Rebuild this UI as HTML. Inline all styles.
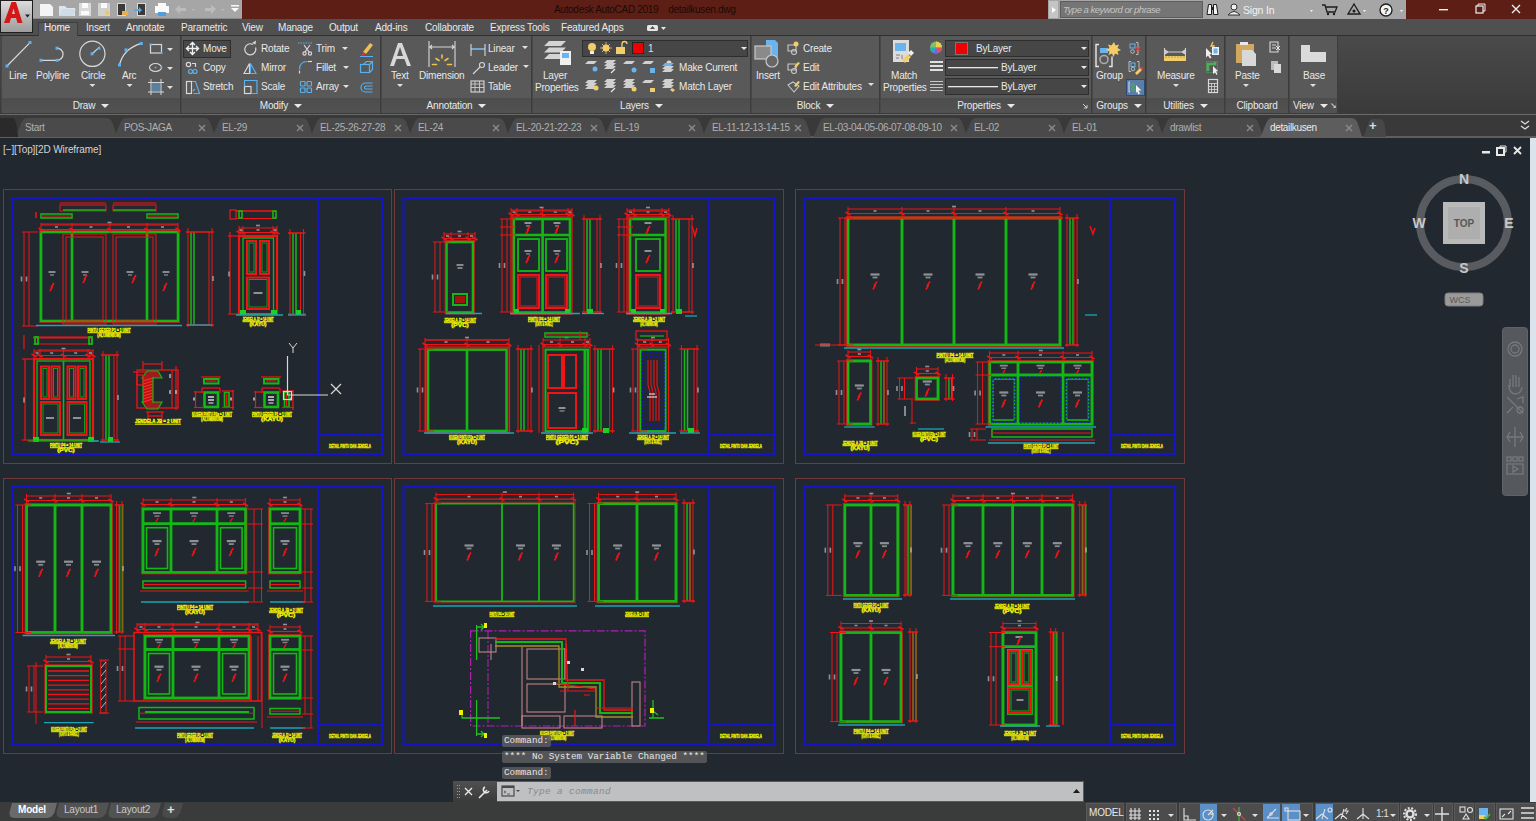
<!DOCTYPE html>
<html><head><meta charset="utf-8">
<style>
*{margin:0;padding:0;box-sizing:border-box}
html,body{width:1536px;height:821px;overflow:hidden;background:#212830;font-family:"Liberation Sans",sans-serif;position:relative}
.a{position:absolute}
.t{position:absolute;white-space:nowrap;color:#e8e8e8;font-size:10px;line-height:12px;letter-spacing:-0.2px}
svg{overflow:visible}
#title{left:0;top:0;width:1536px;height:19px;background:#5d1f15}
#qat{left:33px;top:0;width:209px;height:19px;background:#a6a6a6;border-bottom:1px solid #8a8a8a}
#logo{left:0;top:0;width:33px;height:33px;background:linear-gradient(#dcdcdc,#b4b4b4 60%,#9c9c9c);border:1px solid #1e1e1e}
#tabrow{left:0;top:19px;width:1536px;height:17px;background:#505050;border-bottom:1px solid #2f2f2f}
#ribbon{left:0;top:36px;width:1536px;height:78px;background:linear-gradient(#4a4a4a,#3a3a3a)}
.panel{position:absolute;top:0;height:77px;background:#595959;border-left:1px solid #474747;border-right:1px solid #3d3d3d}
.ptitle{position:absolute;left:0;top:62px;width:100%;height:15px;background:linear-gradient(#4d4d4d,#525252);text-align:center;font-size:10px;line-height:15px;color:#e8e8e8;letter-spacing:-0.2px}
.ptitle i{display:inline-block;width:0;height:0;border-left:4px solid transparent;border-right:4px solid transparent;border-top:4px solid #e8e8e8;margin-left:6px;vertical-align:1px}
.dd{position:absolute;width:0;height:0;border-left:3px solid transparent;border-right:3px solid transparent;border-top:3px solid #e0e0e0}
#filetabs{left:0;top:114px;width:1536px;height:24px;background:#393939;border-top:1px solid #6a6a6a;border-bottom:2px solid #5e5e5e}
.ftab{position:absolute;top:3px;height:19px;background:#4a4a4a;border-radius:7px 7px 0 0;color:#ababab;font-size:9.5px;line-height:18px;padding-left:8px;letter-spacing:-0.35px}
.ftab b{position:absolute;right:8px;top:0;color:#8a8a8a;font-weight:normal;font-size:12px}
#status{left:0;top:802px;width:1536px;height:19px;background:#3a3b3b}
.sb{position:absolute;top:803px;height:18px;background:#4c4c4c;border:1px solid #5a5a5a;border-bottom:none}
.hl{position:absolute;top:804px;height:17px;background:#5b8fc7}
.cmdh{position:absolute;left:502px;height:12px;background:rgba(92,92,92,0.85);border-radius:2px;font-family:"Liberation Mono",monospace;font-size:9.3px;line-height:12px;color:#e6e6e6;padding:0 2px}
</style></head><body>
<svg class="a" style="left:0;top:0" width="1536" height="821" viewBox="0 0 1536 821">
<g id="sheets" fill="none">
<rect x="3.5" y="189.5" width="388.0" height="274.0" stroke="#6e3a3a" stroke-width="1" fill="none" />
<rect x="12.5" y="198.0" width="369.5" height="256.0" stroke="#1414c8" stroke-width="2" fill="none"/>
<line x1="318.0" y1="198.0" x2="318.0" y2="454.0" stroke="#1414c8" stroke-width="2" />
<line x1="318.0" y1="435.0" x2="382.0" y2="435.0" stroke="#1414c8" stroke-width="2" />
<text x="329.0" y="447.5" font-size="5.4" fill="#f0f000" stroke="#f0f000" stroke-width="0.4" font-family="Liberation Sans" font-weight="bold" textLength="42" lengthAdjust="spacingAndGlyphs">DETAIL PINTU DAN JENDELA</text>
<rect x="41.0" y="232.0" width="137.0" height="89.0" stroke="#14b814" stroke-width="2.6" fill="none"/>
<rect x="39.5" y="230.5" width="140.0" height="92.0" stroke="#f01414" stroke-width="0.8" fill="none" opacity="0.8"/>
<line x1="72.0" y1="232.0" x2="72.0" y2="321.0" stroke="#14b814" stroke-width="2.6" />
<line x1="147.0" y1="232.0" x2="147.0" y2="321.0" stroke="#14b814" stroke-width="2.6" />
<line x1="41.0" y1="225.0" x2="178.0" y2="225.0" stroke="#f01414" stroke-width="1" />
<line x1="41.0" y1="229.5" x2="178.0" y2="229.5" stroke="#f01414" stroke-width="1.2" />
<line x1="41.0" y1="223.0" x2="41.0" y2="233.0" stroke="#f01414" stroke-width="1" />
<path d="M38.5 228.0 L43.5 231.0" stroke="#f01414" stroke-width="1.5"/>
<line x1="72.0" y1="223.0" x2="72.0" y2="233.0" stroke="#f01414" stroke-width="1" />
<path d="M69.5 228.0 L74.5 231.0" stroke="#f01414" stroke-width="1.5"/>
<line x1="110.0" y1="223.0" x2="110.0" y2="233.0" stroke="#f01414" stroke-width="1" />
<path d="M107.5 228.0 L112.5 231.0" stroke="#f01414" stroke-width="1.5"/>
<line x1="147.0" y1="223.0" x2="147.0" y2="233.0" stroke="#f01414" stroke-width="1" />
<path d="M144.5 228.0 L149.5 231.0" stroke="#f01414" stroke-width="1.5"/>
<line x1="178.0" y1="223.0" x2="178.0" y2="233.0" stroke="#f01414" stroke-width="1" />
<path d="M175.5 228.0 L180.5 231.0" stroke="#f01414" stroke-width="1.5"/>
<rect x="55.0" y="226.2" width="3.0" height="1.6" fill="#d8d8d8" opacity="0.6"/>
<rect x="89.5" y="226.2" width="3.0" height="1.6" fill="#d8d8d8" opacity="0.6"/>
<rect x="127.0" y="226.2" width="3.0" height="1.6" fill="#d8d8d8" opacity="0.6"/>
<rect x="161.0" y="226.2" width="3.0" height="1.6" fill="#d8d8d8" opacity="0.6"/>
<rect x="107.5" y="221.7" width="4.0" height="1.6" fill="#d8d8d8" opacity="0.6"/>
<line x1="41.0" y1="224.0" x2="178.0" y2="224.0" stroke="#f01414" stroke-width="1" />
<line x1="24.0" y1="232.0" x2="24.0" y2="326.0" stroke="#f01414" stroke-width="1" />
<line x1="29.0" y1="232.0" x2="29.0" y2="326.0" stroke="#f01414" stroke-width="1" />
<line x1="22.0" y1="232.0" x2="38.0" y2="232.0" stroke="#f01414" stroke-width="1" />
<line x1="22.0" y1="326.0" x2="38.0" y2="326.0" stroke="#f01414" stroke-width="1" />
<rect x="20.7" y="276.5" width="1.6" height="5.0" fill="#d8d8d8" opacity="0.6"/>
<rect x="25.7" y="276.5" width="1.6" height="5.0" fill="#d8d8d8" opacity="0.6"/>
<rect x="63.0" y="234.0" width="43.0" height="90.0" stroke="#f01414" stroke-width="1" fill="none" />
<rect x="66.0" y="237.0" width="37.0" height="84.0" stroke="#f01414" stroke-width="1" fill="none" />
<rect x="113.0" y="234.0" width="43.0" height="90.0" stroke="#f01414" stroke-width="1" fill="none" />
<rect x="116.0" y="237.0" width="37.0" height="84.0" stroke="#f01414" stroke-width="1" fill="none" />
<line x1="36.0" y1="325.5" x2="182.0" y2="325.5" stroke="#1aa6b4" stroke-width="1.3" />
<rect x="48.5" y="271.0" width="7.0" height="2.0" fill="#d8d8d8" opacity="0.55"/>
<rect x="50.0" y="274.2" width="4.0" height="1.5" fill="#d8d8d8" opacity="0.5"/>
<rect x="81.5" y="271.0" width="7.0" height="2.0" fill="#d8d8d8" opacity="0.55"/>
<rect x="83.0" y="274.2" width="4.0" height="1.5" fill="#d8d8d8" opacity="0.5"/>
<rect x="126.5" y="271.0" width="7.0" height="2.0" fill="#d8d8d8" opacity="0.55"/>
<rect x="128.0" y="274.2" width="4.0" height="1.5" fill="#d8d8d8" opacity="0.5"/>
<rect x="162.5" y="271.0" width="7.0" height="2.0" fill="#d8d8d8" opacity="0.55"/>
<rect x="164.0" y="274.2" width="4.0" height="1.5" fill="#d8d8d8" opacity="0.5"/>
<path d="M50.0 291.0 L52.5 286.5 L51.0 287.5 L54.0 283.0" stroke="#f01414" stroke-width="1.6" fill="none"/>
<path d="M83.0 283.0 L85.5 278.5 L84.0 279.5 L87.0 275.0" stroke="#f01414" stroke-width="1.6" fill="none"/>
<path d="M132.0 283.0 L134.5 278.5 L133.0 279.5 L136.0 275.0" stroke="#f01414" stroke-width="1.6" fill="none"/>
<path d="M163.0 291.0 L165.5 286.5 L164.0 287.5 L167.0 283.0" stroke="#f01414" stroke-width="1.6" fill="none"/>
<rect x="41.0" y="214.0" width="31.0" height="4.0" stroke="#14b814" stroke-width="1.5" fill="none" />
<rect x="147.0" y="214.0" width="31.0" height="4.0" stroke="#14b814" stroke-width="1.5" fill="none" />
<line x1="41.0" y1="216.0" x2="72.0" y2="216.0" stroke="#f01414" stroke-width="1" />
<line x1="147.0" y1="216.0" x2="178.0" y2="216.0" stroke="#f01414" stroke-width="1" />
<rect x="60.0" y="205.0" width="46.0" height="6.0" stroke="#f01414" stroke-width="1" fill="none" />
<rect x="113.0" y="205.0" width="43.0" height="6.0" stroke="#f01414" stroke-width="1" fill="none" />
<line x1="60.0" y1="203.0" x2="106.0" y2="203.0" stroke="#f01414" stroke-width="1" />
<line x1="113.0" y1="203.0" x2="156.0" y2="203.0" stroke="#f01414" stroke-width="1" />
<line x1="63.0" y1="210.0" x2="106.0" y2="210.0" stroke="#14b814" stroke-width="1.5" />
<line x1="113.0" y1="210.0" x2="156.0" y2="210.0" stroke="#14b814" stroke-width="1.5" />
<line x1="36.0" y1="212.0" x2="36.0" y2="218.0" stroke="#f01414" stroke-width="1.5" />
<line x1="191.0" y1="232.0" x2="191.0" y2="325.0" stroke="#14b814" stroke-width="1.5" />
<line x1="194.0" y1="232.0" x2="194.0" y2="325.0" stroke="#14b814" stroke-width="1.5" />
<line x1="188.0" y1="228.0" x2="188.0" y2="327.0" stroke="#f01414" stroke-width="1" />
<line x1="212.0" y1="228.0" x2="212.0" y2="327.0" stroke="#f01414" stroke-width="1" />
<line x1="209.0" y1="232.0" x2="209.0" y2="325.0" stroke="#f01414" stroke-width="1" />
<line x1="186.0" y1="232.0" x2="214.0" y2="232.0" stroke="#f01414" stroke-width="1.5" />
<line x1="186.0" y1="325.0" x2="214.0" y2="325.0" stroke="#f01414" stroke-width="1.5" />
<rect x="212.2" y="276.0" width="1.6" height="5.0" fill="#d8d8d8" opacity="0.6"/>
<line x1="187.0" y1="325.0" x2="212.0" y2="325.0" stroke="#1aa6b4" stroke-width="1.3" />
<rect x="239.0" y="236.0" width="38.0" height="78.0" stroke="#f01414" stroke-width="2.2" fill="none" />
<rect x="243.0" y="238.0" width="30.5" height="76.0" stroke="#14b814" stroke-width="1.3" fill="none" />
<rect x="247.0" y="241.0" width="9.0" height="33.0" stroke="#f01414" stroke-width="2" fill="none" />
<rect x="249.0" y="243.0" width="5.0" height="29.0" stroke="#14b814" stroke-width="0.8" fill="none" />
<rect x="260.0" y="241.0" width="9.0" height="33.0" stroke="#f01414" stroke-width="2" fill="none" />
<rect x="262.0" y="243.0" width="5.0" height="29.0" stroke="#14b814" stroke-width="0.8" fill="none" />
<rect x="247.0" y="277.5" width="22.0" height="31.5" stroke="#f01414" stroke-width="2" fill="none" />
<rect x="249.0" y="279.5" width="18.0" height="27.5" stroke="#14b814" stroke-width="0.8" fill="none" />
<rect x="253.5" y="292.0" width="9.0" height="2.0" fill="#d8d8d8" opacity="0.6"/>
<line x1="239.0" y1="228.0" x2="277.0" y2="228.0" stroke="#f01414" stroke-width="1" />
<line x1="239.0" y1="232.5" x2="277.0" y2="232.5" stroke="#f01414" stroke-width="1.2" />
<line x1="239.0" y1="226.0" x2="239.0" y2="236.0" stroke="#f01414" stroke-width="1" />
<path d="M236.5 231.0 L241.5 234.0" stroke="#f01414" stroke-width="1.5"/>
<line x1="243.0" y1="226.0" x2="243.0" y2="236.0" stroke="#f01414" stroke-width="1" />
<path d="M240.5 231.0 L245.5 234.0" stroke="#f01414" stroke-width="1.5"/>
<line x1="273.0" y1="226.0" x2="273.0" y2="236.0" stroke="#f01414" stroke-width="1" />
<path d="M270.5 231.0 L275.5 234.0" stroke="#f01414" stroke-width="1.5"/>
<line x1="277.0" y1="226.0" x2="277.0" y2="236.0" stroke="#f01414" stroke-width="1" />
<path d="M274.5 231.0 L279.5 234.0" stroke="#f01414" stroke-width="1.5"/>
<rect x="239.5" y="229.2" width="3.0" height="1.6" fill="#d8d8d8" opacity="0.6"/>
<rect x="256.5" y="229.2" width="3.0" height="1.6" fill="#d8d8d8" opacity="0.6"/>
<rect x="273.5" y="229.2" width="3.0" height="1.6" fill="#d8d8d8" opacity="0.6"/>
<rect x="256.0" y="224.7" width="4.0" height="1.6" fill="#d8d8d8" opacity="0.6"/>
<line x1="230.0" y1="232.0" x2="230.0" y2="314.0" stroke="#f01414" stroke-width="1.2" />
<line x1="228.0" y1="236.0" x2="239.0" y2="236.0" stroke="#f01414" stroke-width="1.2" />
<line x1="228.0" y1="314.0" x2="239.0" y2="314.0" stroke="#f01414" stroke-width="1.2" />
<rect x="228.2" y="271.5" width="1.6" height="5.0" fill="#d8d8d8" opacity="0.6"/>
<line x1="236.0" y1="211.0" x2="276.0" y2="211.0" stroke="#f01414" stroke-width="1.6" />
<line x1="236.0" y1="218.5" x2="276.0" y2="218.5" stroke="#f01414" stroke-width="1.2" />
<rect x="239.0" y="211.0" width="3.0" height="7.0" stroke="#14b814" stroke-width="1.6" fill="none" />
<rect x="273.0" y="211.0" width="3.0" height="7.0" stroke="#14b814" stroke-width="1.6" fill="none" />
<rect x="230.0" y="210.0" width="6.0" height="9.0" stroke="#f01414" stroke-width="1.2" fill="none" />
<rect x="240.0" y="310.0" width="6.0" height="5.0" fill="#20d020"/>
<rect x="271.0" y="310.0" width="6.0" height="5.0" fill="#20d020"/>
<line x1="236.0" y1="315.0" x2="283.0" y2="315.0" stroke="#1aa6b4" stroke-width="1.3" />
<line x1="293.0" y1="233.0" x2="293.0" y2="314.0" stroke="#14b814" stroke-width="1.5" />
<line x1="296.0" y1="233.0" x2="296.0" y2="314.0" stroke="#14b814" stroke-width="1.5" />
<line x1="290.0" y1="229.0" x2="290.0" y2="316.0" stroke="#f01414" stroke-width="1" />
<line x1="303.5" y1="229.0" x2="303.5" y2="316.0" stroke="#f01414" stroke-width="1" />
<line x1="300.5" y1="233.0" x2="300.5" y2="314.0" stroke="#f01414" stroke-width="1" />
<line x1="288.0" y1="233.0" x2="305.5" y2="233.0" stroke="#f01414" stroke-width="1.5" />
<line x1="288.0" y1="314.0" x2="305.5" y2="314.0" stroke="#f01414" stroke-width="1.5" />
<rect x="303.7" y="271.0" width="1.6" height="5.0" fill="#d8d8d8" opacity="0.6"/>
<rect x="296.0" y="310.0" width="5.0" height="5.0" fill="#20d020"/>
<line x1="288.0" y1="315.0" x2="306.0" y2="315.0" stroke="#1aa6b4" stroke-width="1.3" />
<text x="109.0" y="331.6" font-size="5.60" fill="#f0f000" stroke="#f0f000" stroke-width="0.45" text-anchor="middle" font-family="Liberation Sans" font-weight="bold" textLength="43.0" lengthAdjust="spacingAndGlyphs">PINTU GESER P1 = 1 UNIT</text>
<rect x="87.5" y="332.2" width="43.0" height="1.0" fill="#f0f000"/>
<text x="109.0" y="336.6" font-size="4.8" fill="#f0f000" stroke="#f0f000" stroke-width="0.35" text-anchor="middle" font-family="Liberation Sans" font-weight="bold" textLength="23.7" lengthAdjust="spacingAndGlyphs">(ALUMINIUM)</text>
<text x="258.0" y="320.6" font-size="5.60" fill="#f0f000" stroke="#f0f000" stroke-width="0.45" text-anchor="middle" font-family="Liberation Sans" font-weight="bold" textLength="31.0" lengthAdjust="spacingAndGlyphs">JENDELA J2 = 14 UNIT</text>
<rect x="242.5" y="321.2" width="31.0" height="1.0" fill="#f0f000"/>
<text x="258.0" y="325.6" font-size="4.8" fill="#f0f000" stroke="#f0f000" stroke-width="0.35" text-anchor="middle" font-family="Liberation Sans" font-weight="bold" textLength="17.1" lengthAdjust="spacingAndGlyphs">(KAYU)</text>
<rect x="34.0" y="359.0" width="59.0" height="81.0" stroke="#f01414" stroke-width="2.2" fill="none" />
<rect x="37.0" y="361.0" width="53.0" height="79.0" stroke="#14b814" stroke-width="1.3" fill="none" />
<line x1="63.5" y1="361.0" x2="63.5" y2="440.0" stroke="#14b814" stroke-width="1.6" />
<rect x="41.0" y="366.5" width="8.0" height="32.5" stroke="#f01414" stroke-width="2" fill="none" />
<rect x="43.0" y="368.5" width="4.0" height="28.5" stroke="#14b814" stroke-width="0.8" fill="none" />
<rect x="51.5" y="366.5" width="8.0" height="32.5" stroke="#f01414" stroke-width="2" fill="none" />
<rect x="53.5" y="368.5" width="4.0" height="28.5" stroke="#14b814" stroke-width="0.8" fill="none" />
<rect x="67.5" y="366.5" width="8.0" height="32.5" stroke="#f01414" stroke-width="2" fill="none" />
<rect x="69.5" y="368.5" width="4.0" height="28.5" stroke="#14b814" stroke-width="0.8" fill="none" />
<rect x="78.0" y="366.5" width="8.0" height="32.5" stroke="#f01414" stroke-width="2" fill="none" />
<rect x="80.0" y="368.5" width="4.0" height="28.5" stroke="#14b814" stroke-width="0.8" fill="none" />
<rect x="41.0" y="402.0" width="19.0" height="33.0" stroke="#f01414" stroke-width="2" fill="none" />
<rect x="43.0" y="404.0" width="15.0" height="29.0" stroke="#14b814" stroke-width="0.8" fill="none" />
<rect x="67.5" y="402.0" width="19.0" height="33.0" stroke="#f01414" stroke-width="2" fill="none" />
<rect x="69.5" y="404.0" width="15.0" height="29.0" stroke="#14b814" stroke-width="0.8" fill="none" />
<rect x="46.0" y="417.0" width="8.0" height="2.0" fill="#d8d8d8" opacity="0.6"/>
<rect x="73.0" y="417.0" width="8.0" height="2.0" fill="#d8d8d8" opacity="0.6"/>
<line x1="34.0" y1="351.0" x2="93.0" y2="351.0" stroke="#f01414" stroke-width="1" />
<line x1="34.0" y1="355.5" x2="93.0" y2="355.5" stroke="#f01414" stroke-width="1.2" />
<line x1="34.0" y1="349.0" x2="34.0" y2="359.0" stroke="#f01414" stroke-width="1" />
<path d="M31.5 354.0 L36.5 357.0" stroke="#f01414" stroke-width="1.5"/>
<line x1="40.0" y1="349.0" x2="40.0" y2="359.0" stroke="#f01414" stroke-width="1" />
<path d="M37.5 354.0 L42.5 357.0" stroke="#f01414" stroke-width="1.5"/>
<line x1="63.5" y1="349.0" x2="63.5" y2="359.0" stroke="#f01414" stroke-width="1" />
<path d="M61.0 354.0 L66.0 357.0" stroke="#f01414" stroke-width="1.5"/>
<line x1="88.0" y1="349.0" x2="88.0" y2="359.0" stroke="#f01414" stroke-width="1" />
<path d="M85.5 354.0 L90.5 357.0" stroke="#f01414" stroke-width="1.5"/>
<line x1="93.0" y1="349.0" x2="93.0" y2="359.0" stroke="#f01414" stroke-width="1" />
<path d="M90.5 354.0 L95.5 357.0" stroke="#f01414" stroke-width="1.5"/>
<rect x="35.5" y="352.2" width="3.0" height="1.6" fill="#d8d8d8" opacity="0.6"/>
<rect x="50.2" y="352.2" width="3.0" height="1.6" fill="#d8d8d8" opacity="0.6"/>
<rect x="74.2" y="352.2" width="3.0" height="1.6" fill="#d8d8d8" opacity="0.6"/>
<rect x="89.0" y="352.2" width="3.0" height="1.6" fill="#d8d8d8" opacity="0.6"/>
<rect x="61.5" y="347.7" width="4.0" height="1.6" fill="#d8d8d8" opacity="0.6"/>
<line x1="25.0" y1="359.0" x2="25.0" y2="440.0" stroke="#f01414" stroke-width="1.2" />
<line x1="22.0" y1="359.0" x2="34.0" y2="359.0" stroke="#f01414" stroke-width="1.2" />
<line x1="22.0" y1="440.0" x2="34.0" y2="440.0" stroke="#f01414" stroke-width="1.2" />
<rect x="23.2" y="397.5" width="1.6" height="5.0" fill="#d8d8d8" opacity="0.6"/>
<line x1="33.0" y1="337.5" x2="92.0" y2="337.5" stroke="#f01414" stroke-width="1.8" />
<line x1="33.0" y1="344.0" x2="92.0" y2="344.0" stroke="#f01414" stroke-width="1.2" />
<line x1="38.0" y1="350.0" x2="91.0" y2="350.0" stroke="#f01414" stroke-width="1.2" />
<rect x="35.0" y="337.0" width="3.0" height="7.0" stroke="#14b814" stroke-width="1.8" fill="none" />
<rect x="89.0" y="337.0" width="3.0" height="7.0" stroke="#14b814" stroke-width="1.8" fill="none" />
<line x1="24.0" y1="335.0" x2="24.0" y2="349.0" stroke="#f01414" stroke-width="1.2" />
<rect x="33.0" y="437.0" width="6.0" height="5.0" fill="#20d020"/>
<rect x="88.0" y="437.0" width="6.0" height="5.0" fill="#20d020"/>
<line x1="28.0" y1="441.0" x2="98.0" y2="441.0" stroke="#14b814" stroke-width="1.2" />
<line x1="92.0" y1="441.0" x2="99.0" y2="441.0" stroke="#1aa6b4" stroke-width="1.3" />
<line x1="106.0" y1="355.0" x2="106.0" y2="440.0" stroke="#14b814" stroke-width="1.5" />
<line x1="109.0" y1="355.0" x2="109.0" y2="440.0" stroke="#14b814" stroke-width="1.5" />
<line x1="103.0" y1="351.0" x2="103.0" y2="442.0" stroke="#f01414" stroke-width="1" />
<line x1="117.0" y1="351.0" x2="117.0" y2="442.0" stroke="#f01414" stroke-width="1" />
<line x1="114.0" y1="355.0" x2="114.0" y2="440.0" stroke="#f01414" stroke-width="1" />
<line x1="101.0" y1="355.0" x2="119.0" y2="355.0" stroke="#f01414" stroke-width="1.5" />
<line x1="101.0" y1="440.0" x2="119.0" y2="440.0" stroke="#f01414" stroke-width="1.5" />
<rect x="117.2" y="395.0" width="1.6" height="5.0" fill="#d8d8d8" opacity="0.6"/>
<rect x="108.0" y="437.0" width="5.0" height="5.0" fill="#20d020"/>
<line x1="100.0" y1="442.0" x2="120.0" y2="442.0" stroke="#1aa6b4" stroke-width="1.3" />
<text x="66.0" y="446.6" font-size="5.60" fill="#f0f000" stroke="#f0f000" stroke-width="0.45" text-anchor="middle" font-family="Liberation Sans" font-weight="bold" textLength="32.0" lengthAdjust="spacingAndGlyphs">PINTU P4 = 14 UNIT</text>
<rect x="50.0" y="447.2" width="32.0" height="1.0" fill="#f0f000"/>
<text x="66.0" y="451.6" font-size="4.8" fill="#f0f000" stroke="#f0f000" stroke-width="0.35" text-anchor="middle" font-family="Liberation Sans" font-weight="bold" textLength="17.6" lengthAdjust="spacingAndGlyphs">(PVC)</text>
<rect x="137.0" y="370.0" width="41.0" height="38.0" stroke="#f01414" stroke-width="1.3" fill="none" />
<path d="M142 378 L147 371 L158 371 L162 378 Z M142 402 L147 409 L158 409 L162 402 Z" stroke="#14b814" stroke-width="1.2" fill="#f01414" fill-opacity="0.6"/>
<rect x="143.0" y="377.0" width="10.0" height="26.0" fill="#c01010"/>
<line x1="143.0" y1="381.0" x2="153.0" y2="378.0" stroke="#ff4040" stroke-width="0.8" />
<line x1="143.0" y1="384.0" x2="153.0" y2="381.0" stroke="#ff4040" stroke-width="0.8" />
<line x1="143.0" y1="387.0" x2="153.0" y2="384.0" stroke="#ff4040" stroke-width="0.8" />
<line x1="143.0" y1="390.0" x2="153.0" y2="387.0" stroke="#ff4040" stroke-width="0.8" />
<line x1="143.0" y1="393.0" x2="153.0" y2="390.0" stroke="#ff4040" stroke-width="0.8" />
<line x1="143.0" y1="396.0" x2="153.0" y2="393.0" stroke="#ff4040" stroke-width="0.8" />
<line x1="143.0" y1="399.0" x2="153.0" y2="396.0" stroke="#ff4040" stroke-width="0.8" />
<line x1="143.0" y1="402.0" x2="153.0" y2="399.0" stroke="#ff4040" stroke-width="0.8" />
<line x1="143.0" y1="377.0" x2="143.0" y2="403.0" stroke="#14b814" stroke-width="1.2" />
<line x1="153.0" y1="377.0" x2="153.0" y2="403.0" stroke="#14b814" stroke-width="1.2" />
<line x1="133.0" y1="372.0" x2="146.0" y2="372.0" stroke="#f01414" stroke-width="1.2" />
<line x1="143.0" y1="364.0" x2="162.0" y2="364.0" stroke="#f01414" stroke-width="1.2" />
<line x1="143.0" y1="361.0" x2="143.0" y2="370.0" stroke="#f01414" stroke-width="1.2" />
<line x1="162.0" y1="361.0" x2="162.0" y2="370.0" stroke="#f01414" stroke-width="1.2" />
<line x1="172.0" y1="370.0" x2="172.0" y2="408.0" stroke="#f01414" stroke-width="1.2" />
<line x1="176.0" y1="366.0" x2="176.0" y2="410.0" stroke="#f01414" stroke-width="1.2" />
<line x1="146.0" y1="412.0" x2="164.0" y2="412.0" stroke="#f01414" stroke-width="1.2" />
<line x1="148.0" y1="416.0" x2="162.0" y2="416.0" stroke="#f01414" stroke-width="1.2" />
<line x1="148.0" y1="412.0" x2="148.0" y2="419.0" stroke="#f01414" stroke-width="1.2" />
<line x1="162.0" y1="412.0" x2="162.0" y2="419.0" stroke="#f01414" stroke-width="1.2" />
<rect x="137.0" y="375.0" width="6.0" height="10.0" stroke="#f01414" stroke-width="1.2" fill="none" />
<rect x="169.0" y="374.0" width="2.0" height="4.0" fill="#d8d8d8" opacity="0.6"/>
<rect x="169.0" y="390.0" width="2.0" height="4.0" fill="#d8d8d8" opacity="0.6"/>
<rect x="175.0" y="390.0" width="2.0" height="4.0" fill="#d8d8d8" opacity="0.6"/>
<text x="158.0" y="423.1" font-size="5.60" fill="#f0f000" stroke="#f0f000" stroke-width="0.45" text-anchor="middle" font-family="Liberation Sans" font-weight="bold" textLength="46.0" lengthAdjust="spacingAndGlyphs">JENDELA JB = 2 UNIT</text>
<rect x="135.0" y="423.7" width="46.0" height="1.0" fill="#f0f000"/>
<rect x="204.0" y="379.0" width="14.5" height="4.5" stroke="#14b814" stroke-width="2" fill="none" />
<line x1="206.0" y1="381.0" x2="216.5" y2="381.0" stroke="#f01414" stroke-width="1.2" />
<line x1="201.0" y1="377.0" x2="221.0" y2="377.0" stroke="#f01414" stroke-width="1.3" />
<rect x="204.5" y="392.5" width="13.5" height="14.5" stroke="#14b814" stroke-width="2.6" fill="none" />
<rect x="208.0" y="396.0" width="6.0" height="2.0" fill="#d8d8d8" opacity="0.75"/>
<rect x="208.0" y="399.0" width="6.0" height="2.0" fill="#d8d8d8" opacity="0.75"/>
<rect x="208.5" y="402.2" width="5.0" height="1.6" fill="#d8d8d8" opacity="0.7"/>
<line x1="202.0" y1="388.0" x2="220.0" y2="388.0" stroke="#f01414" stroke-width="1.3" />
<line x1="202.0" y1="388.0" x2="202.0" y2="393.0" stroke="#f01414" stroke-width="1.2" />
<line x1="220.0" y1="388.0" x2="220.0" y2="393.0" stroke="#f01414" stroke-width="1.2" />
<line x1="195.5" y1="391.0" x2="195.5" y2="408.0" stroke="#f01414" stroke-width="1.2" />
<line x1="194.0" y1="392.0" x2="204.0" y2="392.0" stroke="#f01414" stroke-width="1.2" />
<line x1="194.0" y1="407.5" x2="204.0" y2="407.5" stroke="#f01414" stroke-width="1.2" />
<rect x="224.5" y="392.5" width="4.5" height="14.5" stroke="#14b814" stroke-width="1.6" fill="none" />
<line x1="226.7" y1="394.0" x2="226.7" y2="406.0" stroke="#f01414" stroke-width="1.3" />
<line x1="233.0" y1="390.0" x2="233.0" y2="410.0" stroke="#f01414" stroke-width="1.3" />
<line x1="222.0" y1="391.0" x2="234.0" y2="391.0" stroke="#f01414" stroke-width="1.2" />
<line x1="222.0" y1="407.5" x2="234.0" y2="407.5" stroke="#f01414" stroke-width="1.2" />
<rect x="193.0" y="397.5" width="2.0" height="3.0" fill="#d8d8d8" opacity="0.7"/>
<rect x="230.0" y="397.5" width="2.0" height="3.0" fill="#d8d8d8" opacity="0.7"/>
<text x="212.0" y="415.6" font-size="5.60" fill="#f0f000" stroke="#f0f000" stroke-width="0.45" text-anchor="middle" font-family="Liberation Sans" font-weight="bold" textLength="40.0" lengthAdjust="spacingAndGlyphs">KUSEN PINTU P2a = 2 UNIT</text>
<rect x="192.0" y="416.2" width="40.0" height="1.0" fill="#f0f000"/>
<text x="212.0" y="420.6" font-size="4.8" fill="#f0f000" stroke="#f0f000" stroke-width="0.35" text-anchor="middle" font-family="Liberation Sans" font-weight="bold" textLength="22.0" lengthAdjust="spacingAndGlyphs">(ALUMINIUM)</text>
<rect x="264.0" y="379.0" width="14.5" height="4.5" stroke="#14b814" stroke-width="2" fill="none" />
<line x1="266.0" y1="381.0" x2="276.5" y2="381.0" stroke="#f01414" stroke-width="1.2" />
<line x1="261.0" y1="377.0" x2="281.0" y2="377.0" stroke="#f01414" stroke-width="1.3" />
<rect x="264.5" y="392.5" width="13.5" height="14.5" stroke="#14b814" stroke-width="2.6" fill="none" />
<rect x="268.0" y="396.0" width="6.0" height="2.0" fill="#d8d8d8" opacity="0.75"/>
<rect x="268.0" y="399.0" width="6.0" height="2.0" fill="#d8d8d8" opacity="0.75"/>
<rect x="268.5" y="402.2" width="5.0" height="1.6" fill="#d8d8d8" opacity="0.7"/>
<line x1="262.0" y1="388.0" x2="280.0" y2="388.0" stroke="#f01414" stroke-width="1.3" />
<line x1="262.0" y1="388.0" x2="262.0" y2="393.0" stroke="#f01414" stroke-width="1.2" />
<line x1="280.0" y1="388.0" x2="280.0" y2="393.0" stroke="#f01414" stroke-width="1.2" />
<line x1="255.5" y1="391.0" x2="255.5" y2="408.0" stroke="#f01414" stroke-width="1.2" />
<line x1="254.0" y1="392.0" x2="264.0" y2="392.0" stroke="#f01414" stroke-width="1.2" />
<line x1="254.0" y1="407.5" x2="264.0" y2="407.5" stroke="#f01414" stroke-width="1.2" />
<rect x="284.5" y="392.5" width="4.5" height="14.5" stroke="#14b814" stroke-width="1.6" fill="none" />
<line x1="286.7" y1="394.0" x2="286.7" y2="406.0" stroke="#f01414" stroke-width="1.3" />
<line x1="293.0" y1="390.0" x2="293.0" y2="410.0" stroke="#f01414" stroke-width="1.3" />
<line x1="282.0" y1="391.0" x2="294.0" y2="391.0" stroke="#f01414" stroke-width="1.2" />
<line x1="282.0" y1="407.5" x2="294.0" y2="407.5" stroke="#f01414" stroke-width="1.2" />
<rect x="253.0" y="397.5" width="2.0" height="3.0" fill="#d8d8d8" opacity="0.7"/>
<rect x="290.0" y="397.5" width="2.0" height="3.0" fill="#d8d8d8" opacity="0.7"/>
<text x="272.0" y="415.6" font-size="5.60" fill="#f0f000" stroke="#f0f000" stroke-width="0.45" text-anchor="middle" font-family="Liberation Sans" font-weight="bold" textLength="40.0" lengthAdjust="spacingAndGlyphs">PINTU GESER P1 = 1 UNIT</text>
<rect x="252.0" y="416.2" width="40.0" height="1.0" fill="#f0f000"/>
<text x="272.0" y="420.6" font-size="4.8" fill="#f0f000" stroke="#f0f000" stroke-width="0.35" text-anchor="middle" font-family="Liberation Sans" font-weight="bold" textLength="22.0" lengthAdjust="spacingAndGlyphs">(KAYU)</text>
<line x1="287.5" y1="356.0" x2="287.5" y2="395.0" stroke="#d8d8d8" stroke-width="1.2" />
<line x1="287.0" y1="395.0" x2="328.0" y2="395.0" stroke="#d8d8d8" stroke-width="1.2" />
<rect x="283.5" y="391.5" width="8.0" height="8.0" stroke="#d8d8d8" stroke-width="1.2" fill="none" />
<path d="M289 343 L293 348 L297 343 M293 348 L293 353" stroke="#d8d8d8" stroke-width="1" fill="none"/>
<path d="M331 384 L341 394 M341 384 L331 394" stroke="#d8d8d8" stroke-width="1.2" fill="none"/>
<rect x="394.5" y="189.5" width="389.0" height="274.0" stroke="#6e3a3a" stroke-width="1" fill="none" />
<rect x="403.5" y="198.0" width="370.5" height="256.0" stroke="#1414c8" stroke-width="2" fill="none"/>
<line x1="709.0" y1="198.0" x2="709.0" y2="454.0" stroke="#1414c8" stroke-width="2" />
<line x1="709.0" y1="435.0" x2="774.0" y2="435.0" stroke="#1414c8" stroke-width="2" />
<text x="720.0" y="447.5" font-size="5.4" fill="#f0f000" stroke="#f0f000" stroke-width="0.4" font-family="Liberation Sans" font-weight="bold" textLength="42" lengthAdjust="spacingAndGlyphs">DETAIL PINTU DAN JENDELA</text>
<rect x="446.5" y="242.0" width="26.5" height="70.5" stroke="#14b814" stroke-width="2.6" fill="none"/>
<rect x="445.0" y="240.5" width="29.5" height="73.5" stroke="#f01414" stroke-width="0.8" fill="none" opacity="0.8"/>
<line x1="444.0" y1="234.0" x2="475.0" y2="234.0" stroke="#f01414" stroke-width="1" />
<line x1="444.0" y1="238.5" x2="475.0" y2="238.5" stroke="#f01414" stroke-width="1.2" />
<line x1="444.0" y1="232.0" x2="444.0" y2="242.0" stroke="#f01414" stroke-width="1" />
<path d="M441.5 237.0 L446.5 240.0" stroke="#f01414" stroke-width="1.5"/>
<line x1="451.0" y1="232.0" x2="451.0" y2="242.0" stroke="#f01414" stroke-width="1" />
<path d="M448.5 237.0 L453.5 240.0" stroke="#f01414" stroke-width="1.5"/>
<line x1="468.0" y1="232.0" x2="468.0" y2="242.0" stroke="#f01414" stroke-width="1" />
<path d="M465.5 237.0 L470.5 240.0" stroke="#f01414" stroke-width="1.5"/>
<line x1="475.0" y1="232.0" x2="475.0" y2="242.0" stroke="#f01414" stroke-width="1" />
<path d="M472.5 237.0 L477.5 240.0" stroke="#f01414" stroke-width="1.5"/>
<rect x="446.0" y="235.2" width="3.0" height="1.6" fill="#d8d8d8" opacity="0.6"/>
<rect x="458.0" y="235.2" width="3.0" height="1.6" fill="#d8d8d8" opacity="0.6"/>
<rect x="470.0" y="235.2" width="3.0" height="1.6" fill="#d8d8d8" opacity="0.6"/>
<rect x="457.5" y="230.7" width="4.0" height="1.6" fill="#d8d8d8" opacity="0.6"/>
<line x1="435.0" y1="242.0" x2="435.0" y2="312.0" stroke="#f01414" stroke-width="1" />
<line x1="440.0" y1="242.0" x2="440.0" y2="312.0" stroke="#f01414" stroke-width="1" />
<line x1="433.0" y1="242.0" x2="449.0" y2="242.0" stroke="#f01414" stroke-width="1" />
<line x1="433.0" y1="312.0" x2="449.0" y2="312.0" stroke="#f01414" stroke-width="1" />
<rect x="431.7" y="274.5" width="1.6" height="5.0" fill="#d8d8d8" opacity="0.6"/>
<rect x="436.7" y="274.5" width="1.6" height="5.0" fill="#d8d8d8" opacity="0.6"/>
<rect x="453.0" y="294.0" width="14.0" height="11.0" stroke="#14b814" stroke-width="2" fill="none" />
<rect x="455.0" y="296.0" width="10.0" height="7.0" fill="#a01414"/>
<rect x="456.5" y="264.0" width="7.0" height="2.0" fill="#d8d8d8" opacity="0.55"/>
<rect x="457.5" y="267.0" width="5.0" height="2.0" fill="#d8d8d8" opacity="0.5"/>
<line x1="446.0" y1="313.5" x2="482.0" y2="313.5" stroke="#1aa6b4" stroke-width="1.3" />
<text x="460.0" y="321.6" font-size="5.60" fill="#f0f000" stroke="#f0f000" stroke-width="0.45" text-anchor="middle" font-family="Liberation Sans" font-weight="bold" textLength="32.0" lengthAdjust="spacingAndGlyphs">JENDELA J2 = 14 UNIT</text>
<rect x="444.0" y="322.2" width="32.0" height="1.0" fill="#f0f000"/>
<text x="460.0" y="326.6" font-size="4.8" fill="#f0f000" stroke="#f0f000" stroke-width="0.35" text-anchor="middle" font-family="Liberation Sans" font-weight="bold" textLength="17.6" lengthAdjust="spacingAndGlyphs">(PVC)</text>
<rect x="513.7" y="219.0" width="56.3" height="93.5" stroke="#14b814" stroke-width="2.6" fill="none"/>
<rect x="512.2" y="217.5" width="59.3" height="96.5" stroke="#f01414" stroke-width="0.8" fill="none" opacity="0.8"/>
<line x1="542.6" y1="219.0" x2="542.6" y2="312.5" stroke="#14b814" stroke-width="2.6" />
<line x1="513.7" y1="235.0" x2="570.0" y2="235.0" stroke="#14b814" stroke-width="2.6" />
<rect x="511.0" y="217.0" width="61.0" height="97.0" stroke="#f01414" stroke-width="1.2" fill="none" />
<line x1="511.0" y1="210.0" x2="572.0" y2="210.0" stroke="#f01414" stroke-width="1" />
<line x1="511.0" y1="214.5" x2="572.0" y2="214.5" stroke="#f01414" stroke-width="1.2" />
<line x1="511.0" y1="208.0" x2="511.0" y2="218.0" stroke="#f01414" stroke-width="1" />
<path d="M508.5 213.0 L513.5 216.0" stroke="#f01414" stroke-width="1.5"/>
<line x1="517.0" y1="208.0" x2="517.0" y2="218.0" stroke="#f01414" stroke-width="1" />
<path d="M514.5 213.0 L519.5 216.0" stroke="#f01414" stroke-width="1.5"/>
<line x1="542.6" y1="208.0" x2="542.6" y2="218.0" stroke="#f01414" stroke-width="1" />
<path d="M540.1 213.0 L545.1 216.0" stroke="#f01414" stroke-width="1.5"/>
<line x1="568.0" y1="208.0" x2="568.0" y2="218.0" stroke="#f01414" stroke-width="1" />
<path d="M565.5 213.0 L570.5 216.0" stroke="#f01414" stroke-width="1.5"/>
<line x1="572.0" y1="208.0" x2="572.0" y2="218.0" stroke="#f01414" stroke-width="1" />
<path d="M569.5 213.0 L574.5 216.0" stroke="#f01414" stroke-width="1.5"/>
<rect x="512.5" y="211.2" width="3.0" height="1.6" fill="#d8d8d8" opacity="0.6"/>
<rect x="528.3" y="211.2" width="3.0" height="1.6" fill="#d8d8d8" opacity="0.6"/>
<rect x="553.8" y="211.2" width="3.0" height="1.6" fill="#d8d8d8" opacity="0.6"/>
<rect x="568.5" y="211.2" width="3.0" height="1.6" fill="#d8d8d8" opacity="0.6"/>
<rect x="539.5" y="206.7" width="4.0" height="1.6" fill="#d8d8d8" opacity="0.6"/>
<line x1="511.0" y1="211.0" x2="572.0" y2="211.0" stroke="#f01414" stroke-width="1" />
<line x1="502.0" y1="219.0" x2="502.0" y2="312.0" stroke="#f01414" stroke-width="1" />
<line x1="507.0" y1="219.0" x2="507.0" y2="312.0" stroke="#f01414" stroke-width="1" />
<line x1="500.0" y1="219.0" x2="516.0" y2="219.0" stroke="#f01414" stroke-width="1" />
<line x1="500.0" y1="227.0" x2="516.0" y2="227.0" stroke="#f01414" stroke-width="1" />
<line x1="500.0" y1="235.0" x2="516.0" y2="235.0" stroke="#f01414" stroke-width="1" />
<line x1="500.0" y1="312.0" x2="516.0" y2="312.0" stroke="#f01414" stroke-width="1" />
<rect x="498.7" y="263.0" width="1.6" height="5.0" fill="#d8d8d8" opacity="0.6"/>
<rect x="503.7" y="263.0" width="1.6" height="5.0" fill="#d8d8d8" opacity="0.6"/>
<rect x="518.0" y="239.0" width="21.0" height="32.0" stroke="#14b814" stroke-width="1.8" fill="none" />
<rect x="546.0" y="239.0" width="21.0" height="32.0" stroke="#14b814" stroke-width="1.8" fill="none" />
<rect x="518.0" y="275.0" width="21.0" height="33.0" stroke="#f01414" stroke-width="2" fill="none" />
<rect x="546.0" y="275.0" width="21.0" height="33.0" stroke="#f01414" stroke-width="2" fill="none" />
<rect x="520.0" y="277.0" width="17.0" height="29.0" stroke="#f01414" stroke-width="1" fill="none" />
<rect x="548.0" y="277.0" width="17.0" height="29.0" stroke="#f01414" stroke-width="1" fill="none" />
<rect x="524.5" y="222.0" width="7.0" height="2.0" fill="#d8d8d8" opacity="0.6"/>
<rect x="526.0" y="225.2" width="4.0" height="1.5" fill="#d8d8d8" opacity="0.5"/>
<path d="M526.0 234.0 L528.5 229.5 L527.0 230.5 L530.0 226.0" stroke="#f01414" stroke-width="1.6" fill="none"/>
<rect x="524.5" y="250.0" width="7.0" height="2.0" fill="#d8d8d8" opacity="0.6"/>
<rect x="526.0" y="253.2" width="4.0" height="1.5" fill="#d8d8d8" opacity="0.5"/>
<path d="M526.0 263.0 L528.5 258.5 L527.0 259.5 L530.0 255.0" stroke="#f01414" stroke-width="1.6" fill="none"/>
<rect x="553.5" y="222.0" width="7.0" height="2.0" fill="#d8d8d8" opacity="0.6"/>
<rect x="555.0" y="225.2" width="4.0" height="1.5" fill="#d8d8d8" opacity="0.5"/>
<path d="M555.0 234.0 L557.5 229.5 L556.0 230.5 L559.0 226.0" stroke="#f01414" stroke-width="1.6" fill="none"/>
<rect x="553.5" y="250.0" width="7.0" height="2.0" fill="#d8d8d8" opacity="0.6"/>
<rect x="555.0" y="253.2" width="4.0" height="1.5" fill="#d8d8d8" opacity="0.5"/>
<path d="M555.0 263.0 L557.5 258.5 L556.0 259.5 L559.0 255.0" stroke="#f01414" stroke-width="1.6" fill="none"/>
<rect x="514.0" y="309.0" width="5.0" height="4.0" fill="#20d020"/>
<rect x="565.0" y="309.0" width="5.0" height="4.0" fill="#20d020"/>
<line x1="510.0" y1="313.5" x2="580.0" y2="313.5" stroke="#1aa6b4" stroke-width="1.3" />
<line x1="587.0" y1="219.0" x2="587.0" y2="312.0" stroke="#14b814" stroke-width="1.5" />
<line x1="590.0" y1="219.0" x2="590.0" y2="312.0" stroke="#14b814" stroke-width="1.5" />
<line x1="584.0" y1="215.0" x2="584.0" y2="314.0" stroke="#f01414" stroke-width="1" />
<line x1="600.0" y1="215.0" x2="600.0" y2="314.0" stroke="#f01414" stroke-width="1" />
<line x1="597.0" y1="219.0" x2="597.0" y2="312.0" stroke="#f01414" stroke-width="1" />
<line x1="582.0" y1="219.0" x2="602.0" y2="219.0" stroke="#f01414" stroke-width="1.5" />
<line x1="582.0" y1="312.0" x2="602.0" y2="312.0" stroke="#f01414" stroke-width="1.5" />
<rect x="600.2" y="263.0" width="1.6" height="5.0" fill="#d8d8d8" opacity="0.6"/>
<rect x="587.0" y="309.0" width="6.0" height="5.0" fill="#20d020"/>
<line x1="582.0" y1="313.5" x2="604.0" y2="313.5" stroke="#1aa6b4" stroke-width="1.3" />
<text x="544.0" y="320.6" font-size="5.60" fill="#f0f000" stroke="#f0f000" stroke-width="0.45" text-anchor="middle" font-family="Liberation Sans" font-weight="bold" textLength="32.0" lengthAdjust="spacingAndGlyphs">PINTU P4 = 14 UNIT</text>
<rect x="528.0" y="321.2" width="32.0" height="1.0" fill="#f0f000"/>
<text x="544.0" y="325.6" font-size="4.8" fill="#f0f000" stroke="#f0f000" stroke-width="0.35" text-anchor="middle" font-family="Liberation Sans" font-weight="bold" textLength="17.6" lengthAdjust="spacingAndGlyphs">(KAYU & PANEL)</text>
<rect x="630.0" y="219.0" width="35.6" height="93.5" stroke="#14b814" stroke-width="2.6" fill="none"/>
<rect x="628.5" y="217.5" width="38.6" height="96.5" stroke="#f01414" stroke-width="0.8" fill="none" opacity="0.8"/>
<line x1="630.0" y1="235.0" x2="665.6" y2="235.0" stroke="#14b814" stroke-width="2.6" />
<rect x="627.0" y="217.0" width="42.0" height="97.0" stroke="#f01414" stroke-width="1.2" fill="none" />
<line x1="627.0" y1="210.0" x2="669.0" y2="210.0" stroke="#f01414" stroke-width="1" />
<line x1="627.0" y1="214.5" x2="669.0" y2="214.5" stroke="#f01414" stroke-width="1.2" />
<line x1="627.0" y1="208.0" x2="627.0" y2="218.0" stroke="#f01414" stroke-width="1" />
<path d="M624.5 213.0 L629.5 216.0" stroke="#f01414" stroke-width="1.5"/>
<line x1="634.0" y1="208.0" x2="634.0" y2="218.0" stroke="#f01414" stroke-width="1" />
<path d="M631.5 213.0 L636.5 216.0" stroke="#f01414" stroke-width="1.5"/>
<line x1="662.0" y1="208.0" x2="662.0" y2="218.0" stroke="#f01414" stroke-width="1" />
<path d="M659.5 213.0 L664.5 216.0" stroke="#f01414" stroke-width="1.5"/>
<line x1="669.0" y1="208.0" x2="669.0" y2="218.0" stroke="#f01414" stroke-width="1" />
<path d="M666.5 213.0 L671.5 216.0" stroke="#f01414" stroke-width="1.5"/>
<rect x="629.0" y="211.2" width="3.0" height="1.6" fill="#d8d8d8" opacity="0.6"/>
<rect x="646.5" y="211.2" width="3.0" height="1.6" fill="#d8d8d8" opacity="0.6"/>
<rect x="664.0" y="211.2" width="3.0" height="1.6" fill="#d8d8d8" opacity="0.6"/>
<rect x="646.0" y="206.7" width="4.0" height="1.6" fill="#d8d8d8" opacity="0.6"/>
<line x1="627.0" y1="211.0" x2="669.0" y2="211.0" stroke="#f01414" stroke-width="1" />
<line x1="619.0" y1="219.0" x2="619.0" y2="312.0" stroke="#f01414" stroke-width="1" />
<line x1="624.0" y1="219.0" x2="624.0" y2="312.0" stroke="#f01414" stroke-width="1" />
<line x1="617.0" y1="219.0" x2="633.0" y2="219.0" stroke="#f01414" stroke-width="1" />
<line x1="617.0" y1="227.0" x2="633.0" y2="227.0" stroke="#f01414" stroke-width="1" />
<line x1="617.0" y1="235.0" x2="633.0" y2="235.0" stroke="#f01414" stroke-width="1" />
<line x1="617.0" y1="312.0" x2="633.0" y2="312.0" stroke="#f01414" stroke-width="1" />
<rect x="615.7" y="263.0" width="1.6" height="5.0" fill="#d8d8d8" opacity="0.6"/>
<rect x="620.7" y="263.0" width="1.6" height="5.0" fill="#d8d8d8" opacity="0.6"/>
<rect x="636.0" y="239.0" width="24.0" height="32.0" stroke="#14b814" stroke-width="1.8" fill="none" />
<rect x="636.0" y="275.0" width="24.0" height="33.0" stroke="#f01414" stroke-width="2" fill="none" />
<rect x="638.0" y="277.0" width="20.0" height="29.0" stroke="#f01414" stroke-width="1" fill="none" />
<rect x="644.5" y="222.0" width="7.0" height="2.0" fill="#d8d8d8" opacity="0.6"/>
<path d="M646.0 234.0 L648.5 229.5 L647.0 230.5 L650.0 226.0" stroke="#f01414" stroke-width="1.6" fill="none"/>
<rect x="644.5" y="250.0" width="7.0" height="2.0" fill="#d8d8d8" opacity="0.6"/>
<path d="M646.0 263.0 L648.5 258.5 L647.0 259.5 L650.0 255.0" stroke="#f01414" stroke-width="1.6" fill="none"/>
<rect x="631.0" y="309.0" width="5.0" height="4.0" fill="#20d020"/>
<rect x="660.0" y="309.0" width="5.0" height="4.0" fill="#20d020"/>
<line x1="626.0" y1="313.5" x2="672.0" y2="313.5" stroke="#1aa6b4" stroke-width="1.3" />
<line x1="676.0" y1="219.0" x2="676.0" y2="312.0" stroke="#14b814" stroke-width="1.5" />
<line x1="679.0" y1="219.0" x2="679.0" y2="312.0" stroke="#14b814" stroke-width="1.5" />
<line x1="673.0" y1="215.0" x2="673.0" y2="314.0" stroke="#f01414" stroke-width="1" />
<line x1="692.0" y1="215.0" x2="692.0" y2="314.0" stroke="#f01414" stroke-width="1" />
<line x1="689.0" y1="219.0" x2="689.0" y2="312.0" stroke="#f01414" stroke-width="1" />
<line x1="671.0" y1="219.0" x2="694.0" y2="219.0" stroke="#f01414" stroke-width="1.5" />
<line x1="671.0" y1="312.0" x2="694.0" y2="312.0" stroke="#f01414" stroke-width="1.5" />
<rect x="692.2" y="263.0" width="1.6" height="5.0" fill="#d8d8d8" opacity="0.6"/>
<rect x="676.0" y="309.0" width="6.0" height="5.0" fill="#20d020"/>
<line x1="685.0" y1="316.0" x2="697.0" y2="316.0" stroke="#1aa6b4" stroke-width="1.3" />
<path d="M692 226 L695 236 L697 228" stroke="#f01414" stroke-width="1.5" fill="none"/>
<text x="649.0" y="320.6" font-size="5.60" fill="#f0f000" stroke="#f0f000" stroke-width="0.45" text-anchor="middle" font-family="Liberation Sans" font-weight="bold" textLength="32.0" lengthAdjust="spacingAndGlyphs">JENDELA JB = 2 UNIT</text>
<rect x="633.0" y="321.2" width="32.0" height="1.0" fill="#f0f000"/>
<text x="649.0" y="325.6" font-size="4.8" fill="#f0f000" stroke="#f0f000" stroke-width="0.35" text-anchor="middle" font-family="Liberation Sans" font-weight="bold" textLength="17.6" lengthAdjust="spacingAndGlyphs">(ALUMINIUM)</text>
<rect x="428.0" y="349.6" width="78.6" height="81.4" stroke="#14b814" stroke-width="2.6" fill="none"/>
<rect x="426.5" y="348.1" width="81.6" height="84.4" stroke="#f01414" stroke-width="0.8" fill="none" opacity="0.8"/>
<line x1="467.0" y1="349.6" x2="467.0" y2="431.0" stroke="#14b814" stroke-width="2.6" />
<rect x="425.5" y="347.0" width="84.0" height="86.0" stroke="#f01414" stroke-width="1.2" fill="none" />
<line x1="425.0" y1="340.0" x2="509.0" y2="340.0" stroke="#f01414" stroke-width="1" />
<line x1="425.0" y1="344.5" x2="509.0" y2="344.5" stroke="#f01414" stroke-width="1.2" />
<line x1="425.0" y1="338.0" x2="425.0" y2="348.0" stroke="#f01414" stroke-width="1" />
<path d="M422.5 343.0 L427.5 346.0" stroke="#f01414" stroke-width="1.5"/>
<line x1="467.0" y1="338.0" x2="467.0" y2="348.0" stroke="#f01414" stroke-width="1" />
<path d="M464.5 343.0 L469.5 346.0" stroke="#f01414" stroke-width="1.5"/>
<line x1="509.0" y1="338.0" x2="509.0" y2="348.0" stroke="#f01414" stroke-width="1" />
<path d="M506.5 343.0 L511.5 346.0" stroke="#f01414" stroke-width="1.5"/>
<rect x="444.5" y="341.2" width="3.0" height="1.6" fill="#d8d8d8" opacity="0.6"/>
<rect x="486.5" y="341.2" width="3.0" height="1.6" fill="#d8d8d8" opacity="0.6"/>
<rect x="465.0" y="336.7" width="4.0" height="1.6" fill="#d8d8d8" opacity="0.6"/>
<line x1="425.0" y1="340.0" x2="509.0" y2="340.0" stroke="#f01414" stroke-width="1" />
<line x1="420.0" y1="349.0" x2="420.0" y2="431.0" stroke="#f01414" stroke-width="1" />
<line x1="425.0" y1="349.0" x2="425.0" y2="431.0" stroke="#f01414" stroke-width="1" />
<line x1="418.0" y1="349.0" x2="434.0" y2="349.0" stroke="#f01414" stroke-width="1" />
<line x1="418.0" y1="431.0" x2="434.0" y2="431.0" stroke="#f01414" stroke-width="1" />
<rect x="416.7" y="387.5" width="1.6" height="5.0" fill="#d8d8d8" opacity="0.6"/>
<rect x="421.7" y="387.5" width="1.6" height="5.0" fill="#d8d8d8" opacity="0.6"/>
<line x1="424.0" y1="433.0" x2="514.0" y2="433.0" stroke="#1aa6b4" stroke-width="1.3" />
<text x="467.0" y="438.6" font-size="5.60" fill="#f0f000" stroke="#f0f000" stroke-width="0.45" text-anchor="middle" font-family="Liberation Sans" font-weight="bold" textLength="36.0" lengthAdjust="spacingAndGlyphs">KUSEN PINTU P2a = 2 UNIT</text>
<rect x="449.0" y="439.2" width="36.0" height="1.0" fill="#f0f000"/>
<text x="467.0" y="443.6" font-size="4.8" fill="#f0f000" stroke="#f0f000" stroke-width="0.35" text-anchor="middle" font-family="Liberation Sans" font-weight="bold" textLength="19.8" lengthAdjust="spacingAndGlyphs">(KAYU)</text>
<line x1="521.0" y1="349.0" x2="521.0" y2="431.0" stroke="#14b814" stroke-width="1.5" />
<line x1="524.0" y1="349.0" x2="524.0" y2="431.0" stroke="#14b814" stroke-width="1.5" />
<line x1="518.0" y1="345.0" x2="518.0" y2="433.0" stroke="#f01414" stroke-width="1" />
<line x1="531.0" y1="345.0" x2="531.0" y2="433.0" stroke="#f01414" stroke-width="1" />
<line x1="528.0" y1="349.0" x2="528.0" y2="431.0" stroke="#f01414" stroke-width="1" />
<line x1="516.0" y1="349.0" x2="533.0" y2="349.0" stroke="#f01414" stroke-width="1.5" />
<line x1="516.0" y1="431.0" x2="533.0" y2="431.0" stroke="#f01414" stroke-width="1.5" />
<rect x="531.2" y="387.5" width="1.6" height="5.0" fill="#d8d8d8" opacity="0.6"/>
<rect x="545.5" y="349.6" width="42.5" height="81.5" stroke="#14b814" stroke-width="2" fill="none" />
<rect x="543.0" y="347.0" width="47.0" height="86.0" stroke="#f01414" stroke-width="1.2" fill="none" />
<line x1="585.0" y1="349.0" x2="585.0" y2="431.0" stroke="#14b814" stroke-width="3" />
<rect x="548.0" y="355.0" width="14.0" height="33.0" stroke="#f01414" stroke-width="2" fill="none" />
<rect x="564.0" y="355.0" width="12.0" height="33.0" stroke="#f01414" stroke-width="2" fill="none" />
<rect x="548.0" y="393.0" width="28.0" height="35.0" stroke="#f01414" stroke-width="2" fill="none" />
<rect x="558.5" y="407.0" width="7.0" height="2.0" fill="#d8d8d8" opacity="0.6"/>
<rect x="559.5" y="410.2" width="5.0" height="1.5" fill="#d8d8d8" opacity="0.5"/>
<line x1="543.0" y1="340.0" x2="590.0" y2="340.0" stroke="#f01414" stroke-width="1" />
<line x1="543.0" y1="344.5" x2="590.0" y2="344.5" stroke="#f01414" stroke-width="1.2" />
<line x1="543.0" y1="338.0" x2="543.0" y2="348.0" stroke="#f01414" stroke-width="1" />
<path d="M540.5 343.0 L545.5 346.0" stroke="#f01414" stroke-width="1.5"/>
<line x1="560.0" y1="338.0" x2="560.0" y2="348.0" stroke="#f01414" stroke-width="1" />
<path d="M557.5 343.0 L562.5 346.0" stroke="#f01414" stroke-width="1.5"/>
<line x1="585.0" y1="338.0" x2="585.0" y2="348.0" stroke="#f01414" stroke-width="1" />
<path d="M582.5 343.0 L587.5 346.0" stroke="#f01414" stroke-width="1.5"/>
<line x1="590.0" y1="338.0" x2="590.0" y2="348.0" stroke="#f01414" stroke-width="1" />
<path d="M587.5 343.0 L592.5 346.0" stroke="#f01414" stroke-width="1.5"/>
<rect x="550.0" y="341.2" width="3.0" height="1.6" fill="#d8d8d8" opacity="0.6"/>
<rect x="571.0" y="341.2" width="3.0" height="1.6" fill="#d8d8d8" opacity="0.6"/>
<rect x="586.0" y="341.2" width="3.0" height="1.6" fill="#d8d8d8" opacity="0.6"/>
<rect x="564.5" y="336.7" width="4.0" height="1.6" fill="#d8d8d8" opacity="0.6"/>
<rect x="545.0" y="333.0" width="42.0" height="4.0" stroke="#14b814" stroke-width="1.5" fill="none" />
<line x1="545.0" y1="335.0" x2="590.0" y2="335.0" stroke="#f01414" stroke-width="1" />
<line x1="580.0" y1="331.0" x2="580.0" y2="340.0" stroke="#f01414" stroke-width="1" />
<line x1="539.0" y1="345.0" x2="539.0" y2="433.0" stroke="#f01414" stroke-width="1" />
<rect x="582.0" y="428.0" width="6.0" height="5.0" fill="#20d020"/>
<line x1="541.0" y1="433.0" x2="593.0" y2="433.0" stroke="#1aa6b4" stroke-width="1.3" />
<text x="567.0" y="438.6" font-size="5.60" fill="#f0f000" stroke="#f0f000" stroke-width="0.45" text-anchor="middle" font-family="Liberation Sans" font-weight="bold" textLength="42.0" lengthAdjust="spacingAndGlyphs">PINTU GESER P1 = 1 UNIT</text>
<rect x="546.0" y="439.2" width="42.0" height="1.0" fill="#f0f000"/>
<text x="567.0" y="443.6" font-size="4.8" fill="#f0f000" stroke="#f0f000" stroke-width="0.35" text-anchor="middle" font-family="Liberation Sans" font-weight="bold" textLength="23.1" lengthAdjust="spacingAndGlyphs">(PVC)</text>
<line x1="598.0" y1="349.0" x2="598.0" y2="431.0" stroke="#14b814" stroke-width="1.5" />
<line x1="601.0" y1="349.0" x2="601.0" y2="431.0" stroke="#14b814" stroke-width="1.5" />
<line x1="595.0" y1="345.0" x2="595.0" y2="433.0" stroke="#f01414" stroke-width="1" />
<line x1="612.6" y1="345.0" x2="612.6" y2="433.0" stroke="#f01414" stroke-width="1" />
<line x1="609.6" y1="349.0" x2="609.6" y2="431.0" stroke="#f01414" stroke-width="1" />
<line x1="593.0" y1="349.0" x2="614.6" y2="349.0" stroke="#f01414" stroke-width="1.5" />
<line x1="593.0" y1="431.0" x2="614.6" y2="431.0" stroke="#f01414" stroke-width="1.5" />
<rect x="612.8" y="387.5" width="1.6" height="5.0" fill="#d8d8d8" opacity="0.6"/>
<rect x="603.0" y="428.0" width="6.0" height="5.0" fill="#20d020"/>
<rect x="640.4" y="349.6" width="25.2" height="81.5" stroke="#14b814" stroke-width="2" fill="none" />
<rect x="637.5" y="347.0" width="31.0" height="86.0" stroke="#f01414" stroke-width="1.2" fill="none" />
<rect x="642.0" y="352.0" width="22.0" height="76.0" stroke="#1414c8" stroke-width="1.5" fill="none" stroke-dasharray="2 1.5"/>
<rect x="645.5" y="356.0" width="16.0" height="68.0" stroke="#1414c8" stroke-width="1.3" fill="none" stroke-dasharray="2 1.5"/>
<path d="M648 360 L648 385 L650 392 L650 421" stroke="#f01414" stroke-width="1.1" fill="none"/>
<path d="M651 360 L651 385 L653 392 L653 421" stroke="#f01414" stroke-width="1.1" fill="none"/>
<path d="M654 360 L654 385 L656 392 L656 421" stroke="#f01414" stroke-width="1.1" fill="none"/>
<path d="M657 360 L657 385 L659 392 L659 421" stroke="#f01414" stroke-width="1.1" fill="none"/>
<rect x="649.0" y="393.0" width="6.0" height="2.0" fill="#d8d8d8" opacity="0.6"/>
<rect x="647.0" y="396.0" width="10.0" height="2.0" fill="#d8d8d8" opacity="0.6"/>
<line x1="637.5" y1="340.0" x2="668.5" y2="340.0" stroke="#f01414" stroke-width="1" />
<line x1="637.5" y1="344.5" x2="668.5" y2="344.5" stroke="#f01414" stroke-width="1.2" />
<line x1="637.5" y1="338.0" x2="637.5" y2="348.0" stroke="#f01414" stroke-width="1" />
<path d="M635.0 343.0 L640.0 346.0" stroke="#f01414" stroke-width="1.5"/>
<line x1="652.0" y1="338.0" x2="652.0" y2="348.0" stroke="#f01414" stroke-width="1" />
<path d="M649.5 343.0 L654.5 346.0" stroke="#f01414" stroke-width="1.5"/>
<line x1="668.5" y1="338.0" x2="668.5" y2="348.0" stroke="#f01414" stroke-width="1" />
<path d="M666.0 343.0 L671.0 346.0" stroke="#f01414" stroke-width="1.5"/>
<rect x="643.2" y="341.2" width="3.0" height="1.6" fill="#d8d8d8" opacity="0.6"/>
<rect x="658.8" y="341.2" width="3.0" height="1.6" fill="#d8d8d8" opacity="0.6"/>
<rect x="651.0" y="336.7" width="4.0" height="1.6" fill="#d8d8d8" opacity="0.6"/>
<rect x="636.0" y="331.0" width="31.0" height="9.0" stroke="#f01414" stroke-width="1.2" fill="none" />
<line x1="640.0" y1="336.0" x2="664.0" y2="336.0" stroke="#14b814" stroke-width="1.2" />
<line x1="633.0" y1="349.0" x2="633.0" y2="431.0" stroke="#f01414" stroke-width="1" />
<line x1="638.0" y1="349.0" x2="638.0" y2="431.0" stroke="#f01414" stroke-width="1" />
<line x1="631.0" y1="349.0" x2="647.0" y2="349.0" stroke="#f01414" stroke-width="1" />
<line x1="631.0" y1="431.0" x2="647.0" y2="431.0" stroke="#f01414" stroke-width="1" />
<rect x="629.7" y="387.5" width="1.6" height="5.0" fill="#d8d8d8" opacity="0.6"/>
<rect x="634.7" y="387.5" width="1.6" height="5.0" fill="#d8d8d8" opacity="0.6"/>
<line x1="629.0" y1="433.0" x2="676.0" y2="433.0" stroke="#1aa6b4" stroke-width="1.3" />
<text x="653.0" y="438.6" font-size="5.60" fill="#f0f000" stroke="#f0f000" stroke-width="0.45" text-anchor="middle" font-family="Liberation Sans" font-weight="bold" textLength="32.0" lengthAdjust="spacingAndGlyphs">JENDELA J2 = 14 UNIT</text>
<rect x="637.0" y="439.2" width="32.0" height="1.0" fill="#f0f000"/>
<text x="653.0" y="443.6" font-size="4.8" fill="#f0f000" stroke="#f0f000" stroke-width="0.35" text-anchor="middle" font-family="Liberation Sans" font-weight="bold" textLength="17.6" lengthAdjust="spacingAndGlyphs">(KAYU & PANEL)</text>
<line x1="684.5" y1="349.0" x2="684.5" y2="431.0" stroke="#14b814" stroke-width="1.5" />
<line x1="687.5" y1="349.0" x2="687.5" y2="431.0" stroke="#14b814" stroke-width="1.5" />
<line x1="681.5" y1="345.0" x2="681.5" y2="433.0" stroke="#f01414" stroke-width="1" />
<line x1="697.0" y1="345.0" x2="697.0" y2="433.0" stroke="#f01414" stroke-width="1" />
<line x1="694.0" y1="349.0" x2="694.0" y2="431.0" stroke="#f01414" stroke-width="1" />
<line x1="679.5" y1="349.0" x2="699.0" y2="349.0" stroke="#f01414" stroke-width="1.5" />
<line x1="679.5" y1="431.0" x2="699.0" y2="431.0" stroke="#f01414" stroke-width="1.5" />
<rect x="697.2" y="387.5" width="1.6" height="5.0" fill="#d8d8d8" opacity="0.6"/>
<rect x="688.0" y="428.0" width="6.0" height="5.0" fill="#20d020"/>
<line x1="680.0" y1="433.0" x2="700.0" y2="433.0" stroke="#1aa6b4" stroke-width="1.3" />
<rect x="795.5" y="189.5" width="389.0" height="274.0" stroke="#6e3a3a" stroke-width="1" fill="none" />
<rect x="804.5" y="198.0" width="370.5" height="256.0" stroke="#1414c8" stroke-width="2" fill="none"/>
<line x1="1110.0" y1="198.0" x2="1110.0" y2="454.0" stroke="#1414c8" stroke-width="2" />
<line x1="1110.0" y1="435.0" x2="1175.0" y2="435.0" stroke="#1414c8" stroke-width="2" />
<text x="1121.0" y="447.5" font-size="5.4" fill="#f0f000" stroke="#f0f000" stroke-width="0.4" font-family="Liberation Sans" font-weight="bold" textLength="42" lengthAdjust="spacingAndGlyphs">DETAIL PINTU DAN JENDELA</text>
<rect x="848.0" y="218.0" width="212.0" height="127.0" stroke="#14b814" stroke-width="2.9" fill="none"/>
<rect x="846.5" y="216.5" width="215.0" height="130.0" stroke="#f01414" stroke-width="0.8" fill="none" opacity="0.8"/>
<line x1="902.0" y1="218.0" x2="902.0" y2="345.0" stroke="#14b814" stroke-width="2.9" />
<line x1="954.0" y1="218.0" x2="954.0" y2="345.0" stroke="#14b814" stroke-width="2.9" />
<line x1="1006.0" y1="218.0" x2="1006.0" y2="345.0" stroke="#14b814" stroke-width="2.9" />
<line x1="848.0" y1="209.0" x2="1060.0" y2="209.0" stroke="#f01414" stroke-width="1" />
<line x1="848.0" y1="213.5" x2="1060.0" y2="213.5" stroke="#f01414" stroke-width="1.2" />
<line x1="848.0" y1="207.0" x2="848.0" y2="217.0" stroke="#f01414" stroke-width="1" />
<path d="M845.5 212.0 L850.5 215.0" stroke="#f01414" stroke-width="1.5"/>
<line x1="902.0" y1="207.0" x2="902.0" y2="217.0" stroke="#f01414" stroke-width="1" />
<path d="M899.5 212.0 L904.5 215.0" stroke="#f01414" stroke-width="1.5"/>
<line x1="954.0" y1="207.0" x2="954.0" y2="217.0" stroke="#f01414" stroke-width="1" />
<path d="M951.5 212.0 L956.5 215.0" stroke="#f01414" stroke-width="1.5"/>
<line x1="1006.0" y1="207.0" x2="1006.0" y2="217.0" stroke="#f01414" stroke-width="1" />
<path d="M1003.5 212.0 L1008.5 215.0" stroke="#f01414" stroke-width="1.5"/>
<line x1="1060.0" y1="207.0" x2="1060.0" y2="217.0" stroke="#f01414" stroke-width="1" />
<path d="M1057.5 212.0 L1062.5 215.0" stroke="#f01414" stroke-width="1.5"/>
<rect x="873.5" y="210.2" width="3.0" height="1.6" fill="#d8d8d8" opacity="0.6"/>
<rect x="926.5" y="210.2" width="3.0" height="1.6" fill="#d8d8d8" opacity="0.6"/>
<rect x="978.5" y="210.2" width="3.0" height="1.6" fill="#d8d8d8" opacity="0.6"/>
<rect x="1031.5" y="210.2" width="3.0" height="1.6" fill="#d8d8d8" opacity="0.6"/>
<rect x="952.0" y="205.7" width="4.0" height="1.6" fill="#d8d8d8" opacity="0.6"/>
<line x1="840.0" y1="218.0" x2="840.0" y2="345.0" stroke="#f01414" stroke-width="1" />
<line x1="845.0" y1="218.0" x2="845.0" y2="345.0" stroke="#f01414" stroke-width="1" />
<line x1="838.0" y1="218.0" x2="854.0" y2="218.0" stroke="#f01414" stroke-width="1" />
<line x1="838.0" y1="345.0" x2="854.0" y2="345.0" stroke="#f01414" stroke-width="1" />
<rect x="836.7" y="279.0" width="1.6" height="5.0" fill="#d8d8d8" opacity="0.6"/>
<rect x="841.7" y="279.0" width="1.6" height="5.0" fill="#d8d8d8" opacity="0.6"/>
<line x1="844.0" y1="348.0" x2="1064.0" y2="348.0" stroke="#1aa6b4" stroke-width="1.3" />
<rect x="870.5" y="273.4" width="9.0" height="2.2" fill="#d8d8d8" opacity="0.6"/>
<rect x="872.5" y="276.6" width="5.0" height="1.8" fill="#d8d8d8" opacity="0.55"/>
<path d="M873.0 289.5 L875.5 285.0 L874.0 286.0 L877.0 281.5" stroke="#f01414" stroke-width="1.6" fill="none"/>
<rect x="923.5" y="273.4" width="9.0" height="2.2" fill="#d8d8d8" opacity="0.6"/>
<rect x="925.5" y="276.6" width="5.0" height="1.8" fill="#d8d8d8" opacity="0.55"/>
<path d="M926.0 289.5 L928.5 285.0 L927.0 286.0 L930.0 281.5" stroke="#f01414" stroke-width="1.6" fill="none"/>
<rect x="975.5" y="273.4" width="9.0" height="2.2" fill="#d8d8d8" opacity="0.6"/>
<rect x="977.5" y="276.6" width="5.0" height="1.8" fill="#d8d8d8" opacity="0.55"/>
<path d="M978.0 289.5 L980.5 285.0 L979.0 286.0 L982.0 281.5" stroke="#f01414" stroke-width="1.6" fill="none"/>
<rect x="1028.5" y="273.4" width="9.0" height="2.2" fill="#d8d8d8" opacity="0.6"/>
<rect x="1030.5" y="276.6" width="5.0" height="1.8" fill="#d8d8d8" opacity="0.55"/>
<path d="M1031.0 289.5 L1033.5 285.0 L1032.0 286.0 L1035.0 281.5" stroke="#f01414" stroke-width="1.6" fill="none"/>
<line x1="845.0" y1="218.0" x2="1063.0" y2="218.0" stroke="#f01414" stroke-width="1.5" />
<rect x="804.5" y="442.5" width="1.0" height="1.0" fill="#d8d8d8" opacity="0"/>
<line x1="1070.0" y1="218.0" x2="1070.0" y2="345.0" stroke="#14b814" stroke-width="1.5" />
<line x1="1073.0" y1="218.0" x2="1073.0" y2="345.0" stroke="#14b814" stroke-width="1.5" />
<line x1="1067.0" y1="214.0" x2="1067.0" y2="347.0" stroke="#f01414" stroke-width="1" />
<line x1="1077.0" y1="214.0" x2="1077.0" y2="347.0" stroke="#f01414" stroke-width="1" />
<line x1="1074.0" y1="218.0" x2="1074.0" y2="345.0" stroke="#f01414" stroke-width="1" />
<line x1="1065.0" y1="218.0" x2="1079.0" y2="218.0" stroke="#f01414" stroke-width="1.5" />
<line x1="1065.0" y1="345.0" x2="1079.0" y2="345.0" stroke="#f01414" stroke-width="1.5" />
<rect x="1077.2" y="279.0" width="1.6" height="5.0" fill="#d8d8d8" opacity="0.6"/>
<path d="M1090 226 L1093 234 L1095 228" stroke="#f01414" stroke-width="1.5" fill="none"/>
<line x1="1085.0" y1="315.0" x2="1097.0" y2="315.0" stroke="#1aa6b4" stroke-width="1.3" />
<rect x="820.0" y="343.5" width="10.0" height="3.0" fill="#d8d8d8" opacity="0.5"/>
<line x1="815.0" y1="345.0" x2="848.0" y2="345.0" stroke="#f01414" stroke-width="1" />
<text x="955.0" y="356.6" font-size="5.60" fill="#f0f000" stroke="#f0f000" stroke-width="0.45" text-anchor="middle" font-family="Liberation Sans" font-weight="bold" textLength="37.0" lengthAdjust="spacingAndGlyphs">PINTU P4 = 14 UNIT</text>
<rect x="936.5" y="357.2" width="37.0" height="1.0" fill="#f0f000"/>
<text x="955.0" y="361.6" font-size="4.8" fill="#f0f000" stroke="#f0f000" stroke-width="0.35" text-anchor="middle" font-family="Liberation Sans" font-weight="bold" textLength="20.4" lengthAdjust="spacingAndGlyphs">(ALUMINIUM)</text>
<rect x="848.0" y="361.0" width="22.6" height="63.0" stroke="#14b814" stroke-width="2.8" fill="none"/>
<rect x="846.5" y="359.5" width="25.6" height="66.0" stroke="#f01414" stroke-width="0.8" fill="none" opacity="0.8"/>
<line x1="848.0" y1="352.0" x2="870.6" y2="352.0" stroke="#f01414" stroke-width="1" />
<line x1="848.0" y1="356.5" x2="870.6" y2="356.5" stroke="#f01414" stroke-width="1.2" />
<line x1="848.0" y1="350.0" x2="848.0" y2="360.0" stroke="#f01414" stroke-width="1" />
<path d="M845.5 355.0 L850.5 358.0" stroke="#f01414" stroke-width="1.5"/>
<line x1="870.6" y1="350.0" x2="870.6" y2="360.0" stroke="#f01414" stroke-width="1" />
<path d="M868.1 355.0 L873.1 358.0" stroke="#f01414" stroke-width="1.5"/>
<rect x="857.8" y="353.2" width="3.0" height="1.6" fill="#d8d8d8" opacity="0.6"/>
<rect x="857.3" y="348.7" width="4.0" height="1.6" fill="#d8d8d8" opacity="0.6"/>
<line x1="839.0" y1="361.0" x2="839.0" y2="424.0" stroke="#f01414" stroke-width="1" />
<line x1="844.0" y1="361.0" x2="844.0" y2="424.0" stroke="#f01414" stroke-width="1" />
<line x1="837.0" y1="361.0" x2="853.0" y2="361.0" stroke="#f01414" stroke-width="1" />
<line x1="837.0" y1="424.0" x2="853.0" y2="424.0" stroke="#f01414" stroke-width="1" />
<rect x="835.7" y="390.0" width="1.6" height="5.0" fill="#d8d8d8" opacity="0.6"/>
<rect x="840.7" y="390.0" width="1.6" height="5.0" fill="#d8d8d8" opacity="0.6"/>
<line x1="844.0" y1="427.0" x2="874.6" y2="427.0" stroke="#1aa6b4" stroke-width="1.3" />
<rect x="854.8" y="384.4" width="9.0" height="2.2" fill="#d8d8d8" opacity="0.6"/>
<rect x="856.8" y="387.6" width="5.0" height="1.8" fill="#d8d8d8" opacity="0.55"/>
<path d="M857.3 400.5 L859.8 396.0 L858.3 397.0 L861.3 392.5" stroke="#f01414" stroke-width="1.6" fill="none"/>
<line x1="881.0" y1="361.0" x2="881.0" y2="424.0" stroke="#14b814" stroke-width="1.5" />
<line x1="884.0" y1="361.0" x2="884.0" y2="424.0" stroke="#14b814" stroke-width="1.5" />
<line x1="878.0" y1="357.0" x2="878.0" y2="426.0" stroke="#f01414" stroke-width="1" />
<line x1="887.0" y1="357.0" x2="887.0" y2="426.0" stroke="#f01414" stroke-width="1" />
<line x1="884.0" y1="361.0" x2="884.0" y2="424.0" stroke="#f01414" stroke-width="1" />
<line x1="876.0" y1="361.0" x2="889.0" y2="361.0" stroke="#f01414" stroke-width="1.5" />
<line x1="876.0" y1="424.0" x2="889.0" y2="424.0" stroke="#f01414" stroke-width="1.5" />
<rect x="887.2" y="390.0" width="1.6" height="5.0" fill="#d8d8d8" opacity="0.6"/>
<text x="860.0" y="444.6" font-size="5.60" fill="#f0f000" stroke="#f0f000" stroke-width="0.45" text-anchor="middle" font-family="Liberation Sans" font-weight="bold" textLength="35.0" lengthAdjust="spacingAndGlyphs">JENDELA JB = 2 UNIT</text>
<rect x="842.5" y="445.2" width="35.0" height="1.0" fill="#f0f000"/>
<text x="860.0" y="449.6" font-size="4.8" fill="#f0f000" stroke="#f0f000" stroke-width="0.35" text-anchor="middle" font-family="Liberation Sans" font-weight="bold" textLength="19.2" lengthAdjust="spacingAndGlyphs">(KAYU)</text>
<rect x="916.5" y="378.0" width="21.5" height="21.0" stroke="#14b814" stroke-width="2.8" fill="none"/>
<rect x="915.0" y="376.5" width="24.5" height="24.0" stroke="#f01414" stroke-width="0.8" fill="none" opacity="0.8"/>
<line x1="916.5" y1="369.0" x2="938.0" y2="369.0" stroke="#f01414" stroke-width="1" />
<line x1="916.5" y1="373.5" x2="938.0" y2="373.5" stroke="#f01414" stroke-width="1.2" />
<line x1="916.5" y1="367.0" x2="916.5" y2="377.0" stroke="#f01414" stroke-width="1" />
<path d="M914.0 372.0 L919.0 375.0" stroke="#f01414" stroke-width="1.5"/>
<line x1="938.0" y1="367.0" x2="938.0" y2="377.0" stroke="#f01414" stroke-width="1" />
<path d="M935.5 372.0 L940.5 375.0" stroke="#f01414" stroke-width="1.5"/>
<rect x="925.8" y="370.2" width="3.0" height="1.6" fill="#d8d8d8" opacity="0.6"/>
<rect x="925.2" y="365.7" width="4.0" height="1.6" fill="#d8d8d8" opacity="0.6"/>
<line x1="899.5" y1="378.0" x2="899.5" y2="399.0" stroke="#f01414" stroke-width="1" />
<line x1="904.5" y1="378.0" x2="904.5" y2="399.0" stroke="#f01414" stroke-width="1" />
<line x1="897.5" y1="378.0" x2="913.5" y2="378.0" stroke="#f01414" stroke-width="1" />
<line x1="897.5" y1="399.0" x2="913.5" y2="399.0" stroke="#f01414" stroke-width="1" />
<rect x="896.2" y="386.0" width="1.6" height="5.0" fill="#d8d8d8" opacity="0.6"/>
<rect x="901.2" y="386.0" width="1.6" height="5.0" fill="#d8d8d8" opacity="0.6"/>
<rect x="922.8" y="380.4" width="9.0" height="2.2" fill="#d8d8d8" opacity="0.6"/>
<rect x="924.8" y="383.6" width="5.0" height="1.8" fill="#d8d8d8" opacity="0.55"/>
<path d="M925.2 396.5 L927.8 392.0 L926.2 393.0 L929.2 388.5" stroke="#f01414" stroke-width="1.6" fill="none"/>
<line x1="949.0" y1="378.0" x2="949.0" y2="399.0" stroke="#14b814" stroke-width="1.5" />
<line x1="952.0" y1="378.0" x2="952.0" y2="399.0" stroke="#14b814" stroke-width="1.5" />
<line x1="946.0" y1="374.0" x2="946.0" y2="401.0" stroke="#f01414" stroke-width="1" />
<line x1="952.5" y1="374.0" x2="952.5" y2="401.0" stroke="#f01414" stroke-width="1" />
<line x1="949.5" y1="378.0" x2="949.5" y2="399.0" stroke="#f01414" stroke-width="1" />
<line x1="944.0" y1="378.0" x2="954.5" y2="378.0" stroke="#f01414" stroke-width="1.5" />
<line x1="944.0" y1="399.0" x2="954.5" y2="399.0" stroke="#f01414" stroke-width="1.5" />
<rect x="952.7" y="386.0" width="1.6" height="5.0" fill="#d8d8d8" opacity="0.6"/>
<line x1="912.0" y1="400.0" x2="912.0" y2="424.0" stroke="#f01414" stroke-width="1" />
<line x1="910.0" y1="423.0" x2="916.0" y2="423.0" stroke="#f01414" stroke-width="1" />
<rect x="904.0" y="406.0" width="2.0" height="10.0" fill="#d8d8d8" opacity="0.55"/>
<line x1="918.0" y1="429.0" x2="944.0" y2="429.0" stroke="#1aa6b4" stroke-width="1.3" />
<text x="929.0" y="435.6" font-size="5.60" fill="#f0f000" stroke="#f0f000" stroke-width="0.45" text-anchor="middle" font-family="Liberation Sans" font-weight="bold" textLength="33.0" lengthAdjust="spacingAndGlyphs">KUSEN PINTU P2a = 2 UNIT</text>
<rect x="912.5" y="436.2" width="33.0" height="1.0" fill="#f0f000"/>
<text x="929.0" y="440.6" font-size="4.8" fill="#f0f000" stroke="#f0f000" stroke-width="0.35" text-anchor="middle" font-family="Liberation Sans" font-weight="bold" textLength="18.2" lengthAdjust="spacingAndGlyphs">(PVC)</text>
<rect x="989.6" y="362.0" width="102.4" height="62.0" stroke="#14b814" stroke-width="2.8" fill="none"/>
<rect x="988.1" y="360.5" width="105.4" height="65.0" stroke="#f01414" stroke-width="0.8" fill="none" opacity="0.8"/>
<line x1="1018.0" y1="362.0" x2="1018.0" y2="424.0" stroke="#14b814" stroke-width="2.8" />
<line x1="1063.0" y1="362.0" x2="1063.0" y2="424.0" stroke="#14b814" stroke-width="2.8" />
<line x1="989.6" y1="375.0" x2="1092.0" y2="375.0" stroke="#14b814" stroke-width="2.8" />
<line x1="989.6" y1="353.0" x2="1092.0" y2="353.0" stroke="#f01414" stroke-width="1" />
<line x1="989.6" y1="357.5" x2="1092.0" y2="357.5" stroke="#f01414" stroke-width="1.2" />
<line x1="989.6" y1="351.0" x2="989.6" y2="361.0" stroke="#f01414" stroke-width="1" />
<path d="M987.1 356.0 L992.1 359.0" stroke="#f01414" stroke-width="1.5"/>
<line x1="1018.0" y1="351.0" x2="1018.0" y2="361.0" stroke="#f01414" stroke-width="1" />
<path d="M1015.5 356.0 L1020.5 359.0" stroke="#f01414" stroke-width="1.5"/>
<line x1="1063.0" y1="351.0" x2="1063.0" y2="361.0" stroke="#f01414" stroke-width="1" />
<path d="M1060.5 356.0 L1065.5 359.0" stroke="#f01414" stroke-width="1.5"/>
<line x1="1092.0" y1="351.0" x2="1092.0" y2="361.0" stroke="#f01414" stroke-width="1" />
<path d="M1089.5 356.0 L1094.5 359.0" stroke="#f01414" stroke-width="1.5"/>
<rect x="1002.3" y="354.2" width="3.0" height="1.6" fill="#d8d8d8" opacity="0.6"/>
<rect x="1039.0" y="354.2" width="3.0" height="1.6" fill="#d8d8d8" opacity="0.6"/>
<rect x="1076.0" y="354.2" width="3.0" height="1.6" fill="#d8d8d8" opacity="0.6"/>
<rect x="1038.8" y="349.7" width="4.0" height="1.6" fill="#d8d8d8" opacity="0.6"/>
<line x1="977.6" y1="362.0" x2="977.6" y2="424.0" stroke="#f01414" stroke-width="1" />
<line x1="982.6" y1="362.0" x2="982.6" y2="424.0" stroke="#f01414" stroke-width="1" />
<line x1="975.6" y1="362.0" x2="991.6" y2="362.0" stroke="#f01414" stroke-width="1" />
<line x1="975.6" y1="375.0" x2="991.6" y2="375.0" stroke="#f01414" stroke-width="1" />
<line x1="975.6" y1="424.0" x2="991.6" y2="424.0" stroke="#f01414" stroke-width="1" />
<rect x="974.3" y="390.5" width="1.6" height="5.0" fill="#d8d8d8" opacity="0.6"/>
<rect x="979.3" y="390.5" width="1.6" height="5.0" fill="#d8d8d8" opacity="0.6"/>
<line x1="985.6" y1="427.0" x2="1096.0" y2="427.0" stroke="#1aa6b4" stroke-width="1.3" />
<rect x="999.8" y="364.7" width="8.0" height="1.8" fill="#d8d8d8" opacity="0.55"/>
<rect x="1001.3" y="367.5" width="5.0" height="1.5" fill="#d8d8d8" opacity="0.5"/>
<path d="M1002.6 373.8 L1005.0 369.8" stroke="#f01414" stroke-width="1.4"/>
<rect x="1036.5" y="364.7" width="8.0" height="1.8" fill="#d8d8d8" opacity="0.55"/>
<rect x="1038.0" y="367.5" width="5.0" height="1.5" fill="#d8d8d8" opacity="0.5"/>
<path d="M1039.3 373.8 L1041.7 369.8" stroke="#f01414" stroke-width="1.4"/>
<rect x="1073.5" y="364.7" width="8.0" height="1.8" fill="#d8d8d8" opacity="0.55"/>
<rect x="1075.0" y="367.5" width="5.0" height="1.5" fill="#d8d8d8" opacity="0.5"/>
<path d="M1076.3 373.8 L1078.7 369.8" stroke="#f01414" stroke-width="1.4"/>
<rect x="993.1" y="379.0" width="21.4" height="41.0" stroke="#14b814" stroke-width="1.6" fill="none" />
<rect x="1066.5" y="379.0" width="22.0" height="41.0" stroke="#14b814" stroke-width="1.6" fill="none" />
<rect x="999.3" y="391.4" width="9.0" height="2.2" fill="#d8d8d8" opacity="0.6"/>
<rect x="1001.3" y="394.6" width="5.0" height="1.8" fill="#d8d8d8" opacity="0.55"/>
<path d="M1001.8 407.5 L1004.3 403.0 L1002.8 404.0 L1005.8 399.5" stroke="#f01414" stroke-width="1.6" fill="none"/>
<rect x="1036.0" y="391.4" width="9.0" height="2.2" fill="#d8d8d8" opacity="0.6"/>
<rect x="1038.0" y="394.6" width="5.0" height="1.8" fill="#d8d8d8" opacity="0.55"/>
<path d="M1038.5 407.5 L1041.0 403.0 L1039.5 404.0 L1042.5 399.5" stroke="#f01414" stroke-width="1.6" fill="none"/>
<rect x="1073.0" y="391.4" width="9.0" height="2.2" fill="#d8d8d8" opacity="0.6"/>
<rect x="1075.0" y="394.6" width="5.0" height="1.8" fill="#d8d8d8" opacity="0.55"/>
<path d="M1075.5 407.5 L1078.0 403.0 L1076.5 404.0 L1079.5 399.5" stroke="#f01414" stroke-width="1.6" fill="none"/>
<rect x="993.0" y="378.0" width="22.0" height="44.0" stroke="#1414c8" stroke-width="1.5" fill="none" stroke-dasharray="2 1.5"/>
<rect x="1066.0" y="378.0" width="23.0" height="44.0" stroke="#1414c8" stroke-width="1.5" fill="none" stroke-dasharray="2 1.5"/>
<rect x="1020.0" y="377.0" width="41.0" height="46.0" stroke="#1414c8" stroke-width="1.2" fill="none" stroke-dasharray="2 1.5"/>
<rect x="992.0" y="429.0" width="100.0" height="8.0" stroke="#14b814" stroke-width="1.5" fill="none" />
<line x1="992.0" y1="433.0" x2="1092.0" y2="433.0" stroke="#f01414" stroke-width="1" />
<line x1="989.0" y1="440.0" x2="1095.0" y2="440.0" stroke="#f01414" stroke-width="1" />
<line x1="972.0" y1="429.0" x2="972.0" y2="440.0" stroke="#f01414" stroke-width="1" />
<line x1="977.0" y1="429.0" x2="977.0" y2="440.0" stroke="#f01414" stroke-width="1" />
<line x1="970.0" y1="429.0" x2="986.0" y2="429.0" stroke="#f01414" stroke-width="1" />
<line x1="970.0" y1="440.0" x2="986.0" y2="440.0" stroke="#f01414" stroke-width="1" />
<rect x="968.7" y="432.0" width="1.6" height="5.0" fill="#d8d8d8" opacity="0.6"/>
<rect x="973.7" y="432.0" width="1.6" height="5.0" fill="#d8d8d8" opacity="0.6"/>
<line x1="988.0" y1="443.0" x2="1095.0" y2="443.0" stroke="#1aa6b4" stroke-width="1.3" />
<text x="1041.0" y="447.6" font-size="5.60" fill="#f0f000" stroke="#f0f000" stroke-width="0.45" text-anchor="middle" font-family="Liberation Sans" font-weight="bold" textLength="35.0" lengthAdjust="spacingAndGlyphs">PINTU GESER P1 = 1 UNIT</text>
<rect x="1023.5" y="448.2" width="35.0" height="1.0" fill="#f0f000"/>
<text x="1041.0" y="452.6" font-size="4.8" fill="#f0f000" stroke="#f0f000" stroke-width="0.35" text-anchor="middle" font-family="Liberation Sans" font-weight="bold" textLength="19.2" lengthAdjust="spacingAndGlyphs">(KAYU & PANEL)</text>
<rect x="3.5" y="478.5" width="388.0" height="275.0" stroke="#6e3a3a" stroke-width="1" fill="none" />
<rect x="12.5" y="487.0" width="369.5" height="257.0" stroke="#1414c8" stroke-width="2" fill="none"/>
<line x1="318.0" y1="487.0" x2="318.0" y2="744.0" stroke="#1414c8" stroke-width="2" />
<line x1="318.0" y1="725.0" x2="382.0" y2="725.0" stroke="#1414c8" stroke-width="2" />
<text x="329.0" y="737.5" font-size="5.4" fill="#f0f000" stroke="#f0f000" stroke-width="0.4" font-family="Liberation Sans" font-weight="bold" textLength="42" lengthAdjust="spacingAndGlyphs">DETAIL PINTU DAN JENDELA</text>
<rect x="26.5" y="505.0" width="84.5" height="127.5" stroke="#14b814" stroke-width="2.9" fill="none"/>
<rect x="25.0" y="503.5" width="87.5" height="130.5" stroke="#f01414" stroke-width="0.8" fill="none" opacity="0.8"/>
<line x1="55.0" y1="505.0" x2="55.0" y2="632.5" stroke="#14b814" stroke-width="2.9" />
<line x1="82.0" y1="505.0" x2="82.0" y2="632.5" stroke="#14b814" stroke-width="2.9" />
<line x1="26.5" y1="496.0" x2="111.0" y2="496.0" stroke="#f01414" stroke-width="1" />
<line x1="26.5" y1="500.5" x2="111.0" y2="500.5" stroke="#f01414" stroke-width="1.2" />
<line x1="26.5" y1="494.0" x2="26.5" y2="504.0" stroke="#f01414" stroke-width="1" />
<path d="M24.0 499.0 L29.0 502.0" stroke="#f01414" stroke-width="1.5"/>
<line x1="55.0" y1="494.0" x2="55.0" y2="504.0" stroke="#f01414" stroke-width="1" />
<path d="M52.5 499.0 L57.5 502.0" stroke="#f01414" stroke-width="1.5"/>
<line x1="82.0" y1="494.0" x2="82.0" y2="504.0" stroke="#f01414" stroke-width="1" />
<path d="M79.5 499.0 L84.5 502.0" stroke="#f01414" stroke-width="1.5"/>
<line x1="111.0" y1="494.0" x2="111.0" y2="504.0" stroke="#f01414" stroke-width="1" />
<path d="M108.5 499.0 L113.5 502.0" stroke="#f01414" stroke-width="1.5"/>
<rect x="39.2" y="497.2" width="3.0" height="1.6" fill="#d8d8d8" opacity="0.6"/>
<rect x="67.0" y="497.2" width="3.0" height="1.6" fill="#d8d8d8" opacity="0.6"/>
<rect x="95.0" y="497.2" width="3.0" height="1.6" fill="#d8d8d8" opacity="0.6"/>
<rect x="66.8" y="492.7" width="4.0" height="1.6" fill="#d8d8d8" opacity="0.6"/>
<line x1="17.5" y1="505.0" x2="17.5" y2="632.5" stroke="#f01414" stroke-width="1" />
<line x1="22.5" y1="505.0" x2="22.5" y2="632.5" stroke="#f01414" stroke-width="1" />
<line x1="15.5" y1="505.0" x2="31.5" y2="505.0" stroke="#f01414" stroke-width="1" />
<line x1="15.5" y1="632.5" x2="31.5" y2="632.5" stroke="#f01414" stroke-width="1" />
<rect x="14.2" y="566.2" width="1.6" height="5.0" fill="#d8d8d8" opacity="0.6"/>
<rect x="19.2" y="566.2" width="1.6" height="5.0" fill="#d8d8d8" opacity="0.6"/>
<line x1="22.5" y1="635.5" x2="115.0" y2="635.5" stroke="#1aa6b4" stroke-width="1.3" />
<rect x="36.2" y="560.6" width="9.0" height="2.2" fill="#d8d8d8" opacity="0.6"/>
<rect x="38.2" y="563.9" width="5.0" height="1.8" fill="#d8d8d8" opacity="0.55"/>
<path d="M38.8 576.8 L41.2 572.2 L39.8 573.2 L42.8 568.8" stroke="#f01414" stroke-width="1.6" fill="none"/>
<rect x="64.0" y="560.6" width="9.0" height="2.2" fill="#d8d8d8" opacity="0.6"/>
<rect x="66.0" y="563.9" width="5.0" height="1.8" fill="#d8d8d8" opacity="0.55"/>
<path d="M66.5 576.8 L69.0 572.2 L67.5 573.2 L70.5 568.8" stroke="#f01414" stroke-width="1.6" fill="none"/>
<rect x="92.0" y="560.6" width="9.0" height="2.2" fill="#d8d8d8" opacity="0.6"/>
<rect x="94.0" y="563.9" width="5.0" height="1.8" fill="#d8d8d8" opacity="0.55"/>
<path d="M94.5 576.8 L97.0 572.2 L95.5 573.2 L98.5 568.8" stroke="#f01414" stroke-width="1.6" fill="none"/>
<line x1="119.6" y1="505.0" x2="119.6" y2="632.0" stroke="#14b814" stroke-width="1.5" />
<line x1="122.6" y1="505.0" x2="122.6" y2="632.0" stroke="#14b814" stroke-width="1.5" />
<line x1="116.6" y1="501.0" x2="116.6" y2="634.0" stroke="#f01414" stroke-width="1" />
<line x1="122.0" y1="501.0" x2="122.0" y2="634.0" stroke="#f01414" stroke-width="1" />
<line x1="119.0" y1="505.0" x2="119.0" y2="632.0" stroke="#f01414" stroke-width="1" />
<line x1="114.6" y1="505.0" x2="124.0" y2="505.0" stroke="#f01414" stroke-width="1.5" />
<line x1="114.6" y1="632.0" x2="124.0" y2="632.0" stroke="#f01414" stroke-width="1.5" />
<rect x="122.2" y="566.0" width="1.6" height="5.0" fill="#d8d8d8" opacity="0.6"/>
<text x="68.0" y="642.6" font-size="5.60" fill="#f0f000" stroke="#f0f000" stroke-width="0.45" text-anchor="middle" font-family="Liberation Sans" font-weight="bold" textLength="36.0" lengthAdjust="spacingAndGlyphs">JENDELA J2 = 14 UNIT</text>
<rect x="50.0" y="643.2" width="36.0" height="1.0" fill="#f0f000"/>
<text x="68.0" y="647.6" font-size="4.8" fill="#f0f000" stroke="#f0f000" stroke-width="0.35" text-anchor="middle" font-family="Liberation Sans" font-weight="bold" textLength="19.8" lengthAdjust="spacingAndGlyphs">(ALUMINIUM)</text>
<rect x="143.0" y="509.0" width="102.6" height="63.5" stroke="#14b814" stroke-width="2.8" fill="none"/>
<rect x="141.5" y="507.5" width="105.6" height="66.5" stroke="#f01414" stroke-width="0.8" fill="none" opacity="0.8"/>
<line x1="171.0" y1="509.0" x2="171.0" y2="572.5" stroke="#14b814" stroke-width="2.8" />
<line x1="217.0" y1="509.0" x2="217.0" y2="572.5" stroke="#14b814" stroke-width="2.8" />
<line x1="143.0" y1="523.7" x2="245.6" y2="523.7" stroke="#14b814" stroke-width="2.8" />
<rect x="153.0" y="512.2" width="8.0" height="1.8" fill="#d8d8d8" opacity="0.55"/>
<rect x="154.5" y="515.3" width="5.0" height="1.5" fill="#d8d8d8" opacity="0.5"/>
<path d="M155.8 522.0 L158.2 518.0" stroke="#f01414" stroke-width="1.4"/>
<rect x="190.0" y="512.2" width="8.0" height="1.8" fill="#d8d8d8" opacity="0.55"/>
<rect x="191.5" y="515.3" width="5.0" height="1.5" fill="#d8d8d8" opacity="0.5"/>
<path d="M192.8 522.0 L195.2 518.0" stroke="#f01414" stroke-width="1.4"/>
<rect x="227.3" y="512.2" width="8.0" height="1.8" fill="#d8d8d8" opacity="0.55"/>
<rect x="228.8" y="515.3" width="5.0" height="1.5" fill="#d8d8d8" opacity="0.5"/>
<path d="M230.1 522.0 L232.5 518.0" stroke="#f01414" stroke-width="1.4"/>
<rect x="146.5" y="527.7" width="21.0" height="40.8" stroke="#14b814" stroke-width="1.6" fill="none" />
<rect x="220.5" y="527.7" width="21.6" height="40.8" stroke="#14b814" stroke-width="1.6" fill="none" />
<rect x="152.5" y="540.0" width="9.0" height="2.2" fill="#d8d8d8" opacity="0.6"/>
<rect x="154.5" y="543.2" width="5.0" height="1.8" fill="#d8d8d8" opacity="0.55"/>
<path d="M155.0 556.1 L157.5 551.6 L156.0 552.6 L159.0 548.1" stroke="#f01414" stroke-width="1.6" fill="none"/>
<rect x="189.5" y="540.0" width="9.0" height="2.2" fill="#d8d8d8" opacity="0.6"/>
<rect x="191.5" y="543.2" width="5.0" height="1.8" fill="#d8d8d8" opacity="0.55"/>
<path d="M192.0 556.1 L194.5 551.6 L193.0 552.6 L196.0 548.1" stroke="#f01414" stroke-width="1.6" fill="none"/>
<rect x="226.8" y="540.0" width="9.0" height="2.2" fill="#d8d8d8" opacity="0.6"/>
<rect x="228.8" y="543.2" width="5.0" height="1.8" fill="#d8d8d8" opacity="0.55"/>
<path d="M229.3 556.1 L231.8 551.6 L230.3 552.6 L233.3 548.1" stroke="#f01414" stroke-width="1.6" fill="none"/>
<line x1="143.0" y1="500.0" x2="245.6" y2="500.0" stroke="#f01414" stroke-width="1" />
<line x1="143.0" y1="504.5" x2="245.6" y2="504.5" stroke="#f01414" stroke-width="1.2" />
<line x1="143.0" y1="498.0" x2="143.0" y2="508.0" stroke="#f01414" stroke-width="1" />
<path d="M140.5 503.0 L145.5 506.0" stroke="#f01414" stroke-width="1.5"/>
<line x1="171.0" y1="498.0" x2="171.0" y2="508.0" stroke="#f01414" stroke-width="1" />
<path d="M168.5 503.0 L173.5 506.0" stroke="#f01414" stroke-width="1.5"/>
<line x1="217.0" y1="498.0" x2="217.0" y2="508.0" stroke="#f01414" stroke-width="1" />
<path d="M214.5 503.0 L219.5 506.0" stroke="#f01414" stroke-width="1.5"/>
<line x1="245.6" y1="498.0" x2="245.6" y2="508.0" stroke="#f01414" stroke-width="1" />
<path d="M243.1 503.0 L248.1 506.0" stroke="#f01414" stroke-width="1.5"/>
<rect x="155.5" y="501.2" width="3.0" height="1.6" fill="#d8d8d8" opacity="0.6"/>
<rect x="192.5" y="501.2" width="3.0" height="1.6" fill="#d8d8d8" opacity="0.6"/>
<rect x="229.8" y="501.2" width="3.0" height="1.6" fill="#d8d8d8" opacity="0.6"/>
<rect x="192.3" y="496.7" width="4.0" height="1.6" fill="#d8d8d8" opacity="0.6"/>
<rect x="143.0" y="581.0" width="102.6" height="7.0" stroke="#14b814" stroke-width="1.5" fill="none" />
<line x1="143.0" y1="584.5" x2="245.6" y2="584.5" stroke="#f01414" stroke-width="1" />
<line x1="140.0" y1="591.0" x2="248.6" y2="591.0" stroke="#f01414" stroke-width="1" />
<line x1="141.0" y1="602.0" x2="249.0" y2="602.0" stroke="#1aa6b4" stroke-width="1.3" />
<line x1="254.0" y1="509.0" x2="254.0" y2="602.0" stroke="#f01414" stroke-width="1" />
<line x1="261.5" y1="509.0" x2="261.5" y2="602.0" stroke="#f01414" stroke-width="1" />
<line x1="248.0" y1="509.0" x2="263.0" y2="509.0" stroke="#f01414" stroke-width="1" />
<line x1="248.0" y1="524.0" x2="263.0" y2="524.0" stroke="#f01414" stroke-width="1" />
<line x1="248.0" y1="572.0" x2="263.0" y2="572.0" stroke="#f01414" stroke-width="1" />
<line x1="248.0" y1="588.0" x2="263.0" y2="588.0" stroke="#f01414" stroke-width="1" />
<line x1="248.0" y1="602.0" x2="263.0" y2="602.0" stroke="#f01414" stroke-width="1" />
<text x="195.0" y="608.6" font-size="5.60" fill="#f0f000" stroke="#f0f000" stroke-width="0.45" text-anchor="middle" font-family="Liberation Sans" font-weight="bold" textLength="36.0" lengthAdjust="spacingAndGlyphs">PINTU P4 = 14 UNIT</text>
<rect x="177.0" y="609.2" width="36.0" height="1.0" fill="#f0f000"/>
<text x="195.0" y="613.6" font-size="4.8" fill="#f0f000" stroke="#f0f000" stroke-width="0.35" text-anchor="middle" font-family="Liberation Sans" font-weight="bold" textLength="19.8" lengthAdjust="spacingAndGlyphs">(KAYU)</text>
<rect x="270.0" y="509.0" width="30.0" height="63.5" stroke="#14b814" stroke-width="2.8" fill="none"/>
<rect x="268.5" y="507.5" width="33.0" height="66.5" stroke="#f01414" stroke-width="0.8" fill="none" opacity="0.8"/>
<line x1="270.0" y1="523.7" x2="300.0" y2="523.7" stroke="#14b814" stroke-width="2.8" />
<rect x="281.0" y="512.2" width="8.0" height="1.8" fill="#d8d8d8" opacity="0.55"/>
<rect x="282.5" y="515.3" width="5.0" height="1.5" fill="#d8d8d8" opacity="0.5"/>
<path d="M283.8 522.0 L286.2 518.0" stroke="#f01414" stroke-width="1.4"/>
<rect x="273.5" y="527.7" width="23.0" height="40.8" stroke="#14b814" stroke-width="1.6" fill="none" />
<rect x="280.5" y="540.0" width="9.0" height="2.2" fill="#d8d8d8" opacity="0.6"/>
<rect x="282.5" y="543.2" width="5.0" height="1.8" fill="#d8d8d8" opacity="0.55"/>
<path d="M283.0 556.1 L285.5 551.6 L284.0 552.6 L287.0 548.1" stroke="#f01414" stroke-width="1.6" fill="none"/>
<line x1="270.0" y1="500.0" x2="300.0" y2="500.0" stroke="#f01414" stroke-width="1" />
<line x1="270.0" y1="504.5" x2="300.0" y2="504.5" stroke="#f01414" stroke-width="1.2" />
<line x1="270.0" y1="498.0" x2="270.0" y2="508.0" stroke="#f01414" stroke-width="1" />
<path d="M267.5 503.0 L272.5 506.0" stroke="#f01414" stroke-width="1.5"/>
<line x1="300.0" y1="498.0" x2="300.0" y2="508.0" stroke="#f01414" stroke-width="1" />
<path d="M297.5 503.0 L302.5 506.0" stroke="#f01414" stroke-width="1.5"/>
<rect x="283.5" y="501.2" width="3.0" height="1.6" fill="#d8d8d8" opacity="0.6"/>
<rect x="283.0" y="496.7" width="4.0" height="1.6" fill="#d8d8d8" opacity="0.6"/>
<rect x="270.0" y="581.0" width="30.0" height="7.0" stroke="#14b814" stroke-width="1.5" fill="none" />
<line x1="270.0" y1="584.5" x2="300.0" y2="584.5" stroke="#f01414" stroke-width="1" />
<line x1="267.0" y1="591.0" x2="303.0" y2="591.0" stroke="#f01414" stroke-width="1" />
<line x1="270.0" y1="602.0" x2="305.0" y2="602.0" stroke="#1aa6b4" stroke-width="1.3" />
<line x1="311.0" y1="509.0" x2="311.0" y2="602.0" stroke="#f01414" stroke-width="1" />
<line x1="305.0" y1="509.0" x2="305.0" y2="602.0" stroke="#f01414" stroke-width="1" />
<line x1="302.0" y1="509.0" x2="313.0" y2="509.0" stroke="#f01414" stroke-width="1" />
<line x1="302.0" y1="524.0" x2="313.0" y2="524.0" stroke="#f01414" stroke-width="1" />
<line x1="302.0" y1="572.0" x2="313.0" y2="572.0" stroke="#f01414" stroke-width="1" />
<line x1="302.0" y1="588.0" x2="313.0" y2="588.0" stroke="#f01414" stroke-width="1" />
<line x1="302.0" y1="602.0" x2="313.0" y2="602.0" stroke="#f01414" stroke-width="1" />
<text x="286.0" y="611.6" font-size="5.60" fill="#f0f000" stroke="#f0f000" stroke-width="0.45" text-anchor="middle" font-family="Liberation Sans" font-weight="bold" textLength="34.0" lengthAdjust="spacingAndGlyphs">JENDELA JB = 2 UNIT</text>
<rect x="269.0" y="612.2" width="34.0" height="1.0" fill="#f0f000"/>
<text x="286.0" y="616.6" font-size="4.8" fill="#f0f000" stroke="#f0f000" stroke-width="0.35" text-anchor="middle" font-family="Liberation Sans" font-weight="bold" textLength="18.7" lengthAdjust="spacingAndGlyphs">(PVC)</text>
<rect x="46.0" y="666.0" width="45.0" height="46.0" stroke="#14b814" stroke-width="2" fill="none"/>
<rect x="44.5" y="664.5" width="48.0" height="49.0" stroke="#f01414" stroke-width="0.8" fill="none" opacity="0.8"/>
<line x1="46.0" y1="657.0" x2="91.0" y2="657.0" stroke="#f01414" stroke-width="1" />
<line x1="46.0" y1="661.5" x2="91.0" y2="661.5" stroke="#f01414" stroke-width="1.2" />
<line x1="46.0" y1="655.0" x2="46.0" y2="665.0" stroke="#f01414" stroke-width="1" />
<path d="M43.5 660.0 L48.5 663.0" stroke="#f01414" stroke-width="1.5"/>
<line x1="91.0" y1="655.0" x2="91.0" y2="665.0" stroke="#f01414" stroke-width="1" />
<path d="M88.5 660.0 L93.5 663.0" stroke="#f01414" stroke-width="1.5"/>
<rect x="67.0" y="658.2" width="3.0" height="1.6" fill="#d8d8d8" opacity="0.6"/>
<rect x="66.5" y="653.7" width="4.0" height="1.6" fill="#d8d8d8" opacity="0.6"/>
<line x1="29.0" y1="666.0" x2="29.0" y2="712.0" stroke="#f01414" stroke-width="1" />
<line x1="34.0" y1="666.0" x2="34.0" y2="712.0" stroke="#f01414" stroke-width="1" />
<line x1="27.0" y1="666.0" x2="43.0" y2="666.0" stroke="#f01414" stroke-width="1" />
<line x1="27.0" y1="712.0" x2="43.0" y2="712.0" stroke="#f01414" stroke-width="1" />
<rect x="25.7" y="686.5" width="1.6" height="5.0" fill="#d8d8d8" opacity="0.6"/>
<rect x="30.7" y="686.5" width="1.6" height="5.0" fill="#d8d8d8" opacity="0.6"/>
<line x1="48.0" y1="671.0" x2="89.0" y2="671.0" stroke="#f01414" stroke-width="1.3" />
<line x1="48.0" y1="675.7" x2="89.0" y2="675.7" stroke="#f01414" stroke-width="1.3" />
<line x1="48.0" y1="680.4" x2="89.0" y2="680.4" stroke="#f01414" stroke-width="1.3" />
<line x1="48.0" y1="685.1" x2="89.0" y2="685.1" stroke="#f01414" stroke-width="1.3" />
<line x1="48.0" y1="689.8" x2="89.0" y2="689.8" stroke="#f01414" stroke-width="1.3" />
<line x1="48.0" y1="694.5" x2="89.0" y2="694.5" stroke="#f01414" stroke-width="1.3" />
<line x1="48.0" y1="699.2" x2="89.0" y2="699.2" stroke="#f01414" stroke-width="1.3" />
<line x1="48.0" y1="703.9" x2="89.0" y2="703.9" stroke="#f01414" stroke-width="1.3" />
<line x1="48.0" y1="708.6" x2="89.0" y2="708.6" stroke="#f01414" stroke-width="1.3" />
<rect x="100.7" y="661.0" width="5.3" height="52.0" stroke="#f01414" stroke-width="1" fill="none" />
<path d="M101 668 L106 662 M101 676 L106 670 M101 684 L106 678 M101 692 L106 686 M101 700 L106 694 M101 708 L106 702" stroke="#d8d8d8" stroke-width="0.8"/>
<line x1="99.0" y1="660.0" x2="109.0" y2="660.0" stroke="#f01414" stroke-width="1" />
<line x1="99.0" y1="713.0" x2="109.0" y2="713.0" stroke="#f01414" stroke-width="1" />
<line x1="44.0" y1="722.6" x2="93.6" y2="722.6" stroke="#1aa6b4" stroke-width="1.3" />
<line x1="36.0" y1="662.0" x2="36.0" y2="724.0" stroke="#f01414" stroke-width="1" />
<text x="69.0" y="730.6" font-size="5.60" fill="#f0f000" stroke="#f0f000" stroke-width="0.45" text-anchor="middle" font-family="Liberation Sans" font-weight="bold" textLength="36.0" lengthAdjust="spacingAndGlyphs">KUSEN PINTU P2a = 2 UNIT</text>
<rect x="51.0" y="731.2" width="36.0" height="1.0" fill="#f0f000"/>
<text x="69.0" y="735.6" font-size="4.8" fill="#f0f000" stroke="#f0f000" stroke-width="0.35" text-anchor="middle" font-family="Liberation Sans" font-weight="bold" textLength="19.8" lengthAdjust="spacingAndGlyphs">(KAYU & PANEL)</text>
<rect x="145.0" y="636.0" width="104.0" height="62.0" stroke="#14b814" stroke-width="2.8" fill="none"/>
<rect x="143.5" y="634.5" width="107.0" height="65.0" stroke="#f01414" stroke-width="0.8" fill="none" opacity="0.8"/>
<line x1="173.0" y1="636.0" x2="173.0" y2="698.0" stroke="#14b814" stroke-width="2.8" />
<line x1="219.0" y1="636.0" x2="219.0" y2="698.0" stroke="#14b814" stroke-width="2.8" />
<line x1="145.0" y1="649.5" x2="249.0" y2="649.5" stroke="#14b814" stroke-width="2.8" />
<rect x="155.0" y="638.9" width="8.0" height="1.8" fill="#d8d8d8" opacity="0.55"/>
<rect x="156.5" y="641.7" width="5.0" height="1.5" fill="#d8d8d8" opacity="0.5"/>
<path d="M157.8 648.1 L160.2 644.1" stroke="#f01414" stroke-width="1.4"/>
<rect x="192.0" y="638.9" width="8.0" height="1.8" fill="#d8d8d8" opacity="0.55"/>
<rect x="193.5" y="641.7" width="5.0" height="1.5" fill="#d8d8d8" opacity="0.5"/>
<path d="M194.8 648.1 L197.2 644.1" stroke="#f01414" stroke-width="1.4"/>
<rect x="230.0" y="638.9" width="8.0" height="1.8" fill="#d8d8d8" opacity="0.55"/>
<rect x="231.5" y="641.7" width="5.0" height="1.5" fill="#d8d8d8" opacity="0.5"/>
<path d="M232.8 648.1 L235.2 644.1" stroke="#f01414" stroke-width="1.4"/>
<rect x="148.5" y="653.5" width="21.0" height="40.5" stroke="#14b814" stroke-width="1.6" fill="none" />
<rect x="222.5" y="653.5" width="23.0" height="40.5" stroke="#14b814" stroke-width="1.6" fill="none" />
<rect x="154.5" y="665.6" width="9.0" height="2.2" fill="#d8d8d8" opacity="0.6"/>
<rect x="156.5" y="668.9" width="5.0" height="1.8" fill="#d8d8d8" opacity="0.55"/>
<path d="M157.0 681.8 L159.5 677.2 L158.0 678.2 L161.0 673.8" stroke="#f01414" stroke-width="1.6" fill="none"/>
<rect x="191.5" y="665.6" width="9.0" height="2.2" fill="#d8d8d8" opacity="0.6"/>
<rect x="193.5" y="668.9" width="5.0" height="1.8" fill="#d8d8d8" opacity="0.55"/>
<path d="M194.0 681.8 L196.5 677.2 L195.0 678.2 L198.0 673.8" stroke="#f01414" stroke-width="1.6" fill="none"/>
<rect x="229.5" y="665.6" width="9.0" height="2.2" fill="#d8d8d8" opacity="0.6"/>
<rect x="231.5" y="668.9" width="5.0" height="1.8" fill="#d8d8d8" opacity="0.55"/>
<path d="M232.0 681.8 L234.5 677.2 L233.0 678.2 L236.0 673.8" stroke="#f01414" stroke-width="1.6" fill="none"/>
<rect x="134.0" y="632.5" width="127.5" height="68.5" stroke="#f01414" stroke-width="1.5" fill="none" />
<line x1="137.0" y1="625.0" x2="258.0" y2="625.0" stroke="#f01414" stroke-width="1" />
<line x1="137.0" y1="629.5" x2="258.0" y2="629.5" stroke="#f01414" stroke-width="1.2" />
<line x1="137.0" y1="623.0" x2="137.0" y2="633.0" stroke="#f01414" stroke-width="1" />
<path d="M134.5 628.0 L139.5 631.0" stroke="#f01414" stroke-width="1.5"/>
<line x1="145.0" y1="623.0" x2="145.0" y2="633.0" stroke="#f01414" stroke-width="1" />
<path d="M142.5 628.0 L147.5 631.0" stroke="#f01414" stroke-width="1.5"/>
<line x1="173.0" y1="623.0" x2="173.0" y2="633.0" stroke="#f01414" stroke-width="1" />
<path d="M170.5 628.0 L175.5 631.0" stroke="#f01414" stroke-width="1.5"/>
<line x1="219.0" y1="623.0" x2="219.0" y2="633.0" stroke="#f01414" stroke-width="1" />
<path d="M216.5 628.0 L221.5 631.0" stroke="#f01414" stroke-width="1.5"/>
<line x1="249.0" y1="623.0" x2="249.0" y2="633.0" stroke="#f01414" stroke-width="1" />
<path d="M246.5 628.0 L251.5 631.0" stroke="#f01414" stroke-width="1.5"/>
<line x1="258.0" y1="623.0" x2="258.0" y2="633.0" stroke="#f01414" stroke-width="1" />
<path d="M255.5 628.0 L260.5 631.0" stroke="#f01414" stroke-width="1.5"/>
<rect x="139.5" y="626.2" width="3.0" height="1.6" fill="#d8d8d8" opacity="0.6"/>
<rect x="157.5" y="626.2" width="3.0" height="1.6" fill="#d8d8d8" opacity="0.6"/>
<rect x="194.5" y="626.2" width="3.0" height="1.6" fill="#d8d8d8" opacity="0.6"/>
<rect x="232.5" y="626.2" width="3.0" height="1.6" fill="#d8d8d8" opacity="0.6"/>
<rect x="252.0" y="626.2" width="3.0" height="1.6" fill="#d8d8d8" opacity="0.6"/>
<rect x="195.5" y="621.7" width="4.0" height="1.6" fill="#d8d8d8" opacity="0.6"/>
<line x1="137.0" y1="624.0" x2="258.0" y2="624.0" stroke="#f01414" stroke-width="1" />
<line x1="120.0" y1="636.0" x2="120.0" y2="701.0" stroke="#f01414" stroke-width="1" />
<line x1="125.0" y1="636.0" x2="125.0" y2="701.0" stroke="#f01414" stroke-width="1" />
<line x1="118.0" y1="636.0" x2="134.0" y2="636.0" stroke="#f01414" stroke-width="1" />
<line x1="118.0" y1="649.0" x2="134.0" y2="649.0" stroke="#f01414" stroke-width="1" />
<line x1="118.0" y1="701.0" x2="134.0" y2="701.0" stroke="#f01414" stroke-width="1" />
<rect x="116.7" y="666.0" width="1.6" height="5.0" fill="#d8d8d8" opacity="0.6"/>
<rect x="121.7" y="666.0" width="1.6" height="5.0" fill="#d8d8d8" opacity="0.6"/>
<line x1="251.0" y1="636.0" x2="251.0" y2="701.0" stroke="#f01414" stroke-width="1.5" />
<line x1="258.0" y1="636.0" x2="258.0" y2="701.0" stroke="#f01414" stroke-width="1" />
<line x1="262.0" y1="632.0" x2="262.0" y2="728.0" stroke="#f01414" stroke-width="1" />
<rect x="139.0" y="707.5" width="115.0" height="11.5" stroke="#14b814" stroke-width="1.5" fill="none" />
<line x1="139.0" y1="713.2" x2="254.0" y2="713.2" stroke="#f01414" stroke-width="1" />
<line x1="136.0" y1="722.0" x2="257.0" y2="722.0" stroke="#f01414" stroke-width="1" />
<line x1="145.0" y1="712.0" x2="249.0" y2="712.0" stroke="#14b814" stroke-width="2" />
<line x1="135.0" y1="728.0" x2="254.0" y2="728.0" stroke="#1aa6b4" stroke-width="1.3" />
<text x="195.0" y="736.6" font-size="5.60" fill="#f0f000" stroke="#f0f000" stroke-width="0.45" text-anchor="middle" font-family="Liberation Sans" font-weight="bold" textLength="36.0" lengthAdjust="spacingAndGlyphs">PINTU GESER P1 = 1 UNIT</text>
<rect x="177.0" y="737.2" width="36.0" height="1.0" fill="#f0f000"/>
<text x="195.0" y="741.6" font-size="4.8" fill="#f0f000" stroke="#f0f000" stroke-width="0.35" text-anchor="middle" font-family="Liberation Sans" font-weight="bold" textLength="19.8" lengthAdjust="spacingAndGlyphs">(ALUMINIUM)</text>
<rect x="270.0" y="636.0" width="30.0" height="62.0" stroke="#14b814" stroke-width="2.8" fill="none"/>
<rect x="268.5" y="634.5" width="33.0" height="65.0" stroke="#f01414" stroke-width="0.8" fill="none" opacity="0.8"/>
<line x1="270.0" y1="649.5" x2="300.0" y2="649.5" stroke="#14b814" stroke-width="2.8" />
<rect x="281.0" y="638.9" width="8.0" height="1.8" fill="#d8d8d8" opacity="0.55"/>
<rect x="282.5" y="641.7" width="5.0" height="1.5" fill="#d8d8d8" opacity="0.5"/>
<path d="M283.8 648.1 L286.2 644.1" stroke="#f01414" stroke-width="1.4"/>
<rect x="273.5" y="653.5" width="23.0" height="40.5" stroke="#14b814" stroke-width="1.6" fill="none" />
<rect x="280.5" y="665.6" width="9.0" height="2.2" fill="#d8d8d8" opacity="0.6"/>
<rect x="282.5" y="668.9" width="5.0" height="1.8" fill="#d8d8d8" opacity="0.55"/>
<path d="M283.0 681.8 L285.5 677.2 L284.0 678.2 L287.0 673.8" stroke="#f01414" stroke-width="1.6" fill="none"/>
<line x1="270.0" y1="627.0" x2="300.0" y2="627.0" stroke="#f01414" stroke-width="1" />
<line x1="270.0" y1="631.5" x2="300.0" y2="631.5" stroke="#f01414" stroke-width="1.2" />
<line x1="270.0" y1="625.0" x2="270.0" y2="635.0" stroke="#f01414" stroke-width="1" />
<path d="M267.5 630.0 L272.5 633.0" stroke="#f01414" stroke-width="1.5"/>
<line x1="300.0" y1="625.0" x2="300.0" y2="635.0" stroke="#f01414" stroke-width="1" />
<path d="M297.5 630.0 L302.5 633.0" stroke="#f01414" stroke-width="1.5"/>
<rect x="283.5" y="628.2" width="3.0" height="1.6" fill="#d8d8d8" opacity="0.6"/>
<rect x="283.0" y="623.7" width="4.0" height="1.6" fill="#d8d8d8" opacity="0.6"/>
<rect x="270.0" y="708.5" width="30.0" height="5.5" stroke="#14b814" stroke-width="1.5" fill="none" />
<line x1="270.0" y1="711.2" x2="300.0" y2="711.2" stroke="#f01414" stroke-width="1" />
<line x1="267.0" y1="717.0" x2="303.0" y2="717.0" stroke="#f01414" stroke-width="1" />
<line x1="270.0" y1="728.0" x2="305.0" y2="728.0" stroke="#1aa6b4" stroke-width="1.3" />
<line x1="311.0" y1="636.0" x2="311.0" y2="728.0" stroke="#f01414" stroke-width="1" />
<line x1="305.0" y1="636.0" x2="305.0" y2="714.0" stroke="#f01414" stroke-width="1" />
<line x1="302.0" y1="636.0" x2="313.0" y2="636.0" stroke="#f01414" stroke-width="1" />
<line x1="302.0" y1="650.0" x2="313.0" y2="650.0" stroke="#f01414" stroke-width="1" />
<line x1="302.0" y1="698.0" x2="313.0" y2="698.0" stroke="#f01414" stroke-width="1" />
<line x1="302.0" y1="714.0" x2="313.0" y2="714.0" stroke="#f01414" stroke-width="1" />
<line x1="302.0" y1="728.0" x2="313.0" y2="728.0" stroke="#f01414" stroke-width="1" />
<text x="287.0" y="736.6" font-size="5.60" fill="#f0f000" stroke="#f0f000" stroke-width="0.45" text-anchor="middle" font-family="Liberation Sans" font-weight="bold" textLength="30.0" lengthAdjust="spacingAndGlyphs">JENDELA J2 = 14 UNIT</text>
<rect x="272.0" y="737.2" width="30.0" height="1.0" fill="#f0f000"/>
<text x="287.0" y="741.6" font-size="4.8" fill="#f0f000" stroke="#f0f000" stroke-width="0.35" text-anchor="middle" font-family="Liberation Sans" font-weight="bold" textLength="16.5" lengthAdjust="spacingAndGlyphs">(KAYU)</text>
<rect x="394.5" y="478.5" width="389.0" height="275.0" stroke="#6e3a3a" stroke-width="1" fill="none" />
<rect x="403.5" y="487.0" width="370.5" height="257.0" stroke="#1414c8" stroke-width="2" fill="none"/>
<line x1="709.0" y1="487.0" x2="709.0" y2="744.0" stroke="#1414c8" stroke-width="2" />
<line x1="709.0" y1="725.0" x2="774.0" y2="725.0" stroke="#1414c8" stroke-width="2" />
<text x="720.0" y="737.5" font-size="5.4" fill="#f0f000" stroke="#f0f000" stroke-width="0.4" font-family="Liberation Sans" font-weight="bold" textLength="42" lengthAdjust="spacingAndGlyphs">DETAIL PINTU DAN JENDELA</text>
<rect x="436.0" y="503.6" width="137.7" height="97.8" stroke="#14b814" stroke-width="1.8" fill="none"/>
<rect x="434.5" y="502.1" width="140.7" height="100.8" stroke="#f01414" stroke-width="0.8" fill="none" opacity="0.8"/>
<line x1="502.0" y1="503.6" x2="502.0" y2="601.4" stroke="#14b814" stroke-width="1.8" />
<line x1="539.0" y1="503.6" x2="539.0" y2="601.4" stroke="#14b814" stroke-width="1.8" />
<line x1="436.0" y1="494.6" x2="573.7" y2="494.6" stroke="#f01414" stroke-width="1" />
<line x1="436.0" y1="499.1" x2="573.7" y2="499.1" stroke="#f01414" stroke-width="1.2" />
<line x1="436.0" y1="492.6" x2="436.0" y2="502.6" stroke="#f01414" stroke-width="1" />
<path d="M433.5 497.6 L438.5 500.6" stroke="#f01414" stroke-width="1.5"/>
<line x1="502.0" y1="492.6" x2="502.0" y2="502.6" stroke="#f01414" stroke-width="1" />
<path d="M499.5 497.6 L504.5 500.6" stroke="#f01414" stroke-width="1.5"/>
<line x1="539.0" y1="492.6" x2="539.0" y2="502.6" stroke="#f01414" stroke-width="1" />
<path d="M536.5 497.6 L541.5 500.6" stroke="#f01414" stroke-width="1.5"/>
<line x1="573.7" y1="492.6" x2="573.7" y2="502.6" stroke="#f01414" stroke-width="1" />
<path d="M571.2 497.6 L576.2 500.6" stroke="#f01414" stroke-width="1.5"/>
<rect x="467.5" y="495.8" width="3.0" height="1.6" fill="#d8d8d8" opacity="0.6"/>
<rect x="519.0" y="495.8" width="3.0" height="1.6" fill="#d8d8d8" opacity="0.6"/>
<rect x="554.9" y="495.8" width="3.0" height="1.6" fill="#d8d8d8" opacity="0.6"/>
<rect x="502.9" y="491.3" width="4.0" height="1.6" fill="#d8d8d8" opacity="0.6"/>
<line x1="427.0" y1="503.6" x2="427.0" y2="601.4" stroke="#f01414" stroke-width="1" />
<line x1="432.0" y1="503.6" x2="432.0" y2="601.4" stroke="#f01414" stroke-width="1" />
<line x1="425.0" y1="503.6" x2="441.0" y2="503.6" stroke="#f01414" stroke-width="1" />
<line x1="425.0" y1="601.4" x2="441.0" y2="601.4" stroke="#f01414" stroke-width="1" />
<rect x="423.7" y="550.0" width="1.6" height="5.0" fill="#d8d8d8" opacity="0.6"/>
<rect x="428.7" y="550.0" width="1.6" height="5.0" fill="#d8d8d8" opacity="0.6"/>
<rect x="464.5" y="544.4" width="9.0" height="2.2" fill="#d8d8d8" opacity="0.6"/>
<rect x="466.5" y="547.6" width="5.0" height="1.8" fill="#d8d8d8" opacity="0.55"/>
<path d="M467.0 560.5 L469.5 556.0 L468.0 557.0 L471.0 552.5" stroke="#f01414" stroke-width="1.6" fill="none"/>
<rect x="516.0" y="544.4" width="9.0" height="2.2" fill="#d8d8d8" opacity="0.6"/>
<rect x="518.0" y="547.6" width="5.0" height="1.8" fill="#d8d8d8" opacity="0.55"/>
<path d="M518.5 560.5 L521.0 556.0 L519.5 557.0 L522.5 552.5" stroke="#f01414" stroke-width="1.6" fill="none"/>
<rect x="551.9" y="544.4" width="9.0" height="2.2" fill="#d8d8d8" opacity="0.6"/>
<rect x="553.9" y="547.6" width="5.0" height="1.8" fill="#d8d8d8" opacity="0.55"/>
<path d="M554.4 560.5 L556.9 556.0 L555.4 557.0 L558.4 552.5" stroke="#f01414" stroke-width="1.6" fill="none"/>
<line x1="433.0" y1="606.0" x2="577.0" y2="606.0" stroke="#1aa6b4" stroke-width="1.3" />
<text x="502.0" y="615.6" font-size="5.60" fill="#f0f000" stroke="#f0f000" stroke-width="0.45" text-anchor="middle" font-family="Liberation Sans" font-weight="bold" textLength="25.0" lengthAdjust="spacingAndGlyphs">PINTU P4 = 14 UNIT</text>
<rect x="489.5" y="616.2" width="25.0" height="1.0" fill="#f0f000"/>
<rect x="598.5" y="503.6" width="77.5" height="97.8" stroke="#14b814" stroke-width="2.9" fill="none"/>
<rect x="597.0" y="502.1" width="80.5" height="100.8" stroke="#f01414" stroke-width="0.8" fill="none" opacity="0.8"/>
<line x1="637.0" y1="503.6" x2="637.0" y2="601.4" stroke="#14b814" stroke-width="2.9" />
<line x1="598.5" y1="494.6" x2="676.0" y2="494.6" stroke="#f01414" stroke-width="1" />
<line x1="598.5" y1="499.1" x2="676.0" y2="499.1" stroke="#f01414" stroke-width="1.2" />
<line x1="598.5" y1="492.6" x2="598.5" y2="502.6" stroke="#f01414" stroke-width="1" />
<path d="M596.0 497.6 L601.0 500.6" stroke="#f01414" stroke-width="1.5"/>
<line x1="637.0" y1="492.6" x2="637.0" y2="502.6" stroke="#f01414" stroke-width="1" />
<path d="M634.5 497.6 L639.5 500.6" stroke="#f01414" stroke-width="1.5"/>
<line x1="676.0" y1="492.6" x2="676.0" y2="502.6" stroke="#f01414" stroke-width="1" />
<path d="M673.5 497.6 L678.5 500.6" stroke="#f01414" stroke-width="1.5"/>
<rect x="616.2" y="495.8" width="3.0" height="1.6" fill="#d8d8d8" opacity="0.6"/>
<rect x="655.0" y="495.8" width="3.0" height="1.6" fill="#d8d8d8" opacity="0.6"/>
<rect x="635.2" y="491.3" width="4.0" height="1.6" fill="#d8d8d8" opacity="0.6"/>
<line x1="589.5" y1="503.6" x2="589.5" y2="601.4" stroke="#f01414" stroke-width="1" />
<line x1="594.5" y1="503.6" x2="594.5" y2="601.4" stroke="#f01414" stroke-width="1" />
<line x1="587.5" y1="503.6" x2="603.5" y2="503.6" stroke="#f01414" stroke-width="1" />
<line x1="587.5" y1="601.4" x2="603.5" y2="601.4" stroke="#f01414" stroke-width="1" />
<rect x="586.2" y="550.0" width="1.6" height="5.0" fill="#d8d8d8" opacity="0.6"/>
<rect x="591.2" y="550.0" width="1.6" height="5.0" fill="#d8d8d8" opacity="0.6"/>
<rect x="613.2" y="544.4" width="9.0" height="2.2" fill="#d8d8d8" opacity="0.6"/>
<rect x="615.2" y="547.6" width="5.0" height="1.8" fill="#d8d8d8" opacity="0.55"/>
<path d="M615.8 560.5 L618.2 556.0 L616.8 557.0 L619.8 552.5" stroke="#f01414" stroke-width="1.6" fill="none"/>
<rect x="652.0" y="544.4" width="9.0" height="2.2" fill="#d8d8d8" opacity="0.6"/>
<rect x="654.0" y="547.6" width="5.0" height="1.8" fill="#d8d8d8" opacity="0.55"/>
<path d="M654.5 560.5 L657.0 556.0 L655.5 557.0 L658.5 552.5" stroke="#f01414" stroke-width="1.6" fill="none"/>
<line x1="595.0" y1="606.0" x2="680.0" y2="606.0" stroke="#1aa6b4" stroke-width="1.3" />
<line x1="687.0" y1="503.0" x2="687.0" y2="601.0" stroke="#14b814" stroke-width="1.5" />
<line x1="690.0" y1="503.0" x2="690.0" y2="601.0" stroke="#14b814" stroke-width="1.5" />
<line x1="684.0" y1="499.0" x2="684.0" y2="603.0" stroke="#f01414" stroke-width="1" />
<line x1="693.0" y1="499.0" x2="693.0" y2="603.0" stroke="#f01414" stroke-width="1" />
<line x1="690.0" y1="503.0" x2="690.0" y2="601.0" stroke="#f01414" stroke-width="1" />
<line x1="682.0" y1="503.0" x2="695.0" y2="503.0" stroke="#f01414" stroke-width="1.5" />
<line x1="682.0" y1="601.0" x2="695.0" y2="601.0" stroke="#f01414" stroke-width="1.5" />
<rect x="693.2" y="549.5" width="1.6" height="5.0" fill="#d8d8d8" opacity="0.6"/>
<text x="637.0" y="615.6" font-size="5.60" fill="#f0f000" stroke="#f0f000" stroke-width="0.45" text-anchor="middle" font-family="Liberation Sans" font-weight="bold" textLength="24.0" lengthAdjust="spacingAndGlyphs">JENDELA JB = 2 UNIT</text>
<rect x="625.0" y="616.2" width="24.0" height="1.0" fill="#f0f000"/>
<rect x="470.6" y="630.8" width="174.4" height="95.2" stroke="#b020b0" stroke-width="1.2" fill="none" stroke-dasharray="8 2 2 2"/>
<line x1="488.0" y1="631.0" x2="488.0" y2="726.0" stroke="#b020b0" stroke-width="1" stroke-dasharray="8 2 2 2"/>
<rect x="479.0" y="638.0" width="17.0" height="14.0" stroke="#d08a8a" stroke-width="1" fill="none" />
<line x1="522.0" y1="647.0" x2="522.0" y2="726.0" stroke="#d08a8a" stroke-width="1" />
<line x1="491.0" y1="644.0" x2="491.0" y2="660.0" stroke="#d08a8a" stroke-width="1" />
<rect x="527.0" y="649.0" width="38.0" height="30.0" stroke="#d08a8a" stroke-width="1" fill="none" />
<rect x="527.0" y="684.0" width="38.0" height="28.0" stroke="#d08a8a" stroke-width="1" fill="none" />
<rect x="522.0" y="716.0" width="38.0" height="12.0" stroke="#d08a8a" stroke-width="1" fill="none" />
<rect x="564.0" y="716.0" width="38.0" height="12.0" stroke="#d08a8a" stroke-width="1" fill="none" />
<rect x="632.0" y="682.0" width="8.0" height="44.0" stroke="#d08a8a" stroke-width="1" fill="none" />
<line x1="565.0" y1="648.0" x2="565.0" y2="679.0" stroke="#d08a8a" stroke-width="1" />
<path d="M495 642 L562 642 L562 683 L600 683 L600 713 L633 713" stroke="#14b814" stroke-width="2" fill="none"/>
<path d="M495 646 L559 646 L559 687 L596 687 L596 717 L633 717" stroke="#a09020" stroke-width="1.3" fill="none"/>
<path d="M495 639 L566 639 L566 680 L604 680 L604 710 L633 710" stroke="#f01414" stroke-width="1.3" fill="none"/>
<line x1="566.0" y1="643.0" x2="568.0" y2="690.0" stroke="#f01414" stroke-width="1.2" />
<line x1="556.0" y1="683.0" x2="595.0" y2="689.0" stroke="#f01414" stroke-width="1.2" />
<line x1="575.0" y1="710.0" x2="575.0" y2="726.0" stroke="#f01414" stroke-width="1.2" />
<line x1="560.0" y1="691.0" x2="595.0" y2="691.0" stroke="#f01414" stroke-width="1" />
<line x1="597.0" y1="708.0" x2="633.0" y2="708.0" stroke="#f01414" stroke-width="1.2" />
<line x1="584.0" y1="695.0" x2="590.0" y2="695.0" stroke="#f01414" stroke-width="1" />
<rect x="567.0" y="661.0" width="3.0" height="3.0" fill="#d8d8d8"/>
<rect x="581.0" y="668.0" width="3.0" height="3.0" fill="#d8d8d8"/>
<rect x="553.0" y="682.0" width="3.0" height="3.0" fill="#d8d8d8"/>
<path d="M476.6 625 L476.6 660 M476.6 627 L484 627 M481 624 L484 627 L481 630 M476.6 700 L476.6 736 M462 718 L500 718 M476.6 734 L484 734 M481 731 L484 734 L481 737 M462 712 L462 718 L468 718 M649 718 L664 718 M653 700 L653 718 M658 715 L653 711" stroke="#20c020" stroke-width="1.3" fill="none"/>
<rect x="484.0" y="623.0" width="3.0" height="5.0" fill="#f0f000"/>
<rect x="484.0" y="733.0" width="3.0" height="5.0" fill="#f0f000"/>
<rect x="459.0" y="710.0" width="4.0" height="5.0" fill="#f0f000"/>
<rect x="650.0" y="708.0" width="4.0" height="5.0" fill="#f0f000"/>
<text x="557.0" y="734.6" font-size="5.60" fill="#f0f000" stroke="#f0f000" stroke-width="0.45" text-anchor="middle" font-family="Liberation Sans" font-weight="bold" textLength="34.0" lengthAdjust="spacingAndGlyphs">KUSEN PINTU P2a = 2 UNIT</text>
<rect x="540.0" y="735.2" width="34.0" height="1.0" fill="#f0f000"/>
<text x="557.0" y="739.6" font-size="4.8" fill="#f0f000" stroke="#f0f000" stroke-width="0.35" text-anchor="middle" font-family="Liberation Sans" font-weight="bold" textLength="18.7" lengthAdjust="spacingAndGlyphs">(ALUMINIUM)</text>
<rect x="795.5" y="478.5" width="389.0" height="275.0" stroke="#6e3a3a" stroke-width="1" fill="none" />
<rect x="804.5" y="487.0" width="370.5" height="257.0" stroke="#1414c8" stroke-width="2" fill="none"/>
<line x1="1110.0" y1="487.0" x2="1110.0" y2="744.0" stroke="#1414c8" stroke-width="2" />
<line x1="1110.0" y1="725.0" x2="1175.0" y2="725.0" stroke="#1414c8" stroke-width="2" />
<text x="1121.0" y="737.5" font-size="5.4" fill="#f0f000" stroke="#f0f000" stroke-width="0.4" font-family="Liberation Sans" font-weight="bold" textLength="42" lengthAdjust="spacingAndGlyphs">DETAIL PINTU DAN JENDELA</text>
<rect x="844.8" y="505.0" width="53.0" height="90.4" stroke="#14b814" stroke-width="2.8" fill="none"/>
<rect x="843.3" y="503.5" width="56.0" height="93.4" stroke="#f01414" stroke-width="0.8" fill="none" opacity="0.8"/>
<line x1="871.0" y1="505.0" x2="871.0" y2="595.4" stroke="#14b814" stroke-width="2.8" />
<line x1="844.8" y1="496.0" x2="897.8" y2="496.0" stroke="#f01414" stroke-width="1" />
<line x1="844.8" y1="500.5" x2="897.8" y2="500.5" stroke="#f01414" stroke-width="1.2" />
<line x1="844.8" y1="494.0" x2="844.8" y2="504.0" stroke="#f01414" stroke-width="1" />
<path d="M842.3 499.0 L847.3 502.0" stroke="#f01414" stroke-width="1.5"/>
<line x1="871.0" y1="494.0" x2="871.0" y2="504.0" stroke="#f01414" stroke-width="1" />
<path d="M868.5 499.0 L873.5 502.0" stroke="#f01414" stroke-width="1.5"/>
<line x1="897.8" y1="494.0" x2="897.8" y2="504.0" stroke="#f01414" stroke-width="1" />
<path d="M895.3 499.0 L900.3 502.0" stroke="#f01414" stroke-width="1.5"/>
<rect x="856.4" y="497.2" width="3.0" height="1.6" fill="#d8d8d8" opacity="0.6"/>
<rect x="882.9" y="497.2" width="3.0" height="1.6" fill="#d8d8d8" opacity="0.6"/>
<rect x="869.3" y="492.7" width="4.0" height="1.6" fill="#d8d8d8" opacity="0.6"/>
<line x1="827.8" y1="505.0" x2="827.8" y2="595.4" stroke="#f01414" stroke-width="1" />
<line x1="832.8" y1="505.0" x2="832.8" y2="595.4" stroke="#f01414" stroke-width="1" />
<line x1="825.8" y1="505.0" x2="841.8" y2="505.0" stroke="#f01414" stroke-width="1" />
<line x1="825.8" y1="595.4" x2="841.8" y2="595.4" stroke="#f01414" stroke-width="1" />
<rect x="824.5" y="547.7" width="1.6" height="5.0" fill="#d8d8d8" opacity="0.6"/>
<rect x="829.5" y="547.7" width="1.6" height="5.0" fill="#d8d8d8" opacity="0.6"/>
<rect x="853.4" y="542.1" width="9.0" height="2.2" fill="#d8d8d8" opacity="0.6"/>
<rect x="855.4" y="545.3" width="5.0" height="1.8" fill="#d8d8d8" opacity="0.55"/>
<path d="M855.9 558.2 L858.4 553.7 L856.9 554.7 L859.9 550.2" stroke="#f01414" stroke-width="1.6" fill="none"/>
<rect x="879.9" y="542.1" width="9.0" height="2.2" fill="#d8d8d8" opacity="0.6"/>
<rect x="881.9" y="545.3" width="5.0" height="1.8" fill="#d8d8d8" opacity="0.55"/>
<path d="M882.4 558.2 L884.9 553.7 L883.4 554.7 L886.4 550.2" stroke="#f01414" stroke-width="1.6" fill="none"/>
<line x1="908.0" y1="505.0" x2="908.0" y2="595.0" stroke="#14b814" stroke-width="1.5" />
<line x1="911.0" y1="505.0" x2="911.0" y2="595.0" stroke="#14b814" stroke-width="1.5" />
<line x1="905.0" y1="501.0" x2="905.0" y2="597.0" stroke="#f01414" stroke-width="1" />
<line x1="910.0" y1="501.0" x2="910.0" y2="597.0" stroke="#f01414" stroke-width="1" />
<line x1="907.0" y1="505.0" x2="907.0" y2="595.0" stroke="#f01414" stroke-width="1" />
<line x1="903.0" y1="505.0" x2="912.0" y2="505.0" stroke="#f01414" stroke-width="1.5" />
<line x1="903.0" y1="595.0" x2="912.0" y2="595.0" stroke="#f01414" stroke-width="1.5" />
<rect x="910.2" y="547.5" width="1.6" height="5.0" fill="#d8d8d8" opacity="0.6"/>
<line x1="843.0" y1="599.0" x2="902.0" y2="599.0" stroke="#1aa6b4" stroke-width="1.3" />
<text x="871.0" y="606.6" font-size="5.60" fill="#f0f000" stroke="#f0f000" stroke-width="0.45" text-anchor="middle" font-family="Liberation Sans" font-weight="bold" textLength="35.0" lengthAdjust="spacingAndGlyphs">PINTU GESER P1 = 1 UNIT</text>
<rect x="853.5" y="607.2" width="35.0" height="1.0" fill="#f0f000"/>
<text x="871.0" y="611.6" font-size="4.8" fill="#f0f000" stroke="#f0f000" stroke-width="0.35" text-anchor="middle" font-family="Liberation Sans" font-weight="bold" textLength="19.2" lengthAdjust="spacingAndGlyphs">(KAYU)</text>
<rect x="953.0" y="505.0" width="119.7" height="90.4" stroke="#14b814" stroke-width="2.8" fill="none"/>
<rect x="951.5" y="503.5" width="122.7" height="93.4" stroke="#f01414" stroke-width="0.8" fill="none" opacity="0.8"/>
<line x1="983.0" y1="505.0" x2="983.0" y2="595.4" stroke="#14b814" stroke-width="2.8" />
<line x1="1012.6" y1="505.0" x2="1012.6" y2="595.4" stroke="#14b814" stroke-width="2.8" />
<line x1="1042.0" y1="505.0" x2="1042.0" y2="595.4" stroke="#14b814" stroke-width="2.8" />
<line x1="953.0" y1="496.0" x2="1072.7" y2="496.0" stroke="#f01414" stroke-width="1" />
<line x1="953.0" y1="500.5" x2="1072.7" y2="500.5" stroke="#f01414" stroke-width="1.2" />
<line x1="953.0" y1="494.0" x2="953.0" y2="504.0" stroke="#f01414" stroke-width="1" />
<path d="M950.5 499.0 L955.5 502.0" stroke="#f01414" stroke-width="1.5"/>
<line x1="983.0" y1="494.0" x2="983.0" y2="504.0" stroke="#f01414" stroke-width="1" />
<path d="M980.5 499.0 L985.5 502.0" stroke="#f01414" stroke-width="1.5"/>
<line x1="1012.6" y1="494.0" x2="1012.6" y2="504.0" stroke="#f01414" stroke-width="1" />
<path d="M1010.1 499.0 L1015.1 502.0" stroke="#f01414" stroke-width="1.5"/>
<line x1="1042.0" y1="494.0" x2="1042.0" y2="504.0" stroke="#f01414" stroke-width="1" />
<path d="M1039.5 499.0 L1044.5 502.0" stroke="#f01414" stroke-width="1.5"/>
<line x1="1072.7" y1="494.0" x2="1072.7" y2="504.0" stroke="#f01414" stroke-width="1" />
<path d="M1070.2 499.0 L1075.2 502.0" stroke="#f01414" stroke-width="1.5"/>
<rect x="966.5" y="497.2" width="3.0" height="1.6" fill="#d8d8d8" opacity="0.6"/>
<rect x="996.3" y="497.2" width="3.0" height="1.6" fill="#d8d8d8" opacity="0.6"/>
<rect x="1025.8" y="497.2" width="3.0" height="1.6" fill="#d8d8d8" opacity="0.6"/>
<rect x="1055.8" y="497.2" width="3.0" height="1.6" fill="#d8d8d8" opacity="0.6"/>
<rect x="1010.9" y="492.7" width="4.0" height="1.6" fill="#d8d8d8" opacity="0.6"/>
<line x1="944.0" y1="505.0" x2="944.0" y2="595.4" stroke="#f01414" stroke-width="1" />
<line x1="949.0" y1="505.0" x2="949.0" y2="595.4" stroke="#f01414" stroke-width="1" />
<line x1="942.0" y1="505.0" x2="958.0" y2="505.0" stroke="#f01414" stroke-width="1" />
<line x1="942.0" y1="595.4" x2="958.0" y2="595.4" stroke="#f01414" stroke-width="1" />
<rect x="940.7" y="547.7" width="1.6" height="5.0" fill="#d8d8d8" opacity="0.6"/>
<rect x="945.7" y="547.7" width="1.6" height="5.0" fill="#d8d8d8" opacity="0.6"/>
<rect x="963.5" y="542.1" width="9.0" height="2.2" fill="#d8d8d8" opacity="0.6"/>
<rect x="965.5" y="545.3" width="5.0" height="1.8" fill="#d8d8d8" opacity="0.55"/>
<path d="M966.0 558.2 L968.5 553.7 L967.0 554.7 L970.0 550.2" stroke="#f01414" stroke-width="1.6" fill="none"/>
<rect x="993.3" y="542.1" width="9.0" height="2.2" fill="#d8d8d8" opacity="0.6"/>
<rect x="995.3" y="545.3" width="5.0" height="1.8" fill="#d8d8d8" opacity="0.55"/>
<path d="M995.8 558.2 L998.3 553.7 L996.8 554.7 L999.8 550.2" stroke="#f01414" stroke-width="1.6" fill="none"/>
<rect x="1022.8" y="542.1" width="9.0" height="2.2" fill="#d8d8d8" opacity="0.6"/>
<rect x="1024.8" y="545.3" width="5.0" height="1.8" fill="#d8d8d8" opacity="0.55"/>
<path d="M1025.3 558.2 L1027.8 553.7 L1026.3 554.7 L1029.3 550.2" stroke="#f01414" stroke-width="1.6" fill="none"/>
<rect x="1052.8" y="542.1" width="9.0" height="2.2" fill="#d8d8d8" opacity="0.6"/>
<rect x="1054.8" y="545.3" width="5.0" height="1.8" fill="#d8d8d8" opacity="0.55"/>
<path d="M1055.3 558.2 L1057.8 553.7 L1056.3 554.7 L1059.3 550.2" stroke="#f01414" stroke-width="1.6" fill="none"/>
<line x1="1082.7" y1="505.0" x2="1082.7" y2="595.0" stroke="#14b814" stroke-width="1.5" />
<line x1="1085.7" y1="505.0" x2="1085.7" y2="595.0" stroke="#14b814" stroke-width="1.5" />
<line x1="1079.7" y1="501.0" x2="1079.7" y2="597.0" stroke="#f01414" stroke-width="1" />
<line x1="1085.0" y1="501.0" x2="1085.0" y2="597.0" stroke="#f01414" stroke-width="1" />
<line x1="1082.0" y1="505.0" x2="1082.0" y2="595.0" stroke="#f01414" stroke-width="1" />
<line x1="1077.7" y1="505.0" x2="1087.0" y2="505.0" stroke="#f01414" stroke-width="1.5" />
<line x1="1077.7" y1="595.0" x2="1087.0" y2="595.0" stroke="#f01414" stroke-width="1.5" />
<rect x="1085.2" y="547.5" width="1.6" height="5.0" fill="#d8d8d8" opacity="0.6"/>
<line x1="950.0" y1="599.0" x2="1075.0" y2="599.0" stroke="#1aa6b4" stroke-width="1.3" />
<text x="1012.0" y="607.6" font-size="5.60" fill="#f0f000" stroke="#f0f000" stroke-width="0.45" text-anchor="middle" font-family="Liberation Sans" font-weight="bold" textLength="35.0" lengthAdjust="spacingAndGlyphs">JENDELA J2 = 14 UNIT</text>
<rect x="994.5" y="608.2" width="35.0" height="1.0" fill="#f0f000"/>
<text x="1012.0" y="612.6" font-size="4.8" fill="#f0f000" stroke="#f0f000" stroke-width="0.35" text-anchor="middle" font-family="Liberation Sans" font-weight="bold" textLength="19.2" lengthAdjust="spacingAndGlyphs">(PVC)</text>
<rect x="841.0" y="632.5" width="60.0" height="89.1" stroke="#14b814" stroke-width="2.8" fill="none"/>
<rect x="839.5" y="631.0" width="63.0" height="92.1" stroke="#f01414" stroke-width="0.8" fill="none" opacity="0.8"/>
<line x1="871.0" y1="632.5" x2="871.0" y2="721.6" stroke="#14b814" stroke-width="2.8" />
<line x1="841.0" y1="623.5" x2="901.0" y2="623.5" stroke="#f01414" stroke-width="1" />
<line x1="841.0" y1="628.0" x2="901.0" y2="628.0" stroke="#f01414" stroke-width="1.2" />
<line x1="841.0" y1="621.5" x2="841.0" y2="631.5" stroke="#f01414" stroke-width="1" />
<path d="M838.5 626.5 L843.5 629.5" stroke="#f01414" stroke-width="1.5"/>
<line x1="871.0" y1="621.5" x2="871.0" y2="631.5" stroke="#f01414" stroke-width="1" />
<path d="M868.5 626.5 L873.5 629.5" stroke="#f01414" stroke-width="1.5"/>
<line x1="901.0" y1="621.5" x2="901.0" y2="631.5" stroke="#f01414" stroke-width="1" />
<path d="M898.5 626.5 L903.5 629.5" stroke="#f01414" stroke-width="1.5"/>
<rect x="854.5" y="624.7" width="3.0" height="1.6" fill="#d8d8d8" opacity="0.6"/>
<rect x="884.5" y="624.7" width="3.0" height="1.6" fill="#d8d8d8" opacity="0.6"/>
<rect x="869.0" y="620.2" width="4.0" height="1.6" fill="#d8d8d8" opacity="0.6"/>
<line x1="832.0" y1="632.5" x2="832.0" y2="721.6" stroke="#f01414" stroke-width="1" />
<line x1="837.0" y1="632.5" x2="837.0" y2="721.6" stroke="#f01414" stroke-width="1" />
<line x1="830.0" y1="632.5" x2="846.0" y2="632.5" stroke="#f01414" stroke-width="1" />
<line x1="830.0" y1="721.6" x2="846.0" y2="721.6" stroke="#f01414" stroke-width="1" />
<rect x="828.7" y="674.5" width="1.6" height="5.0" fill="#d8d8d8" opacity="0.6"/>
<rect x="833.7" y="674.5" width="1.6" height="5.0" fill="#d8d8d8" opacity="0.6"/>
<rect x="851.5" y="668.9" width="9.0" height="2.2" fill="#d8d8d8" opacity="0.6"/>
<rect x="853.5" y="672.1" width="5.0" height="1.8" fill="#d8d8d8" opacity="0.55"/>
<path d="M854.0 685.0 L856.5 680.5 L855.0 681.5 L858.0 677.0" stroke="#f01414" stroke-width="1.6" fill="none"/>
<rect x="881.5" y="668.9" width="9.0" height="2.2" fill="#d8d8d8" opacity="0.6"/>
<rect x="883.5" y="672.1" width="5.0" height="1.8" fill="#d8d8d8" opacity="0.55"/>
<path d="M884.0 685.0 L886.5 680.5 L885.0 681.5 L888.0 677.0" stroke="#f01414" stroke-width="1.6" fill="none"/>
<line x1="913.0" y1="632.0" x2="913.0" y2="721.0" stroke="#14b814" stroke-width="1.5" />
<line x1="916.0" y1="632.0" x2="916.0" y2="721.0" stroke="#14b814" stroke-width="1.5" />
<line x1="910.0" y1="628.0" x2="910.0" y2="723.0" stroke="#f01414" stroke-width="1" />
<line x1="916.0" y1="628.0" x2="916.0" y2="723.0" stroke="#f01414" stroke-width="1" />
<line x1="913.0" y1="632.0" x2="913.0" y2="721.0" stroke="#f01414" stroke-width="1" />
<line x1="908.0" y1="632.0" x2="918.0" y2="632.0" stroke="#f01414" stroke-width="1.5" />
<line x1="908.0" y1="721.0" x2="918.0" y2="721.0" stroke="#f01414" stroke-width="1.5" />
<rect x="916.2" y="674.0" width="1.6" height="5.0" fill="#d8d8d8" opacity="0.6"/>
<line x1="838.0" y1="725.0" x2="905.0" y2="725.0" stroke="#1aa6b4" stroke-width="1.3" />
<text x="871.0" y="732.6" font-size="5.60" fill="#f0f000" stroke="#f0f000" stroke-width="0.45" text-anchor="middle" font-family="Liberation Sans" font-weight="bold" textLength="35.0" lengthAdjust="spacingAndGlyphs">PINTU P4 = 14 UNIT</text>
<rect x="853.5" y="733.2" width="35.0" height="1.0" fill="#f0f000"/>
<text x="871.0" y="737.6" font-size="4.8" fill="#f0f000" stroke="#f0f000" stroke-width="0.35" text-anchor="middle" font-family="Liberation Sans" font-weight="bold" textLength="19.2" lengthAdjust="spacingAndGlyphs">(KAYU & PANEL)</text>
<rect x="1003.0" y="632.5" width="33.0" height="92.5" stroke="#14b814" stroke-width="2.8" fill="none"/>
<rect x="1001.5" y="631.0" width="36.0" height="95.5" stroke="#f01414" stroke-width="0.8" fill="none" opacity="0.8"/>
<line x1="1003.0" y1="646.7" x2="1036.0" y2="646.7" stroke="#14b814" stroke-width="2.8" />
<line x1="1003.0" y1="623.5" x2="1036.0" y2="623.5" stroke="#f01414" stroke-width="1" />
<line x1="1003.0" y1="628.0" x2="1036.0" y2="628.0" stroke="#f01414" stroke-width="1.2" />
<line x1="1003.0" y1="621.5" x2="1003.0" y2="631.5" stroke="#f01414" stroke-width="1" />
<path d="M1000.5 626.5 L1005.5 629.5" stroke="#f01414" stroke-width="1.5"/>
<line x1="1036.0" y1="621.5" x2="1036.0" y2="631.5" stroke="#f01414" stroke-width="1" />
<path d="M1033.5 626.5 L1038.5 629.5" stroke="#f01414" stroke-width="1.5"/>
<rect x="1018.0" y="624.7" width="3.0" height="1.6" fill="#d8d8d8" opacity="0.6"/>
<rect x="1017.5" y="620.2" width="4.0" height="1.6" fill="#d8d8d8" opacity="0.6"/>
<line x1="991.0" y1="632.5" x2="991.0" y2="725.0" stroke="#f01414" stroke-width="1" />
<line x1="996.0" y1="632.5" x2="996.0" y2="725.0" stroke="#f01414" stroke-width="1" />
<line x1="989.0" y1="632.5" x2="1005.0" y2="632.5" stroke="#f01414" stroke-width="1" />
<line x1="989.0" y1="646.7" x2="1005.0" y2="646.7" stroke="#f01414" stroke-width="1" />
<line x1="989.0" y1="725.0" x2="1005.0" y2="725.0" stroke="#f01414" stroke-width="1" />
<rect x="987.7" y="676.2" width="1.6" height="5.0" fill="#d8d8d8" opacity="0.6"/>
<rect x="992.7" y="676.2" width="1.6" height="5.0" fill="#d8d8d8" opacity="0.6"/>
<rect x="1009.0" y="651.0" width="9.0" height="33.0" stroke="#f01414" stroke-width="2" fill="none" />
<rect x="1011.0" y="653.0" width="5.0" height="29.0" stroke="#14b814" stroke-width="0.9" fill="none" />
<rect x="1007.5" y="649.5" width="12.0" height="36.0" stroke="#14b814" stroke-width="0.9" fill="none" />
<rect x="1022.0" y="651.0" width="9.0" height="33.0" stroke="#f01414" stroke-width="2" fill="none" />
<rect x="1024.0" y="653.0" width="5.0" height="29.0" stroke="#14b814" stroke-width="0.9" fill="none" />
<rect x="1020.5" y="649.5" width="12.0" height="36.0" stroke="#14b814" stroke-width="0.9" fill="none" />
<rect x="1009.0" y="688.0" width="22.0" height="25.0" stroke="#f01414" stroke-width="2" fill="none" />
<rect x="1011.0" y="690.0" width="18.0" height="21.0" stroke="#14b814" stroke-width="0.9" fill="none" />
<rect x="1007.5" y="686.5" width="25.0" height="28.0" stroke="#14b814" stroke-width="0.9" fill="none" />
<rect x="1016.5" y="699.0" width="7.0" height="2.0" fill="#d8d8d8" opacity="0.6"/>
<rect x="1015.5" y="636.0" width="7.0" height="2.0" fill="#d8d8d8" opacity="0.6"/>
<path d="M1017.0 645.0 L1019.5 640.5 L1018.0 641.5 L1021.0 637.0" stroke="#f01414" stroke-width="1.6" fill="none"/>
<line x1="1053.8" y1="632.0" x2="1053.8" y2="725.0" stroke="#14b814" stroke-width="1.5" />
<line x1="1056.8" y1="632.0" x2="1056.8" y2="725.0" stroke="#14b814" stroke-width="1.5" />
<line x1="1050.8" y1="628.0" x2="1050.8" y2="727.0" stroke="#f01414" stroke-width="1" />
<line x1="1055.7" y1="628.0" x2="1055.7" y2="727.0" stroke="#f01414" stroke-width="1" />
<line x1="1052.7" y1="632.0" x2="1052.7" y2="725.0" stroke="#f01414" stroke-width="1" />
<line x1="1048.8" y1="632.0" x2="1057.7" y2="632.0" stroke="#f01414" stroke-width="1.5" />
<line x1="1048.8" y1="725.0" x2="1057.7" y2="725.0" stroke="#f01414" stroke-width="1.5" />
<rect x="1055.9" y="676.0" width="1.6" height="5.0" fill="#d8d8d8" opacity="0.6"/>
<line x1="1063.0" y1="632.0" x2="1063.0" y2="725.0" stroke="#f01414" stroke-width="1.3" />
<line x1="1000.0" y1="726.0" x2="1040.0" y2="726.0" stroke="#1aa6b4" stroke-width="1.3" />
<line x1="1046.0" y1="726.0" x2="1060.0" y2="726.0" stroke="#1aa6b4" stroke-width="1.3" />
<text x="1020.0" y="734.6" font-size="5.60" fill="#f0f000" stroke="#f0f000" stroke-width="0.45" text-anchor="middle" font-family="Liberation Sans" font-weight="bold" textLength="32.0" lengthAdjust="spacingAndGlyphs">JENDELA JB = 2 UNIT</text>
<rect x="1004.0" y="735.2" width="32.0" height="1.0" fill="#f0f000"/>
<text x="1020.0" y="739.6" font-size="4.8" fill="#f0f000" stroke="#f0f000" stroke-width="0.35" text-anchor="middle" font-family="Liberation Sans" font-weight="bold" textLength="17.6" lengthAdjust="spacingAndGlyphs">(ALUMINIUM)</text>
</g>
</svg>

<!-- ============ TITLE BAR ============ -->
<div id="title" class="a"></div>
<div id="qat" class="a"></div>
<div class="t" style="left:554px;top:4px;color:#1b0a07;font-size:10px;letter-spacing:-0.3px">Autodesk AutoCAD 2019&nbsp;&nbsp;&nbsp;&nbsp;detailkusen.dwg</div>
<svg class="a" style="left:33px;top:0" width="210" height="19">
 <g fill="#f4f4f4">
  <path d="M7 4h10l3 3v9H7z"/>
  <path d="M26 6h6l2 2h8v8H26z" fill="#dde6ee"/><path d="M26 16l3-7h14l-3 7z" fill="#cfdbe6"/>
  <rect x="46" y="3" width="12" height="13" fill="#d9d9d9"/><rect x="49" y="3" width="6" height="5" fill="#fafafa"/><rect x="48" y="11" width="8" height="4" fill="#fafafa"/>
  <rect x="65" y="3" width="12" height="13" fill="#d0d0d0"/><rect x="68" y="3" width="6" height="5" fill="#fafafa"/><path d="M72 10l5 2-3 4z" fill="#f5c54a"/>
  <rect x="84.5" y="3.5" width="8" height="12" fill="#3a3a3a" stroke="#d8d8d8"/><rect x="89" y="11" width="6" height="4" fill="#e8b04a"/>
  <rect x="104.5" y="3.5" width="8" height="12" fill="#3a3a3a" stroke="#d8d8d8"/><path d="M101 9h5v-2l3 3-3 3v-2h-5z" fill="#5aa8e0"/>
  <rect x="122" y="6" width="14" height="7" fill="#fafafa"/><rect x="125" y="3" width="8" height="3" fill="#fafafa"/><rect x="125" y="12" width="8" height="4" fill="#4aa0e0"/>
  <path d="M142 9l5-4v3h6v3h-6v3z" fill="#bcbcbc"/><path d="M159 9l3 0-1.5 2z" fill="#bcbcbc"/>
  <path d="M183 9l-5-4v3h-6v3h6v3z" fill="#bcbcbc"/><path d="M188 9l3 0-1.5 2z" fill="#bcbcbc"/>
  <rect x="198" y="5" width="8" height="1.5" fill="#fafafa"/><path d="M198 8h8l-4 4z" fill="#fafafa"/>
 </g>
</svg>
<!-- search -->
<div class="a" style="left:1048px;top:0;width:358px;height:19px;background:#a6a6a6"></div>
<div class="a" style="left:1049px;top:1px;width:9px;height:17px;background:#c4c4c4"></div>
<svg class="a" style="left:1050px;top:6px" width="8" height="8"><path d="M2 1l4 3-4 3z" fill="#fff"/></svg>
<div class="a" style="left:1060px;top:1px;width:143px;height:17px;background:#757575;border:1px solid #5e5e5e"></div>
<div class="t" style="left:1063px;top:4px;color:#c4c4c4;font-style:italic;font-size:9.5px;letter-spacing:-0.5px">Type a keyword or phrase</div>
<svg class="a" style="left:1203px;top:0" width="203" height="19">
 <g fill="#1e1e1e">
  <path d="M5.5 4.5h3v10h-4.5zM10.5 4.5h3l1.5 10h-4.5z" fill="#f4f4f4" stroke="#1e1e1e" stroke-width="1"/><rect x="8" y="7" width="3" height="3"/>
 </g>
 <circle cx="31" cy="7" r="3" fill="#f0f0f0" stroke="#333" stroke-width="1"/><path d="M25 15q6-7 12 0z" fill="#f0f0f0" stroke="#333" stroke-width="1"/>
 <path d="M107 10l3 0-1.5 2z" fill="#f4f4f4"/>
 <path d="M119 5h3l2 7h8l2-5h-11" fill="none" stroke="#1e1e1e" stroke-width="1.3"/><circle cx="125" cy="14" r="1.2" fill="#1e1e1e"/><circle cx="131" cy="14" r="1.2" fill="#1e1e1e"/>
 <path d="M145 14l6-10 6 10z" fill="none" stroke="#1e1e1e" stroke-width="1.4"/><circle cx="151" cy="11" r="1.5" fill="#1e1e1e"/>
 <path d="M160 10l3 0-1.5 2z" fill="#f4f4f4"/>
 <circle cx="183" cy="10" r="6" fill="#f6f6f6" stroke="#1e1e1e" stroke-width="1.3"/>
 <text x="180.3" y="13.5" font-size="9" font-weight="bold" fill="#1e1e1e" font-family="Liberation Sans">?</text>
 <path d="M197 10l3 0-1.5 2z" fill="#f4f4f4"/>
</svg>
<div class="t" style="left:1243px;top:4px;color:#f2f2f2;font-size:10.5px">Sign In</div>
<svg class="a" style="left:1406px;top:0" width="130" height="19">
 <rect x="33" y="9" width="9" height="1.4" fill="#f0f0f0"/>
 <rect x="70" y="6" width="7" height="7" fill="none" stroke="#f0f0f0" stroke-width="1.2"/><path d="M72 6V4h7v7h-2" fill="none" stroke="#f0f0f0" stroke-width="1"/>
 <path d="M106 5l8 8M114 5l-8 8" stroke="#f0f0f0" stroke-width="1.3"/>
</svg>

<!-- ============ RIBBON TABS ============ -->
<div id="tabrow" class="a"></div>
<div class="a" style="left:38px;top:22px;width:40px;height:15px;background:#595959;border:1px solid #3e3e3e;border-bottom:none"></div>
<div class="t" style="left:44px;top:22px;color:#f0f0f0">Home</div>
<div class="t" style="left:86px;top:22px">Insert</div>
<div class="t" style="left:126px;top:22px">Annotate</div>
<div class="t" style="left:181px;top:22px">Parametric</div>
<div class="t" style="left:242px;top:22px">View</div>
<div class="t" style="left:278px;top:22px">Manage</div>
<div class="t" style="left:329px;top:22px">Output</div>
<div class="t" style="left:375px;top:22px">Add-ins</div>
<div class="t" style="left:425px;top:22px">Collaborate</div>
<div class="t" style="left:490px;top:22px">Express Tools</div>
<div class="t" style="left:561px;top:22px">Featured Apps</div>
<svg class="a" style="left:646px;top:23px" width="22" height="10"><rect x="1" y="2" width="11" height="6" rx="1.5" fill="#e6e6e6"/><path d="M4 6l2.5-3 2.5 3z" fill="#505050"/><path d="M15 4l5 0-2.5 3z" fill="#e6e6e6"/></svg>

<div id="logo" class="a"></div>
<svg class="a" style="left:0;top:0" width="34" height="34">
 <path d="M4 23 L11.5 2 L16 2 L22.5 23 L17.5 23 L16 18 L11 18 L9.5 23 Z M12 14 L15 14 L13.5 8.5 Z" fill="#d41818"/>
 <path d="M25 14.5l5 0-2.5 3z" fill="#222"/>
</svg>
<!-- ============ RIBBON PANELS ============ -->
<div id="ribbon" class="a">
 <div class="panel" style="left:1px;width:180px"><div class="ptitle">Draw<i></i></div></div>
 <div class="panel" style="left:181px;width:200px"><div class="ptitle">Modify<i></i></div></div>
 <div class="panel" style="left:381px;width:151px"><div class="ptitle">Annotation<i></i></div></div>
 <div class="panel" style="left:532px;width:219px"><div class="ptitle">Layers<i></i></div></div>
 <div class="panel" style="left:751px;width:129px"><div class="ptitle">Block<i></i></div></div>
 <div class="panel" style="left:880px;width:212px"><div class="ptitle">Properties<i></i></div></div>
 <div class="panel" style="left:1092px;width:54px"><div class="ptitle">Groups<i></i></div></div>
 <div class="panel" style="left:1146px;width:79px"><div class="ptitle">Utilities<i></i></div></div>
 <div class="panel" style="left:1225px;width:64px"><div class="ptitle">Clipboard</div></div>
 <div class="panel" style="left:1289px;width:49px"><div class="ptitle" style="text-align:left;padding-left:3px">View<i></i><span style="position:absolute;left:40px;top:0;font-size:8px">&#8600;</span></div></div>
</div>
<!-- draw panel -->
<svg class="a" style="left:0;top:36px" width="1340" height="62">
 <g fill="none" stroke="#d8d8d8" stroke-width="1.2">
  <path d="M7 30L30 6.6"/><path d="M41 24.3H57M57 12.2a6 6 0 0 1 0 12.1"/>
  <circle cx="92.4" cy="17.8" r="12.6"/><path d="M92 18L99.6 10.9"/>
  <path d="M119.5 29Q123 13 141.3 7.4"/>
  <rect x="150.5" y="8.5" width="11" height="8.5"/>
  <ellipse cx="155.5" cy="31.5" rx="6" ry="4"/>
  <path d="M148 46.5h16M148 56h16M151 43v16M161 43v16" stroke-width="1"/>
 </g>
 <g fill="#5bb0f0">
  <rect x="5.5" y="28.5" width="3" height="3"/><rect x="28.5" y="5" width="3" height="3"/>
  <rect x="39.5" y="22.8" width="3" height="3"/><rect x="55.5" y="22.8" width="3" height="3"/><rect x="55.5" y="10.7" width="3" height="3"/>
  <rect x="90.5" y="16.3" width="3" height="3"/><path d="M100 10l0.5 4-4-1z"/>
  <rect x="118" y="27.5" width="3" height="3"/><rect x="124.5" y="12.4" width="3" height="3"/><rect x="139.8" y="6" width="3" height="3"/>
  <rect x="149.5" y="7.5" width="2" height="2"/><rect x="160.5" y="16" width="2" height="2"/><circle cx="155.5" cy="31.5" r="1"/><circle cx="161.5" cy="31.5" r="1"/>
  <rect x="152" y="47" width="8.5" height="8.5" opacity="0.45"/>
 </g>
 <g fill="#e0e0e0"><path d="M167 12h6l-3 3zM167 31h6l-3 3zM167 50h6l-3 3zM89.4 48h6l-3 3zM126.6 48h6l-3 3z"/></g>
 <!-- modify -->
 <rect x="183.5" y="4.5" width="47" height="17" fill="#474747" stroke="#2e2e2e"/>
 <g fill="none" stroke="#f0f0f0" stroke-width="1.4"><path d="M192.5 6.5v12M186.5 12.5h12M190 9l2.5-2.5 2.5 2.5M190 16l2.5 2.5 2.5-2.5M189 10l-2.5 2.5 2.5 2.5M196 10l2.5 2.5-2.5 2.5"/></g>
 <g fill="none" stroke="#d8d8d8" stroke-width="1.2">
  <circle cx="188.5" cy="28.5" r="2.2"/><path d="M192 27.5h3.5v3.5"/>
  <rect x="186.5" y="45.5" width="5" height="12"/>
  <path d="M253 8.5a5.5 5.5 0 1 0 2.5 3"/>
  <path d="M244 37.5L249.5 27.5V37.5Z"/>
  <rect x="244.5" y="50.5" width="6.5" height="7"/>
  <path d="M304 9l5 7M310 9l-5 7"/><circle cx="304.5" cy="17.5" r="1.6"/><circle cx="310" cy="17.5" r="1.6"/>
  <path d="M299.5 37.5v-3"/>
 </g>
 <path d="M256 4.5l-0.5 4 -3.5-1.5z" fill="#d8d8d8"/>
 <g fill="none" stroke="#5bb0f0" stroke-width="1.2">
  <circle cx="190.5" cy="35.5" r="2"/><circle cx="195" cy="35.5" r="2"/>
  <path d="M192 45.5h3.5l4 12h-6M195 53l-2 2"/>
  <path d="M250.5 27.5L256 37.5H250.5Z"/>
  <path d="M244.5 50.5V44.5h12.5v13h-6"/>
  <path d="M299.5 33.5q0-8 8-8"/>
  <rect x="300.5" y="45.5" width="4.5" height="4.5" rx="0.8"/><rect x="307" y="45.5" width="4.5" height="4.5" rx="0.8"/><rect x="300.5" y="52" width="4.5" height="4.5" rx="0.8"/><rect x="307" y="52" width="4.5" height="4.5" rx="0.8"/>
  <path d="M363.5 28.5l3-3h6v8l-3 3"/><rect x="360.5" y="28.5" width="9" height="8"/><path d="M369.5 28.5l3-3"/>
  <path d="M372.5 47h-7a4.5 4.5 0 0 0 0 9h7M372.5 50h-6.5a1.5 1.5 0 0 0 0 3h6.5"/>
 </g>
 <path d="M308 25.5h4" stroke="#d8d8d8" stroke-width="1.2"/>
 <path d="M363 16l7-9 3 2-7 9z" fill="#f0c050"/><path d="M361 19l2.5-3 2.5 2-3 2z" fill="#e03030"/><path d="M360 20.5h13" stroke="#5bb0f0"/>
 <path d="M298 7h14" stroke="#5bb0f0" stroke-dasharray="1.5 1" stroke-width="1"/>
 <g fill="#e0e0e0"><path d="M342 11h6l-3 3zM343 30h6l-3 3zM343 49h6l-3 3z"/></g>
 <!-- annotation -->
 <path d="M390 30L398 7h4l9 23h-4l-2.5-7h-8l-2.5 7zM397 20h6l-3-9z" fill="#d8d8d8"/>
 <path d="M397 48h6l-3 3z" fill="#e0e0e0"/>
 <g fill="none" stroke="#d8d8d8" stroke-width="1.1"><path d="M429 5v26M455 5v26M430 11h24M432 9l-2 2 2 2M452 9l2 2-2 2"/>
 <path d="M471 8v12M485 8v12M471 13h14" /><circle cx="482" cy="29" r="2.5"/><path d="M480 31l-7 7"/>
 <rect x="471" y="45" width="13" height="11"/><path d="M471 48h13M471 51.5h13M475 45v11M479.5 45v11" stroke-width="0.8"/></g>
 <path d="M472 13h12" stroke="#5bb0f0" stroke-width="1.2"/>
 <g stroke="#f0c050" stroke-width="1.6" stroke-linecap="round"><path d="M436 22.5l3 2M442 19v3M448 22.5l-3 2M432.5 28.5h4M447.5 28.5h4"/></g>
 <g fill="#e0e0e0"><path d="M522 10h6l-3 3zM523 29h6l-3 3z"/></g>
 <!-- layers -->
 <g fill="#d4d4d4"><path d="M544 10l5-5h17l-5 5zM544 16.5l5-5h17l-5 5zM544 23l5-5h17l-5 5z"/></g>
 <rect x="560" y="15" width="11" height="14" fill="#f0f0f0"/><rect x="562" y="17" width="7" height="5" fill="#6ab4ee"/>
 <rect x="582.5" y="4.5" width="165" height="16" fill="#464646" stroke="#2e2e2e"/>
 <circle cx="592" cy="11" r="4" fill="#f2cd6a"/><rect x="590" y="15" width="4" height="3" fill="#eee"/>
 <circle cx="606" cy="12" r="3.5" fill="#f2cd6a"/><path d="M606 6v12M600 12h12M602 8l8 8M610 8l-8 8" stroke="#f2cd6a" stroke-width="0.8"/>
 <rect x="616" y="11" width="9" height="7" fill="#f2cd6a"/><path d="M622 11v-3a2.5 2.5 0 0 1 5 0" stroke="#f2cd6a" fill="none" stroke-width="1.3"/>
 <rect x="632.5" y="6.5" width="11" height="11" fill="#ee0000" stroke="#222"/>
 <text x="648" y="16" font-size="10" fill="#e0e0e0" font-family="Liberation Sans">1</text>
 <path d="M741 11h6l-3 3z" fill="#e8e8e8"/>
 <g fill="#d0d0d0">
  <path d="M585 28l3-3h9l-3 3zM604 27l3-3h9l-3 3zM604 30l3-3h9l-3 3zM604 33l3-3h9l-3 3zM623 28l3-3h9l-3 3zM642 28l3-3h9l-3 3z"/>
  <path d="M585 47l3-3h9l-3 3zM585 50l3-3h9l-3 3zM585 53l3-3h9l-3 3zM604 46l3-3h9l-3 3zM604 49l3-3h9l-3 3zM604 52l3-3h9l-3 3zM623 46l3-3h9l-3 3zM623 49l3-3h9l-3 3zM623 52l3-3h9l-3 3zM642 47l3-3h9l-3 3z"/>
  <path d="M662 33l3-3h9l-3 3zM662 36l3-3h9l-3 3zM662 52l3-3h9l-3 3zM662 49l3-3h9l-3 3zM662 46l3-3h9l-3 3z"/>
 </g>
 <circle cx="595" cy="33" r="2.5" fill="#6ab4ee"/><circle cx="634" cy="34" r="2.5" fill="#6ab4ee" /><rect x="650" y="32" width="5" height="5" fill="#6ab4ee"/><circle cx="669" cy="27" r="2.5" fill="#d8d8d8"/><path d="M662 30l3-3h9l-3 3z" fill="#6ab4ee"/>
 <circle cx="596" cy="52" r="2.5" fill="#f2cd6a"/><circle cx="634" cy="53" r="2.5" fill="#f2cd6a"/><rect x="650" y="52" width="5" height="4" fill="#f2cd6a"/><path d="M672 52l3 2-2 2-3-2z" fill="#f2cd6a"/>
 <path d="M611 37l4-4M611 56l4-4" stroke="#e8e8e8" stroke-width="1.2"/>
 <!-- block -->
 <path d="M766 4h9l3 3v14h-12z" fill="#6ab4ee"/>
 <rect x="755" y="10" width="16" height="13" fill="#8a8a8a" stroke="#c8c8c8" stroke-width="1.2"/><circle cx="772" cy="25" r="6" fill="#666" stroke="#c8c8c8" stroke-width="1.2"/>
 <g fill="none" stroke="#c8c8c8" stroke-width="1.1"><path d="M788 9h8v6h-8zM788 28h8v6h-8z"/><circle cx="794" cy="16" r="2.5"/><circle cx="794" cy="35" r="2.5"/><path d="M788 49l5-3 6 4-5 6z"/></g>
 <circle cx="796" cy="8" r="2.5" fill="#f2cd6a"/><path d="M794 31l4-5 2 1-4 5zM794 50l4-5 2 1-4 5z" fill="#f2cd6a"/>
 <path d="M868 47h6l-3 3z" fill="#e0e0e0"/>
 <!-- properties -->
 <rect x="893" y="4" width="16" height="22" fill="#dcdcdc"/><rect x="895" y="7" width="11" height="8" fill="#6ab4ee"/><path d="M896 19h4M896 22h3M902 19v4" stroke="#666" stroke-width="0.8"/>
 <path d="M902 24l6-6 3 3-6 6z" fill="#f2cd6a"/><path d="M908 17l3-3 3 3-3 3z" fill="#eee"/>
 <circle cx="936" cy="11.5" r="6" fill="#7ac070"/><path d="M936 11.5V5.5a6 6 0 0 1 6 6z" fill="#e8d050"/><path d="M936 11.5h6a6 6 0 0 1-3 5.2z" fill="#e05050"/><path d="M936 11.5l3 5.2a6 6 0 0 1-6 0z" fill="#8060e0"/><path d="M936 11.5l-3 5.2a6 6 0 0 1-3-5.2z" fill="#20b0b0"/>
 <g fill="#e0e0e0"><rect x="930" y="25" width="13" height="2"/><rect x="930" y="29" width="13" height="2"/><rect x="930" y="33" width="13" height="2"/></g>
 <g fill="#c8c8c8"><rect x="930" y="45" width="13" height="1"/><rect x="930" y="48" width="13" height="1"/><rect x="930" y="51" width="13" height="1"/><rect x="930" y="54" width="13" height="1"/></g>
 <rect x="945.5" y="4.5" width="143" height="16" fill="#464646" stroke="#2e2e2e"/>
 <rect x="945.5" y="23.5" width="143" height="16" fill="#464646" stroke="#2e2e2e"/>
 <rect x="945.5" y="42.5" width="143" height="16" fill="#464646" stroke="#2e2e2e"/>
 <rect x="955.5" y="6.5" width="12" height="12" fill="#ee0000" stroke="#777"/>
 <rect x="948" y="31" width="50" height="1.3" fill="#e8e8e8"/><rect x="948" y="50" width="50" height="1.3" fill="#e8e8e8"/>
 <g fill="#e8e8e8"><path d="M1081 11h6l-3 3zM1081 30h6l-3 3zM1081 49h6l-3 3z"/></g>
 <path d="M1083 68l4 4M1087 69v3h-3" stroke="#ddd" stroke-width="0.9" fill="none"/>
 <!-- groups -->
 <path d="M1099 8.5h-3v22h3M1109 30.5h3v-10" stroke="#e8e8e8" stroke-width="1.4" fill="none"/>
 <rect x="1100" y="12" width="8" height="5" fill="#6ab4ee"/><circle cx="1104" cy="23.5" r="4" fill="none" stroke="#aaa" stroke-width="1.6"/>
 <path d="M1114 6l1.5 3.5 3.5-1-1.5 3.5 3.5 2-3.5 1.5 1 3.5-3.5-1.5-1.5 3.5-1.5-3.5-3.5 1.5 1-3.5-3.5-1.5 3.5-2-1.5-3.5 3.5 1z" fill="#f2cd6a"/>
 <g fill="none" stroke="#bbb" stroke-width="1"><path d="M1136 6.5h2v12h-2M1131 25.5h-2v10h2M1137 25.5h2v7"/><circle cx="1132.5" cy="15.5" r="1.8"/><circle cx="1133" cy="33" r="1.8"/></g>
 <rect x="1130" y="8" width="5" height="4" fill="none" stroke="#6ab4ee" stroke-width="1"/><rect x="1131" y="27" width="4" height="3.5" fill="none" stroke="#6ab4ee" stroke-width="1"/>
 <path d="M1136 11l4 4M1140 11l-4 4" stroke="#e04040" stroke-width="1.3"/><path d="M1135 37l5-5 2 2-5 5z" fill="#f2cd6a"/><path d="M1140 32l1.5-1.5 2 2-1.5 1.5z" fill="#e04040"/>
 <rect x="1126.5" y="43.5" width="18" height="16" fill="#5a7ea8" stroke="#2a4a70"/><path d="M1130 46h-1v10h1" stroke="#ddd" fill="none"/><circle cx="1133" cy="49" r="1.5" fill="none" stroke="#4fae5a"/><circle cx="1133" cy="53" r="1.5" fill="none" stroke="#4fae5a"/><path d="M1136 49l5.5 5.5-3 0 1.5 3-1.5 1-1.5-3-1 1.5z" fill="#f4f4f4"/>
 <!-- utilities -->
 <path d="M1165 16h20M1164.5 12v9M1185.5 12v9M1168 16l-3-2v4zM1182 16l3-2v4z" stroke="#d0d0d0" stroke-width="1.1" fill="none"/>
 <rect x="1164" y="20" width="22" height="5" fill="#f2cd6a"/><path d="M1166 20v2M1169 20v2M1172 20v2M1175 20v2M1178 20v2M1181 20v2M1184 20v2" stroke="#b89040" stroke-width="0.8"/>
 <path d="M1206 12l6 6-2.5 0.5 2 3-1.5 1-2-3-2 2z" fill="#eee"/><path d="M1213 6l-2 4h3l-2 4" stroke="#f2cd6a" stroke-width="1.3" fill="none"/><rect x="1212" y="11" width="7" height="8" fill="#f0f0f0"/><rect x="1213.5" y="12.5" width="4" height="5" fill="#6ab4ee"/>
 <rect x="1206.5" y="25.5" width="11" height="11" fill="none" stroke="#4fae5a" stroke-dasharray="1 1"/><path d="M1208 35v-7h7v-2" stroke="#4fae5a" stroke-width="2.5" fill="none"/><path d="M1213 30l5 5-2 0.5 1.5 2.5-1 1-1.5-2.5-2 1.5z" fill="#eee"/>
 <rect x="1208.5" y="43.5" width="9" height="13" fill="none" stroke="#d8d8d8" stroke-width="1.2"/><path d="M1209 47.5h8M1209 50.5h8M1209 53.5h8M1211.5 47v9M1214.5 47v9" stroke="#d8d8d8" stroke-width="0.8"/>
 <path d="M1173 48h6l-3 3z" fill="#e0e0e0"/>
 <!-- clipboard -->
 <rect x="1236" y="8" width="18" height="19" fill="#d4a760"/><rect x="1240" y="6" width="8" height="3" fill="#e8e8e8"/>
 <path d="M1242 14h10l4 4v12h-14z" fill="#d8d8d8"/>
 <path d="M1270 6h8v10h-8zM1272 9h4M1272 12h4" stroke="#d8d8d8" fill="none" stroke-width="1.1"/><path d="M1276 14l4-4M1276 10l4 4" stroke="#e8e8e8" stroke-width="1"/>
 <rect x="1271" y="25" width="7" height="9" fill="#bbb"/><rect x="1274" y="28" width="7" height="9" fill="#d8d8d8"/>
 <path d="M1243 48h6l-3 3z" fill="#e0e0e0"/>
 <!-- view base -->
 <path d="M1301 9h9v7h16v10h-25z" fill="#dadada"/>
 <path d="M1310 48h6l-3 3z" fill="#e0e0e0"/>
</svg>
<div class="t" style="left:9px;top:70px">Line</div>
<div class="t" style="left:36px;top:70px">Polyline</div>
<div class="t" style="left:81px;top:70px">Circle</div>
<div class="t" style="left:122px;top:70px">Arc</div>
<div class="t" style="left:203px;top:43px">Move</div>
<div class="t" style="left:203px;top:62px">Copy</div>
<div class="t" style="left:203px;top:81px">Stretch</div>
<div class="t" style="left:261px;top:43px">Rotate</div>
<div class="t" style="left:261px;top:62px">Mirror</div>
<div class="t" style="left:261px;top:81px">Scale</div>
<div class="t" style="left:316px;top:43px">Trim</div>
<div class="t" style="left:316px;top:62px">Fillet</div>
<div class="t" style="left:316px;top:81px">Array</div>
<div class="t" style="left:391px;top:70px">Text</div>
<div class="t" style="left:419px;top:70px">Dimension</div>
<div class="t" style="left:488px;top:43px">Linear</div>
<div class="t" style="left:488px;top:62px">Leader</div>
<div class="t" style="left:488px;top:81px">Table</div>
<div class="t" style="left:543px;top:70px">Layer</div>
<div class="t" style="left:535px;top:82px">Properties</div>
<div class="t" style="left:679px;top:62px">Make Current</div>
<div class="t" style="left:679px;top:81px">Match Layer</div>
<div class="t" style="left:756px;top:70px">Insert</div>
<div class="t" style="left:803px;top:43px">Create</div>
<div class="t" style="left:803px;top:62px">Edit</div>
<div class="t" style="left:803px;top:81px">Edit Attributes</div>
<div class="t" style="left:891px;top:70px">Match</div>
<div class="t" style="left:883px;top:82px">Properties</div>
<div class="t" style="left:976px;top:43px">ByLayer</div>
<div class="t" style="left:1001px;top:62px">ByLayer</div>
<div class="t" style="left:1001px;top:81px">ByLayer</div>
<div class="t" style="left:1096px;top:70px">Group</div>
<div class="t" style="left:1157px;top:70px">Measure</div>
<div class="t" style="left:1235px;top:70px">Paste</div>
<div class="t" style="left:1303px;top:70px">Base</div>


<!-- ============ FILE TABS ============ -->
<div id="filetabs" class="a">
<svg class="a" style="left:0;top:0" width="1536" height="24"><path d="M14 22 C18 22 20 4 26 3 L105 3 C111 3 112 6 114 12 L117 22 Z" fill="#4a4a4a"/><path d="M113 22 C117 22 119 4 125 3 L203 3 C209 3 210 6 212 12 L215 22 Z" fill="#4a4a4a"/><path d="M211 22 C215 22 217 4 223 3 L301 3 C307 3 308 6 310 12 L313 22 Z" fill="#4a4a4a"/><path d="M309 22 C313 22 315 4 321 3 L399 3 C405 3 406 6 408 12 L411 22 Z" fill="#4a4a4a"/><path d="M407 22 C411 22 413 4 419 3 L497 3 C503 3 504 6 506 12 L509 22 Z" fill="#4a4a4a"/><path d="M505 22 C509 22 511 4 517 3 L595 3 C601 3 602 6 604 12 L607 22 Z" fill="#4a4a4a"/><path d="M603 22 C607 22 609 4 615 3 L693 3 C699 3 700 6 702 12 L705 22 Z" fill="#4a4a4a"/><path d="M701 22 C705 22 707 4 713 3 L799 3 C805 3 806 6 808 12 L811 22 Z" fill="#4a4a4a"/><path d="M812 22 C816 22 818 4 824 3 L955 3 C961 3 962 6 964 12 L967 22 Z" fill="#4a4a4a"/><path d="M963 22 C967 22 969 4 975 3 L1053 3 C1059 3 1060 6 1062 12 L1065 22 Z" fill="#4a4a4a"/><path d="M1061 22 C1065 22 1067 4 1073 3 L1151 3 C1157 3 1158 6 1160 12 L1163 22 Z" fill="#4a4a4a"/><path d="M1159 22 C1163 22 1165 4 1171 3 L1251 3 C1257 3 1258 6 1260 12 L1263 22 Z" fill="#4a4a4a"/><path d="M1259 22 C1263 22 1265 4 1271 3 L1350 3 C1356 3 1357 6 1359 12 L1362 22 Z" fill="#5d5d5d"/><path d="M1362 22 C1366 22 1367 5 1372 4 L1380 4 C1384 4 1385 8 1386 22 Z" fill="#474747"/><path d="M0 22 L0 3 L12 3 C16 3 17 10 18 22 Z" fill="#2a2a2a"/></svg>
<div class="t" style="left:25px;top:7px;color:#b0b0b0;font-size:10px;letter-spacing:-0.35px">Start</div>
<div class="t" style="left:124px;top:7px;color:#b0b0b0;font-size:10px;letter-spacing:-0.35px">POS-JAGA</div>
<svg class="a" style="left:198px;top:9px" width="8" height="8"><path d="M1 1l6 6M7 1l-6 6" stroke="#8c8c8c" stroke-width="1.4"/></svg>
<div class="t" style="left:222px;top:7px;color:#b0b0b0;font-size:10px;letter-spacing:-0.35px">EL-29</div>
<svg class="a" style="left:296px;top:9px" width="8" height="8"><path d="M1 1l6 6M7 1l-6 6" stroke="#8c8c8c" stroke-width="1.4"/></svg>
<div class="t" style="left:320px;top:7px;color:#b0b0b0;font-size:10px;letter-spacing:-0.35px">EL-25-26-27-28</div>
<svg class="a" style="left:394px;top:9px" width="8" height="8"><path d="M1 1l6 6M7 1l-6 6" stroke="#8c8c8c" stroke-width="1.4"/></svg>
<div class="t" style="left:418px;top:7px;color:#b0b0b0;font-size:10px;letter-spacing:-0.35px">EL-24</div>
<svg class="a" style="left:492px;top:9px" width="8" height="8"><path d="M1 1l6 6M7 1l-6 6" stroke="#8c8c8c" stroke-width="1.4"/></svg>
<div class="t" style="left:516px;top:7px;color:#b0b0b0;font-size:10px;letter-spacing:-0.35px">EL-20-21-22-23</div>
<svg class="a" style="left:590px;top:9px" width="8" height="8"><path d="M1 1l6 6M7 1l-6 6" stroke="#8c8c8c" stroke-width="1.4"/></svg>
<div class="t" style="left:614px;top:7px;color:#b0b0b0;font-size:10px;letter-spacing:-0.35px">EL-19</div>
<svg class="a" style="left:688px;top:9px" width="8" height="8"><path d="M1 1l6 6M7 1l-6 6" stroke="#8c8c8c" stroke-width="1.4"/></svg>
<div class="t" style="left:712px;top:7px;color:#b0b0b0;font-size:10px;letter-spacing:-0.35px">EL-11-12-13-14-15</div>
<svg class="a" style="left:794px;top:9px" width="8" height="8"><path d="M1 1l6 6M7 1l-6 6" stroke="#8c8c8c" stroke-width="1.4"/></svg>
<div class="t" style="left:823px;top:7px;color:#b0b0b0;font-size:10px;letter-spacing:-0.35px">EL-03-04-05-06-07-08-09-10</div>
<svg class="a" style="left:950px;top:9px" width="8" height="8"><path d="M1 1l6 6M7 1l-6 6" stroke="#8c8c8c" stroke-width="1.4"/></svg>
<div class="t" style="left:974px;top:7px;color:#b0b0b0;font-size:10px;letter-spacing:-0.35px">EL-02</div>
<svg class="a" style="left:1048px;top:9px" width="8" height="8"><path d="M1 1l6 6M7 1l-6 6" stroke="#8c8c8c" stroke-width="1.4"/></svg>
<div class="t" style="left:1072px;top:7px;color:#b0b0b0;font-size:10px;letter-spacing:-0.35px">EL-01</div>
<svg class="a" style="left:1146px;top:9px" width="8" height="8"><path d="M1 1l6 6M7 1l-6 6" stroke="#8c8c8c" stroke-width="1.4"/></svg>
<div class="t" style="left:1170px;top:7px;color:#b0b0b0;font-size:10px;letter-spacing:-0.35px">drawlist</div>
<svg class="a" style="left:1246px;top:9px" width="8" height="8"><path d="M1 1l6 6M7 1l-6 6" stroke="#8c8c8c" stroke-width="1.4"/></svg>
<div class="t" style="left:1270px;top:7px;color:#ececec;font-size:10px;letter-spacing:-0.35px">detailkusen</div>
<svg class="a" style="left:1345px;top:9px" width="8" height="8"><path d="M1 1l6 6M7 1l-6 6" stroke="#8c8c8c" stroke-width="1.4"/></svg>
<div class="t" style="left:1369px;top:5px;color:#dcdcdc;font-size:13px;font-weight:bold">+</div>
<svg class="a" style="left:1520px;top:4px" width="10" height="14"><path d="M1 2l4 3 4-3M1 7l4 3 4-3" stroke="#ddd" stroke-width="1.3" fill="none"/></svg>
</div>

<!-- ============ VIEWPORT OVERLAYS ============ -->
<div class="t" style="left:3px;top:144px;color:#d4d4d4;font-size:10px;letter-spacing:-0.1px">[−][Top][2D Wireframe]</div>
<svg class="a" style="left:1476px;top:140px" width="50" height="20">
 <rect x="6" y="11" width="8" height="2.5" fill="#e8e8e8"/>
 <rect x="21" y="8" width="7" height="7" fill="none" stroke="#e8e8e8" stroke-width="2"/><path d="M24 7V6h6v6h-1" fill="none" stroke="#e8e8e8" stroke-width="1"/>
 <path d="M38 7l7 7M45 7l-7 7" stroke="#e8e8e8" stroke-width="1.8"/>
</svg>
<div class="a" style="left:1530px;top:138px;width:6px;height:664px;background:#dbe3ec"></div>
<!-- viewcube -->
<svg class="a" style="left:1405px;top:165px" width="120" height="150">
 <circle cx="59" cy="58" r="44" fill="none" stroke="#585b5f" stroke-width="8"/>
 <rect x="38" y="37" width="42" height="42" fill="#b9b9b9"/>
 <rect x="43" y="42" width="32" height="32" fill="#aeaeae"/>
 <text x="59" y="62" font-size="10" fill="#585858" text-anchor="middle" font-family="Liberation Sans" font-weight="bold">TOP</text>
 <text x="59" y="19" font-size="14" fill="#c8c8c8" text-anchor="middle" font-family="Liberation Sans" font-weight="bold">N</text>
 <text x="59" y="108" font-size="14" fill="#c8c8c8" text-anchor="middle" font-family="Liberation Sans" font-weight="bold">S</text>
 <text x="14" y="63" font-size="14" fill="#c8c8c8" text-anchor="middle" font-family="Liberation Sans" font-weight="bold">W</text>
 <text x="104" y="63" font-size="14" fill="#c8c8c8" text-anchor="middle" font-family="Liberation Sans" font-weight="bold">E</text>
 <rect x="40" y="128" width="38" height="13" rx="3" fill="#9a9a9a" stroke="#7c7c7c"/>
 <text x="55" y="138" font-size="9" fill="#5a5a5a" text-anchor="middle" font-family="Liberation Sans">WCS</text>
</svg>
<!-- nav bar -->
<svg class="a" style="left:1502px;top:327px" width="26" height="170">
 <rect x="0.5" y="0.5" width="25" height="168" rx="3" fill="#55585c" stroke="#5f6266"/>
 <g fill="none" stroke="#77797c" stroke-width="1.3">
  <circle cx="13" cy="22" r="7"/><circle cx="13" cy="22" r="4"/>
  <path d="M8 60v-8m3 8v-12m3 12v-12m3 12v-10m-10 8q0 8 6 9 6 0 7-7"/>
  <path d="M5 70l16 16M5 86l6-6M15 72l6-2v6"/><circle cx="18" cy="83" r="3"/>
  <path d="M13 100v20M5 110h16M8 105l-3 5 3 5M18 105l3 5-3 5"/>
  <rect x="5" y="130" width="4" height="4"/><rect x="11" y="130" width="4" height="4"/><rect x="17" y="130" width="4" height="4"/>
  <rect x="5" y="137" width="16" height="10"/><path d="M11 139l5 3-5 3z"/>
 </g>
</svg>

<!-- ============ COMMAND LINE ============ -->
<div class="cmdh" style="top:735px">Command:</div>
<div class="cmdh" style="top:751px">**** No System Variable Changed ****</div>
<div class="cmdh" style="top:767px">Command:</div>
<div class="a" style="left:453px;top:781px;width:631px;height:21px;background:#bfc0c1;border:1px solid #5a5a5a"></div>
<div class="a" style="left:453px;top:781px;width:44px;height:21px;background:linear-gradient(#505050,#3a3a3a)"></div>
<svg class="a" style="left:453px;top:781px" width="80" height="21">
 <g fill="#9a9a9a"><rect x="4" y="4" width="1" height="1"/><rect x="6" y="4" width="1" height="1"/><rect x="4" y="7" width="1" height="1"/><rect x="6" y="7" width="1" height="1"/><rect x="4" y="10" width="1" height="1"/><rect x="6" y="10" width="1" height="1"/><rect x="4" y="13" width="1" height="1"/><rect x="6" y="13" width="1" height="1"/><rect x="4" y="16" width="1" height="1"/><rect x="6" y="16" width="1" height="1"/></g>
 <path d="M12 7l7 7M19 7l-7 7" stroke="#e8e8e8" stroke-width="1.4"/>
 <path d="M26 17l8-8M32 6a3 3 0 1 0 4 4" stroke="#e8e8e8" stroke-width="1.6" fill="none"/>
 <rect x="49" y="5" width="12" height="10" fill="none" stroke="#4a4a4a" stroke-width="1.2"/><rect x="49" y="5" width="12" height="2" fill="#4a4a4a"/><path d="M51 10l2 1-2 1M54 13h3" stroke="#4a4a4a" stroke-width="0.8" fill="none"/>
 <path d="M63 9l4 0-2 2z" fill="#4a4a4a"/>
</svg>
<div class="t" style="left:527px;top:786px;color:#8a8a8a;font-style:italic;font-family:'Liberation Mono',monospace;font-size:9.5px;letter-spacing:0.3px">Type a command</div>
<svg class="a" style="left:1070px;top:786px" width="12" height="10"><path d="M3 7h7l-3.5-4z" fill="#1a1a1a"/></svg>

<!-- ============ STATUS / LAYOUT TABS ============ -->
<div id="status" class="a"></div>
<div class="a" style="left:10px;top:803px;width:45px;height:15px;background:#6a6a6a;border-radius:0 0 6px 6px;transform:skewX(-15deg)"></div>
<div class="a" style="left:57px;top:803px;width:50px;height:15px;background:#525252;border-radius:0 0 6px 6px;transform:skewX(-15deg)"></div>
<div class="a" style="left:109px;top:803px;width:50px;height:15px;background:#525252;border-radius:0 0 6px 6px;transform:skewX(-15deg)"></div>
<div class="a" style="left:163px;top:803px;width:18px;height:15px;background:#4a4a4a;border-radius:0 0 6px 6px;transform:skewX(-15deg)"></div>
<div class="t" style="left:18px;top:804px;color:#fff;font-weight:bold;font-size:10px">Model</div>
<div class="t" style="left:64px;top:804px;color:#c8c8c8">Layout1</div>
<div class="t" style="left:116px;top:804px;color:#c8c8c8">Layout2</div>
<div class="t" style="left:167px;top:804px;color:#e0e0e0;font-size:13px;font-weight:bold">+</div>
<div class="sb" style="left:1086px;width:38px"></div>
<div class="sb" style="left:1126px;width:51px"></div>
<div class="sb" style="left:1179px;width:134px"></div>
<div class="sb" style="left:1315px;width:84px"></div>
<div class="sb" style="left:1400px;width:33px"></div>
<div class="sb" style="left:1434px;width:19px"></div>
<div class="sb" style="left:1454px;width:20px"></div>
<div class="sb" style="left:1475px;width:20px"></div>
<div class="sb" style="left:1496px;width:40px"></div>
<div class="hl" style="left:1200px;width:17px"></div>
<div class="hl" style="left:1263px;width:17px"></div>
<div class="hl" style="left:1282px;width:18px"></div>
<div class="hl" style="left:1316px;width:17px"></div>
<div class="t" style="left:1089px;top:807px;color:#e8e8e8;font-size:10px">MODEL</div>
<svg class="a" style="left:1080px;top:802px" width="456" height="19">
 <g stroke="#e0e0e0" stroke-width="1.1" fill="none">
  <path d="M51 6v12M55 6v12M59 6v12M49 9h12M49 13h12M49 16h12"/>
  <path d="M104 8l-3 0 1.5 2z" stroke="none"/>
  <path d="M104 6v12h12"/><path d="M104 14h4v4"/>
  <circle cx="128" cy="13" r="5"/><path d="M128 13l5-5M130 12h4"/>
  <path d="M153 6l12 12" stroke="#e04040"/><path d="M159 5v14" stroke="#40c040"/><circle cx="159" cy="12" r="1.5"/>
  <path d="M187 16l9-9M187 16h12"/><circle cx="191" cy="12" r="1.2"/>
  <rect x="208" y="9" width="12" height="9"/><rect x="205" y="6" width="3" height="3"/>
  <path d="M245 7l-3 10M236 17l6-5 6 5" /><circle cx="250" cy="8" r="2"/>
  <path d="M264 7l-3 10M255 17l6-5 6 5M267 6l-2 3h3l-2 3"/>
  <path d="M283 6v11M277 17l6-5 6 5"/>
  <circle cx="330" cy="12" r="3.5" stroke-width="2.5"/><circle cx="330" cy="12" r="6" stroke-width="2" stroke-dasharray="2 1.6"/>
  <path d="M362 5v14M355 12h14" stroke-width="1.4"/>
  <rect x="380" y="5" width="5" height="5"/><circle cx="390" cy="8" r="2.5"/><path d="M383 17l3-5 3 5z"/>
  <rect x="420" y="7" width="13" height="10"/><path d="M422 15l3-3M431 9l-3 3"/>
  <path d="M441 6h13M441 11h13M441 16h13" stroke-width="1.4"/>
 </g>
 <g fill="#e0e0e0"><rect x="69" y="8" width="2" height="2"/><rect x="73" y="8" width="2" height="2"/><rect x="77" y="8" width="2" height="2"/><rect x="69" y="12" width="2" height="2"/><rect x="73" y="12" width="2" height="2"/><rect x="77" y="12" width="2" height="2"/><rect x="69" y="16" width="2" height="2"/><rect x="73" y="16" width="2" height="2"/><rect x="77" y="16" width="2" height="2"/>
  <path d="M88 12h6l-3 3zM141 12h6l-3 3zM172 12h6l-3 3zM223 12h6l-3 3zM310 12h6l-3 3zM344 12h6l-3 3z"/></g>
 <rect x="399" y="6" width="9" height="10" fill="#6ab4ee"/><rect x="399" y="13" width="6" height="4" fill="#f2cd6a"/><path d="M404 15l2 2 4-5" stroke="#30c030" stroke-width="1.5" fill="none"/>
 <text x="296" y="15" font-size="10" fill="#e0e0e0" font-family="Liberation Sans" letter-spacing="-0.5">1:1</text>
</svg>

</body></html>
